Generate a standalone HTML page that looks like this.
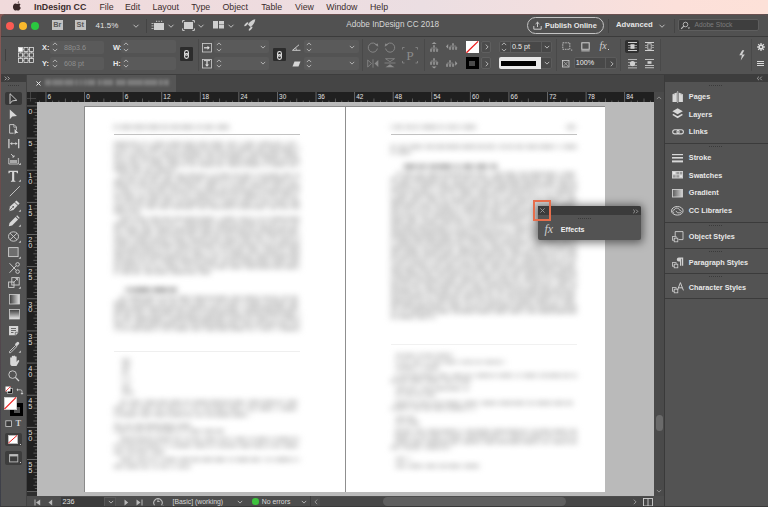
<!DOCTYPE html>
<html><head><meta charset="utf-8">
<style>
*{margin:0;padding:0;box-sizing:border-box}
html,body{width:768px;height:507px;overflow:hidden;background:#535353;font-family:"Liberation Sans",sans-serif}
.a{position:absolute}
.t{line-height:12px;white-space:nowrap;color:#e4e4e4;font-size:7px}
svg{overflow:visible}
</style></head><body>

<div class="a" style="left:0px;top:0px;width:768px;height:14px;background:linear-gradient(90deg,#f0dadb 0%,#eedcdf 35%,#ebdee2 55%,#f3dfdf 72%,#fce0da 88%,#fde1d8 100%)"></div>
<svg class="a" style="left:13.2px;top:1.3px" width="9" height="10" viewBox="0 0 9 10"><path d="M6.1 0.2c0.1 .8-.5 1.7-1.4 1.8-.1-.8.5-1.7 1.4-1.8zM7.6 3.3c-.6.4-.9 1-.9 1.6 0 .9.5 1.5 1.2 1.8-.2.6-.5 1.1-.9 1.6-.5.7-1 1.3-1.7 1.3s-.9-.4-1.6-.4-1 .4-1.6.4C1.5 9.6.9 8.8.5 8.1-.3 6.7-.2 4.6.7 3.5c.4-.6 1.1-1 1.8-1 .7 0 1.1.4 1.6.4s.9-.4 1.7-.4c.6 0 1.3.3 1.8.8z" fill="#3a2828"/></svg>
<div class="a t" style="left:34px;top:1.2000000000000002px;color:#3a2c2c;font-size:8.8px;font-weight:bold">InDesign CC</div>
<div class="a t" style="left:99.5px;top:1.2000000000000002px;color:#3a2c2c;font-size:8.8px">File</div>
<div class="a t" style="left:125px;top:1.2000000000000002px;color:#3a2c2c;font-size:8.8px">Edit</div>
<div class="a t" style="left:152.5px;top:1.2000000000000002px;color:#3a2c2c;font-size:8.8px">Layout</div>
<div class="a t" style="left:191.2px;top:1.2000000000000002px;color:#3a2c2c;font-size:8.8px">Type</div>
<div class="a t" style="left:222.5px;top:1.2000000000000002px;color:#3a2c2c;font-size:8.8px">Object</div>
<div class="a t" style="left:261.2px;top:1.2000000000000002px;color:#3a2c2c;font-size:8.8px">Table</div>
<div class="a t" style="left:295px;top:1.2000000000000002px;color:#3a2c2c;font-size:8.8px">View</div>
<div class="a t" style="left:326.2px;top:1.2000000000000002px;color:#3a2c2c;font-size:8.8px">Window</div>
<div class="a t" style="left:370px;top:1.2000000000000002px;color:#3a2c2c;font-size:8.8px">Help</div>
<div class="a" style="left:0px;top:14px;width:6px;height:493px;background:linear-gradient(180deg,#8a5a56,#6a4c4c 35%,#48444c 80%,#3c3f48)"></div>
<div class="a" style="left:1px;top:14px;width:767px;height:493px;background:#535353;border-radius:5px 5px 0 0"></div>
<div class="a" style="left:1px;top:14px;width:767px;height:22px;background:#515151;border-radius:5px 5px 0 0;border-top:1px solid #6a5050;border-left:1px solid #5a4a4a"></div>
<div class="a" style="left:1px;top:36px;width:767px;height:1px;background:#3b3b3b"></div>
<div class="a" style="left:6px;top:22px;width:8px;height:8px;background:#fb5a52;border-radius:50%"></div>
<div class="a" style="left:18.5px;top:22px;width:8px;height:8px;background:#fbb92c;border-radius:50%"></div>
<div class="a" style="left:31.200000000000003px;top:22px;width:8px;height:8px;background:#2bc840;border-radius:50%"></div>
<div class="a" style="left:52px;top:20px;width:10.5px;height:10px;background:#c2c2c2"></div>
<div class="a t" style="left:53.2px;top:19.2px;color:#5a5a5a;font-weight:bold;font-size:7.4px">Br</div>
<div class="a" style="left:75px;top:20px;width:10.5px;height:10px;background:#c2c2c2"></div>
<div class="a t" style="left:76.6px;top:19.2px;color:#5a5a5a;font-weight:bold;font-size:7.4px">St</div>
<div class="a t" style="left:95.6px;top:20px;font-size:8px;color:#e2e2e2">41.5%</div>
<svg class="a" style="left:131.6px;top:22.8px;" width="8" height="6" viewBox="0 0 8 6"><path d="M1.5 1.75 L4 4.25 L6.5 1.75" fill="none" stroke="#c8c8c8" stroke-width="0.9"/></svg>
<div class="a" style="left:146px;top:19px;width:1px;height:14px;background:#444"></div>
<svg class="a" style="left:151px;top:20px;" width="14" height="11" viewBox="0 0 14 11"><rect x="3" y="3" width="10" height="7" fill="#cfcfcf"/><g fill="#cfcfcf"><rect x="0.5" y="3" width="2" height="0.8"/><rect x="0.5" y="5.5" width="2" height="0.8"/><rect x="0.5" y="8" width="2" height="0.8"/><rect x="5" y="0.8" width="1.2" height="1"/><rect x="7.5" y="0.8" width="1.2" height="1"/><rect x="10" y="0.8" width="1.2" height="1"/></g></svg>
<svg class="a" style="left:167px;top:22.5px;" width="8" height="6" viewBox="0 0 8 6"><path d="M1.5 1.75 L4 4.25 L6.5 1.75" fill="none" stroke="#c8c8c8" stroke-width="0.9"/></svg>
<svg class="a" style="left:182px;top:20px;" width="13" height="11" viewBox="0 0 13 11"><rect x="2" y="2" width="9" height="7" fill="#cfcfcf"/><path d="M0.6 0.6h2M0.6 0.6v2M12.4 0.6h-2M12.4 0.6v2M0.6 10.4h2M0.6 10.4v-2M12.4 10.4h-2M12.4 10.4v-2" stroke="#cfcfcf" stroke-width="1"/></svg>
<svg class="a" style="left:197px;top:22.5px;" width="8" height="6" viewBox="0 0 8 6"><path d="M1.5 1.75 L4 4.25 L6.5 1.75" fill="none" stroke="#c8c8c8" stroke-width="0.9"/></svg>
<svg class="a" style="left:213px;top:21px;" width="11" height="8" viewBox="0 0 11 8"><rect x="0" y="0" width="5" height="7.5" fill="#cfcfcf"/><rect x="6" y="0" width="5" height="3.5" fill="#cfcfcf"/><rect x="6" y="4" width="5" height="3.5" fill="#cfcfcf"/></svg>
<svg class="a" style="left:227px;top:22.5px;" width="8" height="6" viewBox="0 0 8 6"><path d="M1.5 1.75 L4 4.25 L6.5 1.75" fill="none" stroke="#c8c8c8" stroke-width="0.9"/></svg>
<svg class="a" style="left:243px;top:18px;" width="14" height="14" viewBox="0 0 14 14"><g fill="#cfcfcf"><path d="M12.3 1.2C9.6 1.6 6.6 3.6 5 6.6L7.3 8.9C10.3 7.2 12 4 12.3 1.2z"/><ellipse cx="3.3" cy="6.2" rx="2.6" ry="1" transform="rotate(-42 3.3 6.2)"/><ellipse cx="7.6" cy="10.7" rx="2.6" ry="1" transform="rotate(-48 7.6 10.7)"/></g></svg>
<div class="a t" style="left:346.2px;top:19.4px;font-size:8.2px;color:#d6d6d6">Adobe InDesign CC 2018</div>
<div class="a" style="left:526.5px;top:17px;width:77.5px;height:17px;border:1px solid #c4c4c4;border-radius:9px"></div>
<svg class="a" style="left:533px;top:20.5px;" width="9" height="9" viewBox="0 0 9 9"><path d="M4.5 6V1.2M2.6 3L4.5 1.2 6.4 3" fill="none" stroke="#d8d8d8" stroke-width="0.9"/><path d="M0.8 5v3.2h7.4V5" fill="none" stroke="#d8d8d8" stroke-width="0.9"/></svg>
<div class="a t" style="left:545px;top:19.6px;font-size:7.4px;font-weight:bold;color:#e6e6e6">Publish Online</div>
<div class="a" style="left:607.7px;top:19px;width:1px;height:14px;background:#444"></div>
<div class="a t" style="left:616px;top:19.4px;font-size:7.7px;font-weight:bold;color:#e6e6e6">Advanced</div>
<svg class="a" style="left:657.8px;top:22.8px;" width="8" height="6" viewBox="0 0 8 6"><path d="M1.5 1.75 L4 4.25 L6.5 1.75" fill="none" stroke="#c8c8c8" stroke-width="0.9"/></svg>
<div class="a" style="left:673.5px;top:19px;width:1px;height:14px;background:#444"></div>
<div class="a" style="left:678.3px;top:19.4px;width:81.2px;height:12px;background:#3e3e3e;border:1px solid #5e5e5e;border-radius:2px"></div>
<svg class="a" style="left:680px;top:21px;" width="11" height="9" viewBox="0 0 11 9"><circle cx="5.5" cy="3.5" r="2.3" fill="none" stroke="#bdbdbd" stroke-width="0.9"/><path d="M3.8 5.2L1.2 7.8" stroke="#bdbdbd" stroke-width="1.1"/><path d="M7.6 6.6h2.6l-1.3 1.3z" fill="#bdbdbd"/></svg>
<div class="a t" style="left:694.5px;top:19.4px;font-size:6.7px;color:#7c7c7c">Adobe Stock</div>
<div class="a" style="left:1px;top:37px;width:767px;height:36.5px;background:#535353"></div>
<div class="a" style="left:1px;top:73.5px;width:767px;height:1px;background:#3d3d3d"></div>
<div class="a" style="left:4.5px;top:48.5px;width:1px;height:12px;background:#3f3f3f"></div>
<svg class="a" style="left:17px;top:46px;" width="18" height="18" viewBox="0 0 18 18"><rect x="1.5" y="1.5" width="4" height="4" fill="#ffffff" stroke="#e2e2e2" stroke-width="0.8"/><rect x="7.0" y="1.5" width="4" height="4" fill="none" stroke="#e2e2e2" stroke-width="0.8"/><rect x="12.5" y="1.5" width="4" height="4" fill="none" stroke="#e2e2e2" stroke-width="0.8"/><rect x="1.5" y="7.0" width="4" height="4" fill="none" stroke="#e2e2e2" stroke-width="0.8"/><rect x="7.0" y="7.0" width="4" height="4" fill="none" stroke="#e2e2e2" stroke-width="0.8"/><rect x="12.5" y="7.0" width="4" height="4" fill="none" stroke="#e2e2e2" stroke-width="0.8"/><rect x="1.5" y="12.5" width="4" height="4" fill="none" stroke="#e2e2e2" stroke-width="0.8"/><rect x="7.0" y="12.5" width="4" height="4" fill="none" stroke="#e2e2e2" stroke-width="0.8"/><rect x="12.5" y="12.5" width="4" height="4" fill="none" stroke="#e2e2e2" stroke-width="0.8"/><path d="M5.5 3.5h1.5M11 3.5h1.5M5.5 9h1.5M11 9h1.5M5.5 14.5h1.5M11 14.5h1.5M3.5 5.5v1.5M3.5 11v1.5M9 5.5v1.5M9 11v1.5M14.5 5.5v1.5M14.5 11v1.5" stroke="#e2e2e2" stroke-width="0.6"/></svg>
<div class="a t" style="left:42px;top:41.8px;font-weight:bold;color:#eaeaea;font-size:7.4px">X:</div>
<div class="a t" style="left:42px;top:57.6px;font-weight:bold;color:#eaeaea;font-size:7.4px">Y:</div>
<div class="a" style="left:50px;top:40.5px;width:54px;height:13.2px;background:#5a5a5a;border-radius:2px"></div>
<div class="a" style="left:50px;top:57px;width:54px;height:13px;background:#5a5a5a;border-radius:2px"></div>
<svg class="a" style="left:51px;top:41.1px;" width="8" height="6" viewBox="0 0 8 6"><path d="M1.7999999999999998 4.1 L4 1.9 L6.2 4.1" fill="none" stroke="#c6c6c6" stroke-width="0.8"/></svg>
<svg class="a" style="left:51px;top:46.9px;" width="8" height="6" viewBox="0 0 8 6"><path d="M1.7999999999999998 1.9 L4 4.1 L6.2 1.9" fill="none" stroke="#c6c6c6" stroke-width="0.8"/></svg>
<svg class="a" style="left:51px;top:57.6px;" width="8" height="6" viewBox="0 0 8 6"><path d="M1.7999999999999998 4.1 L4 1.9 L6.2 4.1" fill="none" stroke="#c6c6c6" stroke-width="0.8"/></svg>
<svg class="a" style="left:51px;top:63.400000000000006px;" width="8" height="6" viewBox="0 0 8 6"><path d="M1.7999999999999998 1.9 L4 4.1 L6.2 1.9" fill="none" stroke="#c6c6c6" stroke-width="0.8"/></svg>
<div class="a t" style="left:64px;top:41.5px;color:#8e8e8e;font-size:7.2px">88p3.6</div>
<div class="a t" style="left:64px;top:57.6px;color:#8e8e8e;font-size:7.2px">608 pt</div>
<div class="a t" style="left:113px;top:41.8px;font-weight:bold;color:#eaeaea;font-size:7.4px">W:</div>
<div class="a t" style="left:113px;top:57.6px;font-weight:bold;color:#eaeaea;font-size:7.4px">H:</div>
<div class="a" style="left:121px;top:40.4px;width:55px;height:12.9px;background:#5a5a5a;border-radius:2px"></div>
<div class="a" style="left:121px;top:57px;width:55px;height:12.8px;background:#5a5a5a;border-radius:2px"></div>
<svg class="a" style="left:122px;top:41.1px;" width="8" height="6" viewBox="0 0 8 6"><path d="M1.7999999999999998 4.1 L4 1.9 L6.2 4.1" fill="none" stroke="#c6c6c6" stroke-width="0.8"/></svg>
<svg class="a" style="left:122px;top:46.9px;" width="8" height="6" viewBox="0 0 8 6"><path d="M1.7999999999999998 1.9 L4 4.1 L6.2 1.9" fill="none" stroke="#c6c6c6" stroke-width="0.8"/></svg>
<svg class="a" style="left:122px;top:57.6px;" width="8" height="6" viewBox="0 0 8 6"><path d="M1.7999999999999998 4.1 L4 1.9 L6.2 4.1" fill="none" stroke="#c6c6c6" stroke-width="0.8"/></svg>
<svg class="a" style="left:122px;top:63.400000000000006px;" width="8" height="6" viewBox="0 0 8 6"><path d="M1.7999999999999998 1.9 L4 4.1 L6.2 1.9" fill="none" stroke="#c6c6c6" stroke-width="0.8"/></svg>
<div class="a" style="left:180px;top:47.3px;width:13.3px;height:13.3px;background:#2c2c2c;border-radius:1px"></div>
<svg class="a" style="left:184.2px;top:49.8px;" width="5" height="9" viewBox="0 0 5 9"><rect x="0.6" y="0.5" width="3.8" height="4.8" rx="1.9" fill="none" stroke="#e6e6e6" stroke-width="1.1"/><rect x="0.6" y="3.6" width="3.8" height="4.8" rx="1.9" fill="none" stroke="#e6e6e6" stroke-width="1.1"/></svg>
<div class="a" style="left:197.5px;top:39px;width:1px;height:32px;background:#494949"></div>
<svg class="a" style="left:202px;top:43px;" width="10" height="9.5" viewBox="0 0 10 9.5"><rect x="0.5" y="0.5" width="9" height="8.5" fill="none" stroke="#d0d0d0" stroke-width="0.8"/><path d="M2 4.8h4.5" stroke="#e0e0e0" stroke-width="1.2"/><path d="M5.5 2.8l2.3 2-2.3 2z" fill="#e0e0e0"/></svg>
<svg class="a" style="left:202px;top:59px;" width="10" height="9.5" viewBox="0 0 10 9.5"><rect x="0.5" y="0.5" width="9" height="8.5" fill="none" stroke="#d0d0d0" stroke-width="0.8"/><path d="M2 1.6h6" stroke="#e0e0e0" stroke-width="0.9"/><path d="M5 2v4" stroke="#e0e0e0" stroke-width="1.2"/><path d="M3 5.5l2 2.2 2-2.2z" fill="#e0e0e0"/></svg>
<div class="a" style="left:214px;top:40.4px;width:55px;height:12.9px;background:#5a5a5a;border-radius:2px"></div>
<div class="a" style="left:214px;top:57px;width:55px;height:12.8px;background:#5a5a5a;border-radius:2px"></div>
<svg class="a" style="left:215px;top:41.1px;" width="8" height="6" viewBox="0 0 8 6"><path d="M1.7999999999999998 4.1 L4 1.9 L6.2 4.1" fill="none" stroke="#c6c6c6" stroke-width="0.8"/></svg>
<svg class="a" style="left:215px;top:46.9px;" width="8" height="6" viewBox="0 0 8 6"><path d="M1.7999999999999998 1.9 L4 4.1 L6.2 1.9" fill="none" stroke="#c6c6c6" stroke-width="0.8"/></svg>
<svg class="a" style="left:215px;top:57.6px;" width="8" height="6" viewBox="0 0 8 6"><path d="M1.7999999999999998 4.1 L4 1.9 L6.2 4.1" fill="none" stroke="#c6c6c6" stroke-width="0.8"/></svg>
<svg class="a" style="left:215px;top:63.400000000000006px;" width="8" height="6" viewBox="0 0 8 6"><path d="M1.7999999999999998 1.9 L4 4.1 L6.2 1.9" fill="none" stroke="#c6c6c6" stroke-width="0.8"/></svg>
<svg class="a" style="left:259px;top:44px;" width="8" height="6" viewBox="0 0 8 6"><path d="M1.7999999999999998 1.9 L4 4.1 L6.2 1.9" fill="none" stroke="#c6c6c6" stroke-width="0.8"/></svg>
<svg class="a" style="left:259px;top:60.4px;" width="8" height="6" viewBox="0 0 8 6"><path d="M1.7999999999999998 1.9 L4 4.1 L6.2 1.9" fill="none" stroke="#c6c6c6" stroke-width="0.8"/></svg>
<div class="a" style="left:273px;top:48px;width:13.3px;height:13.3px;background:#2c2c2c;border-radius:1px"></div>
<svg class="a" style="left:277.2px;top:50.5px;" width="5" height="9" viewBox="0 0 5 9"><rect x="0.6" y="0.5" width="3.8" height="4.8" rx="1.9" fill="none" stroke="#e6e6e6" stroke-width="1.1"/><rect x="0.6" y="3.6" width="3.8" height="4.8" rx="1.9" fill="none" stroke="#e6e6e6" stroke-width="1.1"/></svg>
<svg class="a" style="left:292px;top:44px;" width="9" height="7" viewBox="0 0 9 7"><path d="M0.5 6.3h8M0.5 6.3L7 0.8" fill="none" stroke="#d6d6d6" stroke-width="0.9"/><path d="M4.5 6.3a3.5 3.5 0 0 0-1-2.4" fill="none" stroke="#d6d6d6" stroke-width="0.7"/></svg>
<svg class="a" style="left:292px;top:60.5px;" width="9" height="6" viewBox="0 0 9 6"><path d="M2.5 0.5h6l-2 5h-6z" fill="#d6d6d6"/></svg>
<div class="a" style="left:303.8px;top:40.4px;width:54.8px;height:12.9px;background:#5a5a5a;border-radius:2px"></div>
<div class="a" style="left:303.8px;top:57px;width:54.8px;height:12.8px;background:#5a5a5a;border-radius:2px"></div>
<svg class="a" style="left:305px;top:41.1px;" width="8" height="6" viewBox="0 0 8 6"><path d="M1.7999999999999998 4.1 L4 1.9 L6.2 4.1" fill="none" stroke="#c6c6c6" stroke-width="0.8"/></svg>
<svg class="a" style="left:305px;top:46.9px;" width="8" height="6" viewBox="0 0 8 6"><path d="M1.7999999999999998 1.9 L4 4.1 L6.2 1.9" fill="none" stroke="#c6c6c6" stroke-width="0.8"/></svg>
<svg class="a" style="left:305px;top:57.6px;" width="8" height="6" viewBox="0 0 8 6"><path d="M1.7999999999999998 4.1 L4 1.9 L6.2 4.1" fill="none" stroke="#c6c6c6" stroke-width="0.8"/></svg>
<svg class="a" style="left:305px;top:63.400000000000006px;" width="8" height="6" viewBox="0 0 8 6"><path d="M1.7999999999999998 1.9 L4 4.1 L6.2 1.9" fill="none" stroke="#c6c6c6" stroke-width="0.8"/></svg>
<svg class="a" style="left:348px;top:44px;" width="8" height="6" viewBox="0 0 8 6"><path d="M1.7999999999999998 1.9 L4 4.1 L6.2 1.9" fill="none" stroke="#c6c6c6" stroke-width="0.8"/></svg>
<svg class="a" style="left:348px;top:60.4px;" width="8" height="6" viewBox="0 0 8 6"><path d="M1.7999999999999998 1.9 L4 4.1 L6.2 1.9" fill="none" stroke="#c6c6c6" stroke-width="0.8"/></svg>
<div class="a" style="left:362px;top:39px;width:1px;height:32px;background:#494949"></div>
<svg class="a" style="left:367px;top:41px;" width="12" height="12" viewBox="0 0 12 12"><path d="M9.8 4.2A4.6 4.6 0 1 0 10.4 7.5" fill="none" stroke="#8a8a8a" stroke-width="0.9"/><path d="M7.6 3.5l3.2-.9.5 3.2z" fill="#8a8a8a"/></svg>
<svg class="a" style="left:384px;top:41px;" width="12" height="12" viewBox="0 0 12 12"><path d="M2.2 4.2A4.6 4.6 0 1 1 1.6 7.5" fill="none" stroke="#8a8a8a" stroke-width="0.9"/><path d="M4.4 3.5l-3.2-.9-.5 3.2z" fill="#8a8a8a"/></svg>
<svg class="a" style="left:367px;top:58.5px;" width="12" height="9" viewBox="0 0 12 9"><path d="M0.7 1l3.8 3.5-3.8 3.5z" fill="none" stroke="#8a8a8a" stroke-width="0.8"/><path d="M6 0.3v8.4" stroke="#8a8a8a" stroke-width="0.8"/><path d="M11.3 1l-3.8 3.5 3.8 3.5z" fill="#8a8a8a"/></svg>
<svg class="a" style="left:384px;top:57.5px;" width="12" height="10" viewBox="0 0 12 10"><path d="M1.5 0.7h9l-4.5 3z" fill="none" stroke="#8a8a8a" stroke-width="0.8"/><path d="M0.5 5h11" stroke="#8a8a8a" stroke-width="0.8"/><path d="M1.5 9.3h9l-4.5-3z" fill="#8a8a8a"/></svg>
<svg class="a" style="left:402px;top:46.5px;" width="16" height="16.5" viewBox="0 0 16 16.5"><path d="M0.5 2.5v-2h2M13.5 0.5h2v2M0.5 14v2h2M13.5 16h2v-2" fill="none" stroke="#8a8a8a" stroke-width="0.8"/><text x="8" y="13.2" text-anchor="middle" font-family="Liberation Serif" font-size="13.5" fill="#8a8a8a">P</text></svg>
<div class="a" style="left:423.5px;top:39px;width:1px;height:32px;background:#494949"></div>
<svg class="a" style="left:429.5px;top:41.5px;" width="9" height="11" viewBox="0 0 9 11"><path d="M1.6 2L4.1 0 6.6 2z" fill="#9c9c9c"/><g transform="translate(0,3)"><g fill="#8a8a8a"><rect x="3" y="0" width="2" height="2.8" rx="0.9"/><rect x="1" y="2.6" width="6" height="0.9"/><rect x="0" y="3.4" width="2.1" height="3.6" rx="0.9"/><rect x="3" y="3.4" width="2.1" height="3.6" rx="0.9"/><rect x="6" y="3.4" width="2.1" height="3.6" rx="0.9"/></g></g></svg>
<svg class="a" style="left:429.5px;top:58px;" width="9" height="12" viewBox="0 0 9 12"><g transform="translate(0,0)"><g fill="#8a8a8a"><rect x="3" y="0" width="2" height="2.8" rx="0.9"/><rect x="1" y="2.6" width="6" height="0.9"/><rect x="0" y="3.4" width="2.1" height="3.6" rx="0.9"/><rect x="3" y="3.4" width="2.1" height="3.6" rx="0.9"/><rect x="6" y="3.4" width="2.1" height="3.6" rx="0.9"/></g></g><path d="M1.6 8.4L4.1 10.6 6.6 8.4z" fill="#9c9c9c"/></svg>
<svg class="a" style="left:445.5px;top:43px;" width="12" height="8" viewBox="0 0 12 8"><path d="M2.2 1L0 3.4 2.2 5.8z" fill="#9c9c9c"/><g transform="translate(3,0)"><g fill="#8a8a8a"><rect x="3" y="0" width="2" height="2.8" rx="0.9"/><rect x="1" y="2.6" width="6" height="0.9"/><rect x="0" y="3.4" width="2.1" height="3.6" rx="0.9"/><rect x="3" y="3.4" width="2.1" height="3.6" rx="0.9"/><rect x="6" y="3.4" width="2.1" height="3.6" rx="0.9"/></g></g></svg>
<svg class="a" style="left:445.5px;top:59.5px;" width="12" height="8" viewBox="0 0 12 8"><g transform="translate(0,0)"><g fill="#8a8a8a"><rect x="3" y="0" width="2" height="2.8" rx="0.9"/><rect x="1" y="2.6" width="6" height="0.9"/><rect x="0" y="3.4" width="2.1" height="3.6" rx="0.9"/><rect x="3" y="3.4" width="2.1" height="3.6" rx="0.9"/><rect x="6" y="3.4" width="2.1" height="3.6" rx="0.9"/></g></g><path d="M9.2 1L11.4 3.4 9.2 5.8z" fill="#9c9c9c"/></svg>
<div class="a" style="left:466px;top:40.8px;width:12.5px;height:12.2px;background:#fff"></div>
<svg class="a" style="left:466px;top:40.8px;" width="12.5" height="12.2" viewBox="0 0 12.5 12.2"><path d="M0.4 11.8L12.1 0.4" stroke="#ee1c1c" stroke-width="1.3"/></svg>
<div class="a" style="left:466px;top:57.3px;width:12.5px;height:12.2px;background:#000"></div>
<div class="a" style="left:469.3px;top:60.5px;width:6px;height:5.8px;background:#4a4a4a"></div>
<div class="a" style="left:481px;top:40.8px;width:10.3px;height:12.2px;background:#4c4c4c;border:1px solid #5f5f5f;border-radius:2px"></div>
<svg class="a" style="left:484.5px;top:44.3px;" width="4" height="6" viewBox="0 0 4 6"><path d="M0.8 0.6L3 2.9 0.8 5.2" fill="none" stroke="#d0d0d0" stroke-width="0.8"/></svg>
<div class="a" style="left:481px;top:57.3px;width:10.3px;height:12.2px;background:#4c4c4c;border:1px solid #5f5f5f;border-radius:2px"></div>
<svg class="a" style="left:484.5px;top:60.8px;" width="4" height="6" viewBox="0 0 4 6"><path d="M0.8 0.6L3 2.9 0.8 5.2" fill="none" stroke="#d0d0d0" stroke-width="0.8"/></svg>
<div class="a" style="left:498.8px;top:40.8px;width:53.7px;height:12.2px;background:#484848;border:1px solid #5c5c5c;border-radius:2px"></div>
<div class="a" style="left:509.8px;top:40.8px;width:1px;height:12.2px;background:#5c5c5c"></div>
<div class="a" style="left:541.2px;top:40.8px;width:1px;height:12.2px;background:#5c5c5c"></div>
<svg class="a" style="left:500.2px;top:41.2px;" width="8" height="6" viewBox="0 0 8 6"><path d="M1.7999999999999998 4.1 L4 1.9 L6.2 4.1" fill="none" stroke="#c6c6c6" stroke-width="0.8"/></svg>
<svg class="a" style="left:500.2px;top:47.0px;" width="8" height="6" viewBox="0 0 8 6"><path d="M1.7999999999999998 1.9 L4 4.1 L6.2 1.9" fill="none" stroke="#c6c6c6" stroke-width="0.8"/></svg>
<div class="a t" style="left:512px;top:41px;font-size:7.2px;color:#ececec">0.5 pt</div>
<svg class="a" style="left:543px;top:44px;" width="8" height="6" viewBox="0 0 8 6"><path d="M1.7999999999999998 1.9 L4 4.1 L6.2 1.9" fill="none" stroke="#d0d0d0" stroke-width="0.8"/></svg>
<div class="a" style="left:498.8px;top:57.1px;width:53.7px;height:12.4px;background:#484848;border:1px solid #5c5c5c;border-radius:2px"></div>
<div class="a" style="left:498.8px;top:57.1px;width:42.4px;height:12.4px;background:#e8e8e8;border-radius:2px 0 0 2px"></div>
<div class="a" style="left:501.2px;top:61px;width:34.5px;height:5px;background:#000"></div>
<svg class="a" style="left:543px;top:60.4px;" width="8" height="6" viewBox="0 0 8 6"><path d="M1.7999999999999998 1.9 L4 4.1 L6.2 1.9" fill="none" stroke="#d0d0d0" stroke-width="0.8"/></svg>
<div class="a" style="left:556px;top:39px;width:1px;height:32px;background:#494949"></div>
<svg class="a" style="left:562px;top:42px;" width="11" height="9" viewBox="0 0 11 9"><rect x="0.8" y="0.8" width="7" height="6.5" fill="none" stroke="#d2d2d2" stroke-width="0.8" stroke-dasharray="1.6 0.8"/><rect x="9.2" y="7.6" width="1" height="1" fill="#d2d2d2"/></svg>
<svg class="a" style="left:581px;top:42px;" width="9" height="10" viewBox="0 0 9 10"><rect x="0.8" y="0.8" width="7.4" height="6.5" fill="none" stroke="#d2d2d2" stroke-width="1"/><rect x="0.3" y="7.6" width="8.4" height="2" fill="#9a9a9a"/></svg>
<div class="a" style="left:599.5px;top:41px;font-family:Liberation Serif;font-style:italic;font-size:10px;line-height:10px;color:#cfcfcf">fx</div>
<div class="a" style="left:608.3px;top:49.3px;width:1px;height:1px;background:#d2d2d2"></div>
<svg class="a" style="left:562px;top:59.5px;" width="7.5" height="7.5" viewBox="0 0 7.5 7.5"><rect x="0.5" y="0.5" width="6.5" height="6.5" fill="none" stroke="#d0d0d0" stroke-width="0.8"/><path d="M1.5 1.5l4.5 4.5M6 1.5L1.5 6" stroke="#a8a8a8" stroke-width="0.8"/></svg>
<div class="a" style="left:573.5px;top:56.7px;width:43.8px;height:12.8px;background:#484848;border:1px solid #5c5c5c;border-radius:2px"></div>
<div class="a" style="left:605.3px;top:56.7px;width:1px;height:12.8px;background:#5c5c5c"></div>
<div class="a t" style="left:575.8px;top:57.2px;font-size:7.2px;color:#ececec">100%</div>
<svg class="a" style="left:609.5px;top:60.5px;" width="4" height="6" viewBox="0 0 4 6"><path d="M0.8 0.6L3 2.9 0.8 5.2" fill="none" stroke="#d0d0d0" stroke-width="0.8"/></svg>
<div class="a" style="left:620.4px;top:39px;width:1px;height:32px;background:#494949"></div>
<div class="a" style="left:625px;top:39.8px;width:13.8px;height:13.5px;background:#303030;border-radius:2px"></div>
<svg class="a" style="left:627.5px;top:42px;" width="9" height="9.5" viewBox="0 0 9 9.5"><rect x="0" y="0" width="9" height="1" fill="#cfcfcf"/><rect x="0" y="8" width="9" height="1" fill="#cfcfcf"/><rect x="2.5" y="2.2" width="4" height="4.6" fill="#cfcfcf"/><rect x="0" y="3" width="9" height="0.6" fill="#cfcfcf"/><rect x="0" y="5.6" width="9" height="0.6" fill="#cfcfcf"/></svg>
<svg class="a" style="left:645px;top:42px;" width="9" height="9.5" viewBox="0 0 9 9.5"><rect x="0" y="0" width="9" height="1" fill="#cfcfcf"/><rect x="0" y="8" width="9" height="1" fill="#cfcfcf"/><rect x="2.8" y="1.8" width="3.4" height="5.4" fill="none" stroke="#cfcfcf" stroke-width="0.8"/><rect x="0" y="3" width="2" height="0.6" fill="#cfcfcf"/><rect x="7" y="3" width="2" height="0.6" fill="#cfcfcf"/><rect x="0" y="5.4" width="2" height="0.6" fill="#cfcfcf"/><rect x="7" y="5.4" width="2" height="0.6" fill="#cfcfcf"/></svg>
<svg class="a" style="left:627.5px;top:58.5px;" width="9" height="9.5" viewBox="0 0 9 9.5"><rect x="0" y="0" width="9" height="0.8" fill="#cfcfcf"/><rect x="0" y="8.5" width="9" height="0.8" fill="#cfcfcf"/><circle cx="4.5" cy="4.6" r="2.6" fill="#cfcfcf"/><rect x="0" y="3" width="9" height="0.6" fill="#cfcfcf"/><rect x="0" y="6" width="9" height="0.6" fill="#cfcfcf"/></svg>
<svg class="a" style="left:645px;top:58.5px;" width="9" height="9.5" viewBox="0 0 9 9.5"><rect x="0" y="0" width="9" height="0.9" fill="#cfcfcf"/><rect x="2.5" y="2.2" width="4" height="2.6" fill="#cfcfcf"/><rect x="0" y="6" width="9" height="0.9" fill="#cfcfcf"/><rect x="0" y="8.3" width="9" height="0.9" fill="#cfcfcf"/></svg>
<div class="a" style="left:659.8px;top:39px;width:1px;height:32px;background:#494949"></div>
<svg class="a" style="left:737.5px;top:49.5px;" width="8" height="11" viewBox="0 0 8 11"><path d="M4.2 0.3L1.3 5.2h2.6L2.7 10.5 6.8 4.6H4.1L6.3 0.3z" fill="#cfcfcf"/></svg>
<div class="a" style="left:750.8px;top:39px;width:1px;height:32px;background:#494949"></div>
<svg class="a" style="left:756.5px;top:43px;" width="8" height="8" viewBox="0 0 8 8"><g fill="#dcdcdc"><circle cx="4" cy="4" r="2.6"/><rect x="3.4" y="0" width="1.2" height="8"/><rect x="0" y="3.4" width="8" height="1.2"/><rect x="3.4" y="0" width="1.2" height="8" transform="rotate(45 4 4)"/><rect x="3.4" y="0" width="1.2" height="8" transform="rotate(-45 4 4)"/></g><circle cx="4" cy="4" r="1.1" fill="#535353"/></svg>
<div class="a" style="left:756.5px;top:61px;width:7.7px;height:1px;background:#d8d8d8"></div>
<div class="a" style="left:756.5px;top:63px;width:7.7px;height:1px;background:#d8d8d8"></div>
<div class="a" style="left:756.5px;top:65px;width:7.7px;height:1px;background:#d8d8d8"></div>
<div class="a" style="left:26px;top:74.5px;width:637.5px;height:18px;background:#454545"></div>
<div class="a" style="left:26.5px;top:74.5px;width:149px;height:17px;background:#555555"></div>
<svg class="a" style="left:36px;top:81px;" width="5" height="5" viewBox="0 0 5 5"><path d="M0.5 0.5l4 4M4.5 0.5l-4 4" stroke="#e6e6e6" stroke-width="1"/></svg>
<svg class="a" style="left:40px;top:76px;filter:blur(1.8px)" width="135" height="14"><rect x="5.0" y="3.5" width="6.5" height="6" fill="#7c7c7c"/><rect x="12.4" y="3.5" width="11.1" height="6" fill="#7c7c7c"/><rect x="24.3" y="3.5" width="9.5" height="6" fill="#7c7c7c"/><rect x="35.2" y="3.5" width="2.8" height="6" fill="#7c7c7c"/><rect x="39.6" y="3.5" width="2.5" height="6" fill="#7c7c7c"/><rect x="43.6" y="3.5" width="3.0" height="6" fill="#7c7c7c"/><rect x="47.4" y="3.5" width="7.9" height="6" fill="#7c7c7c"/><rect x="57.6" y="3.5" width="3.7" height="6" fill="#7c7c7c"/><rect x="62.4" y="3.5" width="10.8" height="6" fill="#7c7c7c"/><rect x="75.7" y="3.5" width="10.1" height="6" fill="#7c7c7c"/><rect x="87.2" y="3.5" width="15.7" height="6" fill="#7c7c7c"/><rect x="103.6" y="3.5" width="14.0" height="6" fill="#7c7c7c"/><rect x="118.8" y="3.5" width="4.0" height="6" fill="#7c7c7c"/><rect x="123.6" y="3.5" width="5.4" height="6" fill="#7c7c7c"/></svg>
<div class="a" style="left:1px;top:74.5px;width:25px;height:433px;background:#535353"></div>
<div class="a" style="left:1px;top:74.5px;width:25px;height:7.3px;background:#3d3d3d"></div>
<svg class="a" style="left:4px;top:75.6px;" width="8" height="5" viewBox="0 0 8 5"><path d="M0.8 0.6l1.8 1.8-1.8 1.8M3.6 0.6l1.8 1.8-1.8 1.8" fill="none" stroke="#bdbdbd" stroke-width="0.8"/></svg>
<div class="a" style="left:8px;top:84.5px;width:1px;height:1px;background:#3a3a3a"></div>
<div class="a" style="left:10px;top:84.5px;width:1px;height:1px;background:#3a3a3a"></div>
<div class="a" style="left:12px;top:84.5px;width:1px;height:1px;background:#3a3a3a"></div>
<div class="a" style="left:14px;top:84.5px;width:1px;height:1px;background:#3a3a3a"></div>
<div class="a" style="left:16px;top:84.5px;width:1px;height:1px;background:#3a3a3a"></div>
<div class="a" style="left:18px;top:84.5px;width:1px;height:1px;background:#3a3a3a"></div>
<div class="a" style="left:26px;top:74.5px;width:1px;height:433px;background:#424242"></div>
<div class="a" style="left:4.6px;top:91.5px;width:17.3px;height:13.3px;background:#383838;border-radius:2px"></div>
<svg class="a" style="left:9.4px;top:93px;" width="9" height="12" viewBox="0 0 9 12"><path d="M1 0.7L1 10.6 3.3 7.9 7.8 7.3Z" fill="none" stroke="#d8d8d8" stroke-width="0.9" stroke-linejoin="miter"/></svg>
<svg class="a" style="left:9.4px;top:108.8px;" width="9" height="11" viewBox="0 0 9 11"><path d="M0.8 0.4L0.8 10.2 3.3 7.5 8 6.9Z" fill="#d8d8d8"/></svg>
<svg class="a" style="left:9.4px;top:123.6px;" width="10" height="11" viewBox="0 0 10 11"><path d="M0.6 0.6h4.5l2.3 2.3v3.3M0.6 0.6v8.6h4" fill="none" stroke="#d0d0d0" stroke-width="0.9"/><path d="M4.8 0.6v2.6h2.6" fill="none" stroke="#d0d0d0" stroke-width="0.7"/><path d="M5.6 4.8v5.6l1.4-1.3 2.3 0z" fill="#d8d8d8"/></svg>
<svg class="a" style="left:7.5px;top:138.8px;" width="12" height="10" viewBox="0 0 12 10"><path d="M0.9 0v9.2M10.7 0v9.2" stroke="#d0d0d0" stroke-width="1.3"/><path d="M2.4 4.6h6.8" stroke="#d0d0d0" stroke-width="0.9"/><path d="M2.2 4.6l2-1.6v3.2zM9.4 4.6l-2-1.6v3.2z" fill="#d0d0d0"/></svg>
<svg class="a" style="left:8px;top:152.5px;" width="13" height="12" viewBox="0 0 13 12"><path d="M0.8 5v6h9.5V5" fill="none" stroke="#d0d0d0" stroke-width="0.9"/><rect x="2" y="7" width="7" height="3" fill="#a8a8a8"/><path d="M3 1l3 3M6 4V2.2M6 4H4.2" fill="none" stroke="#d0d0d0" stroke-width="0.9"/><path d="M12.8 9.8v2.2h-2.2z" fill="#cfcfcf"/></svg>
<svg class="a" style="left:8px;top:169.5px;" width="13" height="12" viewBox="0 0 13 12"><path d="M0.5 0.8h9.5v2.5h-1l-.6-1.4H6.2v8.6l1.2.4v.9H2.9v-.9l1.2-.4V1.9H2l-.6 1.4h-1z" fill="#d8d8d8"/><path d="M12.8 9.6v2.2h-2.2z" fill="#cfcfcf"/></svg>
<svg class="a" style="left:9px;top:185px;" width="12" height="12" viewBox="0 0 12 12"><path d="M0.8 11.2L10.8 1.2" stroke="#d0d0d0" stroke-width="0.9"/></svg>
<svg class="a" style="left:8px;top:200px;" width="13" height="12" viewBox="0 0 13 12"><path d="M1 11.2L2 6.6 6.4 2.4 9.6 5.6 5.4 10z" fill="#d8d8d8"/><path d="M6.9 1.9L8.4 0.4 11.6 3.6 10.1 5.1z" fill="#d8d8d8"/><path d="M1.2 11L4.6 7.4" stroke="#535353" stroke-width="0.8"/><circle cx="5.2" cy="6.8" r="0.9" fill="#535353"/><path d="M12.8 9.6v2.2h-2.2z" fill="#cfcfcf"/></svg>
<svg class="a" style="left:8px;top:215px;" width="13" height="12" viewBox="0 0 13 12"><path d="M0.8 11.2l.7-3.3 6-6 2.6 2.6-6 6z" fill="#d8d8d8"/><path d="M8.2 1.2l.9-.9 2.6 2.6-.9.9z" fill="#d8d8d8"/><path d="M12.8 9.6v2.2h-2.2z" fill="#cfcfcf"/></svg>
<svg class="a" style="left:8px;top:230.5px;" width="13" height="12" viewBox="0 0 13 12"><ellipse cx="5.5" cy="5.5" rx="5" ry="4.7" fill="none" stroke="#d0d0d0" stroke-width="0.9"/><path d="M2 2.2l7 6.6M9 2.2L2 8.8" stroke="#d0d0d0" stroke-width="0.9"/><path d="M12.8 9.6v2.2h-2.2z" fill="#cfcfcf"/></svg>
<svg class="a" style="left:8px;top:246.5px;" width="13" height="12" viewBox="0 0 13 12"><rect x="0.6" y="0.6" width="9.5" height="9" fill="#6e6e6e" stroke="#cfcfcf" stroke-width="0.9"/><path d="M12.8 9.6v2.2h-2.2z" fill="#cfcfcf"/></svg>
<svg class="a" style="left:9px;top:262px;" width="11" height="12" viewBox="0 0 11 12"><circle cx="8.6" cy="2.4" r="1.8" fill="none" stroke="#d4d4d4" stroke-width="0.9"/><circle cx="8.6" cy="9.6" r="1.8" fill="none" stroke="#d4d4d4" stroke-width="0.9"/><path d="M0.5 1.2l6.6 7M0.5 10.8l6.6-7" stroke="#d4d4d4" stroke-width="0.9"/></svg>
<svg class="a" style="left:7.5px;top:277px;" width="13" height="12" viewBox="0 0 13 12"><rect x="3.8" y="0.6" width="7.4" height="7.4" fill="none" stroke="#d0d0d0" stroke-width="0.9"/><rect x="0.6" y="5" width="5.4" height="5.4" fill="none" stroke="#d0d0d0" stroke-width="0.9"/><path d="M5.5 5.5l4-4M7.5 1.5h2v2" fill="none" stroke="#d0d0d0" stroke-width="0.8"/><path d="M12.8 9.6v2.2h-2.2z" fill="#cfcfcf"/></svg>
<svg class="a" style="left:8.8px;top:293.5px;" width="11" height="11" viewBox="0 0 11 11"><defs><linearGradient id="g1" x1="0" x2="1"><stop offset="0" stop-color="#3a3a3a"/><stop offset="1" stop-color="#e0e0e0"/></linearGradient></defs><rect x="0.5" y="0.5" width="10" height="9.5" fill="url(#g1)" stroke="#cfcfcf" stroke-width="0.8"/></svg>
<svg class="a" style="left:8.8px;top:308.5px;" width="11" height="11" viewBox="0 0 11 11"><defs><linearGradient id="g2" x1="0" x2="0" y1="0" y2="1"><stop offset="0" stop-color="#3a3a3a"/><stop offset="1" stop-color="#e8e8e8"/></linearGradient></defs><rect x="0.5" y="0.5" width="10" height="9.5" fill="url(#g2)" stroke="#cfcfcf" stroke-width="0.8"/></svg>
<svg class="a" style="left:9px;top:326px;" width="10" height="10" viewBox="0 0 10 10"><path d="M0 0h9.2v6.8L6.8 9.2H0z" fill="#d4d4d4"/><path d="M2 2.5h5M2 4.5h5M2 6.5h2.5" stroke="#6a6a6a" stroke-width="1"/><path d="M6.3 9.2V6.3h2.9" fill="none" stroke="#5a5a5a" stroke-width="0.7"/></svg>
<svg class="a" style="left:8px;top:340.5px;" width="13" height="12" viewBox="0 0 13 12"><path d="M1.5 10.5l6-6 1.2 1.2-6 6H1.5z" fill="none" stroke="#d0d0d0" stroke-width="0.9"/><path d="M6.8 3.3l2-2a1.3 1.3 0 0 1 2 2l-2 2z" fill="#d4d4d4"/><path d="M12.8 9.6v2.2h-2.2z" fill="#cfcfcf"/></svg>
<svg class="a" style="left:8px;top:355px;" width="12" height="12" viewBox="0 0 12 12"><path d="M2.2 6.5V3a.8.8 0 0 1 1.6 0v3V1.6a.8.8 0 0 1 1.6 0V6V1.2a.8.8 0 0 1 1.6 0V6V2a.8.8 0 0 1 1.6 0v5l1-1.6a.9.9 0 0 1 1.5 1L8.5 11H4C2.8 11 2.2 9.8 2.2 8.5z" fill="#d8d8d8"/></svg>
<svg class="a" style="left:8px;top:370px;" width="12" height="12" viewBox="0 0 12 12"><circle cx="4.6" cy="4.6" r="3.8" fill="none" stroke="#d0d0d0" stroke-width="0.9"/><path d="M7.4 7.4l3.6 3.6" stroke="#d0d0d0" stroke-width="1.3"/></svg>
<svg class="a" style="left:5px;top:386px;" width="8" height="8" viewBox="0 0 8 8"><rect x="2.5" y="2.5" width="5" height="5" fill="#111" stroke="#ddd" stroke-width="0.6"/><rect x="0.5" y="0.5" width="5" height="5" fill="#fff"/><path d="M0.6 5.4L5.4 0.6" stroke="#ee1c1c" stroke-width="0.8"/></svg>
<svg class="a" style="left:16px;top:387.5px;" width="7" height="7" viewBox="0 0 7 7"><path d="M1 1.8h3.5a1.5 1.5 0 0 1 1.5 1.5V6" fill="none" stroke="#cfcfcf" stroke-width="0.8"/><path d="M2 0.3L0.5 1.8 2 3.3zM4.5 5l1.5 1.8L7.5 5z" fill="#cfcfcf"/></svg>
<div class="a" style="left:10px;top:403px;width:13px;height:13px;background:#000"></div>
<div class="a" style="left:13.5px;top:406.5px;width:6px;height:6px;background:#535353"></div>
<div class="a" style="left:4px;top:397px;width:12.5px;height:12.5px;background:#fff;border:0.5px solid #ccc"></div>
<svg class="a" style="left:4px;top:397px;" width="12.5" height="12.5" viewBox="0 0 12.5 12.5"><path d="M0.4 12.1L12.1 0.4" stroke="#ee1c1c" stroke-width="1.2"/></svg>
<svg class="a" style="left:4.5px;top:419.5px;" width="7" height="7" viewBox="0 0 7 7"><rect x="0.8" y="0.8" width="5.6" height="5.6" fill="#3a3a3a" stroke="#cfcfcf" stroke-width="0.8"/></svg>
<div class="a t" style="left:15.5px;top:417px;font-family:Liberation Serif;font-weight:bold;font-size:8.5px;color:#cfcfcf">T</div>
<div class="a" style="left:4.6px;top:433px;width:17px;height:13px;background:#3d3d3d;border-radius:2px"></div>
<div class="a" style="left:8px;top:435.3px;width:9.5px;height:8.5px;background:#fff;border:0.5px solid #bbb"></div>
<svg class="a" style="left:8px;top:435.3px;" width="9.5" height="8.5" viewBox="0 0 9.5 8.5"><path d="M0.3 8.2L9.2 0.3" stroke="#ee1c1c" stroke-width="1"/></svg>
<div class="a" style="left:19.5px;top:443.5px;width:1.2px;height:1.2px;background:#cfcfcf"></div>
<div class="a" style="left:4.6px;top:451.3px;width:17px;height:13.3px;background:#3d3d3d;border-radius:2px"></div>
<svg class="a" style="left:8.5px;top:453.5px;" width="9.5" height="8.5" viewBox="0 0 9.5 8.5"><rect x="0.6" y="0.6" width="8.2" height="7.3" fill="none" stroke="#bdbdbd" stroke-width="0.9"/><rect x="0.6" y="0.6" width="8.2" height="1.8" fill="#bdbdbd"/></svg>
<div class="a" style="left:19.5px;top:462px;width:1.2px;height:1.2px;background:#cfcfcf"></div>
<div class="a" style="left:27px;top:92.3px;width:627px;height:10px;background:#202020"></div>
<div class="a" style="left:27px;top:92.3px;width:10px;height:10px;background:#222222"></div>
<svg class="a" style="left:27px;top:92.3px;" width="10" height="10" viewBox="0 0 10 10"><path d="M0 6.5h9M3.5 0v9.5" stroke="#5a5a5a" stroke-width="0.6"/></svg>
<div class="a" style="left:27px;top:102.3px;width:10px;height:393.5px;background:#202020"></div>
<svg class="a" style="left:37px;top:92.3px;" width="617" height="10" viewBox="0 0 617 10"><rect x="2.19" y="8.6" width="0.8" height="1.4" fill="#6a6a6a"/><rect x="8.52" y="0" width="0.9" height="10" fill="#6e6e6e"/><rect x="15.05" y="8.6" width="0.8" height="1.4" fill="#6a6a6a"/><rect x="21.48" y="8.6" width="0.8" height="1.4" fill="#6a6a6a"/><rect x="27.91" y="6.5" width="0.8" height="3.5" fill="#6a6a6a"/><rect x="34.34" y="8.6" width="0.8" height="1.4" fill="#6a6a6a"/><rect x="40.77" y="8.6" width="0.8" height="1.4" fill="#6a6a6a"/><rect x="47.10" y="0" width="0.9" height="10" fill="#6e6e6e"/><rect x="53.63" y="8.6" width="0.8" height="1.4" fill="#6a6a6a"/><rect x="60.06" y="8.6" width="0.8" height="1.4" fill="#6a6a6a"/><rect x="66.49" y="6.5" width="0.8" height="3.5" fill="#6a6a6a"/><rect x="72.92" y="8.6" width="0.8" height="1.4" fill="#6a6a6a"/><rect x="79.35" y="8.6" width="0.8" height="1.4" fill="#6a6a6a"/><rect x="85.68" y="0" width="0.9" height="10" fill="#6e6e6e"/><rect x="92.21" y="8.6" width="0.8" height="1.4" fill="#6a6a6a"/><rect x="98.64" y="8.6" width="0.8" height="1.4" fill="#6a6a6a"/><rect x="105.07" y="6.5" width="0.8" height="3.5" fill="#6a6a6a"/><rect x="111.50" y="8.6" width="0.8" height="1.4" fill="#6a6a6a"/><rect x="117.93" y="8.6" width="0.8" height="1.4" fill="#6a6a6a"/><rect x="124.26" y="0" width="0.9" height="10" fill="#6e6e6e"/><rect x="130.79" y="8.6" width="0.8" height="1.4" fill="#6a6a6a"/><rect x="137.22" y="8.6" width="0.8" height="1.4" fill="#6a6a6a"/><rect x="143.65" y="6.5" width="0.8" height="3.5" fill="#6a6a6a"/><rect x="150.08" y="8.6" width="0.8" height="1.4" fill="#6a6a6a"/><rect x="156.51" y="8.6" width="0.8" height="1.4" fill="#6a6a6a"/><rect x="162.84" y="0" width="0.9" height="10" fill="#6e6e6e"/><rect x="169.37" y="8.6" width="0.8" height="1.4" fill="#6a6a6a"/><rect x="175.80" y="8.6" width="0.8" height="1.4" fill="#6a6a6a"/><rect x="182.23" y="6.5" width="0.8" height="3.5" fill="#6a6a6a"/><rect x="188.66" y="8.6" width="0.8" height="1.4" fill="#6a6a6a"/><rect x="195.09" y="8.6" width="0.8" height="1.4" fill="#6a6a6a"/><rect x="201.42" y="0" width="0.9" height="10" fill="#6e6e6e"/><rect x="207.95" y="8.6" width="0.8" height="1.4" fill="#6a6a6a"/><rect x="214.38" y="8.6" width="0.8" height="1.4" fill="#6a6a6a"/><rect x="220.81" y="6.5" width="0.8" height="3.5" fill="#6a6a6a"/><rect x="227.24" y="8.6" width="0.8" height="1.4" fill="#6a6a6a"/><rect x="233.67" y="8.6" width="0.8" height="1.4" fill="#6a6a6a"/><rect x="240.00" y="0" width="0.9" height="10" fill="#6e6e6e"/><rect x="246.53" y="8.6" width="0.8" height="1.4" fill="#6a6a6a"/><rect x="252.96" y="8.6" width="0.8" height="1.4" fill="#6a6a6a"/><rect x="259.39" y="6.5" width="0.8" height="3.5" fill="#6a6a6a"/><rect x="265.82" y="8.6" width="0.8" height="1.4" fill="#6a6a6a"/><rect x="272.25" y="8.6" width="0.8" height="1.4" fill="#6a6a6a"/><rect x="278.58" y="0" width="0.9" height="10" fill="#6e6e6e"/><rect x="285.11" y="8.6" width="0.8" height="1.4" fill="#6a6a6a"/><rect x="291.54" y="8.6" width="0.8" height="1.4" fill="#6a6a6a"/><rect x="297.97" y="6.5" width="0.8" height="3.5" fill="#6a6a6a"/><rect x="304.40" y="8.6" width="0.8" height="1.4" fill="#6a6a6a"/><rect x="310.83" y="8.6" width="0.8" height="1.4" fill="#6a6a6a"/><rect x="317.16" y="0" width="0.9" height="10" fill="#6e6e6e"/><rect x="323.69" y="8.6" width="0.8" height="1.4" fill="#6a6a6a"/><rect x="330.12" y="8.6" width="0.8" height="1.4" fill="#6a6a6a"/><rect x="336.55" y="6.5" width="0.8" height="3.5" fill="#6a6a6a"/><rect x="342.98" y="8.6" width="0.8" height="1.4" fill="#6a6a6a"/><rect x="349.41" y="8.6" width="0.8" height="1.4" fill="#6a6a6a"/><rect x="355.74" y="0" width="0.9" height="10" fill="#6e6e6e"/><rect x="362.27" y="8.6" width="0.8" height="1.4" fill="#6a6a6a"/><rect x="368.70" y="8.6" width="0.8" height="1.4" fill="#6a6a6a"/><rect x="375.13" y="6.5" width="0.8" height="3.5" fill="#6a6a6a"/><rect x="381.56" y="8.6" width="0.8" height="1.4" fill="#6a6a6a"/><rect x="387.99" y="8.6" width="0.8" height="1.4" fill="#6a6a6a"/><rect x="394.32" y="0" width="0.9" height="10" fill="#6e6e6e"/><rect x="400.85" y="8.6" width="0.8" height="1.4" fill="#6a6a6a"/><rect x="407.28" y="8.6" width="0.8" height="1.4" fill="#6a6a6a"/><rect x="413.71" y="6.5" width="0.8" height="3.5" fill="#6a6a6a"/><rect x="420.14" y="8.6" width="0.8" height="1.4" fill="#6a6a6a"/><rect x="426.57" y="8.6" width="0.8" height="1.4" fill="#6a6a6a"/><rect x="432.90" y="0" width="0.9" height="10" fill="#6e6e6e"/><rect x="439.43" y="8.6" width="0.8" height="1.4" fill="#6a6a6a"/><rect x="445.86" y="8.6" width="0.8" height="1.4" fill="#6a6a6a"/><rect x="452.29" y="6.5" width="0.8" height="3.5" fill="#6a6a6a"/><rect x="458.72" y="8.6" width="0.8" height="1.4" fill="#6a6a6a"/><rect x="465.15" y="8.6" width="0.8" height="1.4" fill="#6a6a6a"/><rect x="471.48" y="0" width="0.9" height="10" fill="#6e6e6e"/><rect x="478.01" y="8.6" width="0.8" height="1.4" fill="#6a6a6a"/><rect x="484.44" y="8.6" width="0.8" height="1.4" fill="#6a6a6a"/><rect x="490.87" y="6.5" width="0.8" height="3.5" fill="#6a6a6a"/><rect x="497.30" y="8.6" width="0.8" height="1.4" fill="#6a6a6a"/><rect x="503.73" y="8.6" width="0.8" height="1.4" fill="#6a6a6a"/><rect x="510.06" y="0" width="0.9" height="10" fill="#6e6e6e"/><rect x="516.59" y="8.6" width="0.8" height="1.4" fill="#6a6a6a"/><rect x="523.02" y="8.6" width="0.8" height="1.4" fill="#6a6a6a"/><rect x="529.45" y="6.5" width="0.8" height="3.5" fill="#6a6a6a"/><rect x="535.88" y="8.6" width="0.8" height="1.4" fill="#6a6a6a"/><rect x="542.31" y="8.6" width="0.8" height="1.4" fill="#6a6a6a"/><rect x="548.64" y="0" width="0.9" height="10" fill="#6e6e6e"/><rect x="555.17" y="8.6" width="0.8" height="1.4" fill="#6a6a6a"/><rect x="561.60" y="8.6" width="0.8" height="1.4" fill="#6a6a6a"/><rect x="568.03" y="6.5" width="0.8" height="3.5" fill="#6a6a6a"/><rect x="574.46" y="8.6" width="0.8" height="1.4" fill="#6a6a6a"/><rect x="580.89" y="8.6" width="0.8" height="1.4" fill="#6a6a6a"/><rect x="587.22" y="0" width="0.9" height="10" fill="#6e6e6e"/><rect x="593.75" y="8.6" width="0.8" height="1.4" fill="#6a6a6a"/><rect x="600.18" y="8.6" width="0.8" height="1.4" fill="#6a6a6a"/><rect x="606.61" y="6.5" width="0.8" height="3.5" fill="#6a6a6a"/><rect x="613.04" y="8.6" width="0.8" height="1.4" fill="#6a6a6a"/></svg>
<div class="a t" style="left:47.62px;top:90.6px;font-size:6.4px;color:#e2e2e2">6</div>
<div class="a t" style="left:86.19999999999999px;top:90.6px;font-size:6.4px;color:#e2e2e2">0</div>
<div class="a t" style="left:124.77999999999999px;top:90.6px;font-size:6.4px;color:#e2e2e2">6</div>
<div class="a t" style="left:163.35999999999999px;top:90.6px;font-size:6.4px;color:#e2e2e2">12</div>
<div class="a t" style="left:201.93999999999997px;top:90.6px;font-size:6.4px;color:#e2e2e2">18</div>
<div class="a t" style="left:240.51999999999995px;top:90.6px;font-size:6.4px;color:#e2e2e2">24</div>
<div class="a t" style="left:279.1px;top:90.6px;font-size:6.4px;color:#e2e2e2">30</div>
<div class="a t" style="left:317.68px;top:90.6px;font-size:6.4px;color:#e2e2e2">36</div>
<div class="a t" style="left:356.26px;top:90.6px;font-size:6.4px;color:#e2e2e2">42</div>
<div class="a t" style="left:394.84px;top:90.6px;font-size:6.4px;color:#e2e2e2">48</div>
<div class="a t" style="left:433.41999999999996px;top:90.6px;font-size:6.4px;color:#e2e2e2">54</div>
<div class="a t" style="left:472.0px;top:90.6px;font-size:6.4px;color:#e2e2e2">60</div>
<div class="a t" style="left:510.58px;top:90.6px;font-size:6.4px;color:#e2e2e2">66</div>
<div class="a t" style="left:549.16px;top:90.6px;font-size:6.4px;color:#e2e2e2">72</div>
<div class="a t" style="left:587.74px;top:90.6px;font-size:6.4px;color:#e2e2e2">78</div>
<div class="a t" style="left:626.3199999999999px;top:90.6px;font-size:6.4px;color:#e2e2e2">84</div>
<svg class="a" style="left:27px;top:102.3px;" width="10" height="390" viewBox="0 0 10 390"><rect x="7.8" y="0.39" width="2.2" height="0.8" fill="#6a6a6a"/><rect x="0" y="3.50" width="10" height="0.9" fill="#6e6e6e"/><rect x="7.8" y="6.81" width="2.2" height="0.8" fill="#6a6a6a"/><rect x="6.4" y="10.03" width="3.6" height="0.8" fill="#6a6a6a"/><rect x="7.8" y="13.24" width="2.2" height="0.8" fill="#6a6a6a"/><rect x="6.4" y="16.46" width="3.6" height="0.8" fill="#6a6a6a"/><rect x="7.8" y="19.67" width="2.2" height="0.8" fill="#6a6a6a"/><rect x="6.4" y="22.88" width="3.6" height="0.8" fill="#6a6a6a"/><rect x="7.8" y="26.10" width="2.2" height="0.8" fill="#6a6a6a"/><rect x="6.4" y="29.31" width="3.6" height="0.8" fill="#6a6a6a"/><rect x="7.8" y="32.53" width="2.2" height="0.8" fill="#6a6a6a"/><rect x="0" y="35.64" width="10" height="0.9" fill="#6e6e6e"/><rect x="7.8" y="38.95" width="2.2" height="0.8" fill="#6a6a6a"/><rect x="6.4" y="42.17" width="3.6" height="0.8" fill="#6a6a6a"/><rect x="7.8" y="45.38" width="2.2" height="0.8" fill="#6a6a6a"/><rect x="6.4" y="48.60" width="3.6" height="0.8" fill="#6a6a6a"/><rect x="7.8" y="51.81" width="2.2" height="0.8" fill="#6a6a6a"/><rect x="6.4" y="55.02" width="3.6" height="0.8" fill="#6a6a6a"/><rect x="7.8" y="58.24" width="2.2" height="0.8" fill="#6a6a6a"/><rect x="6.4" y="61.45" width="3.6" height="0.8" fill="#6a6a6a"/><rect x="7.8" y="64.67" width="2.2" height="0.8" fill="#6a6a6a"/><rect x="0" y="67.78" width="10" height="0.9" fill="#6e6e6e"/><rect x="7.8" y="71.09" width="2.2" height="0.8" fill="#6a6a6a"/><rect x="6.4" y="74.31" width="3.6" height="0.8" fill="#6a6a6a"/><rect x="7.8" y="77.52" width="2.2" height="0.8" fill="#6a6a6a"/><rect x="6.4" y="80.74" width="3.6" height="0.8" fill="#6a6a6a"/><rect x="7.8" y="83.95" width="2.2" height="0.8" fill="#6a6a6a"/><rect x="6.4" y="87.16" width="3.6" height="0.8" fill="#6a6a6a"/><rect x="7.8" y="90.38" width="2.2" height="0.8" fill="#6a6a6a"/><rect x="6.4" y="93.59" width="3.6" height="0.8" fill="#6a6a6a"/><rect x="7.8" y="96.81" width="2.2" height="0.8" fill="#6a6a6a"/><rect x="0" y="99.92" width="10" height="0.9" fill="#6e6e6e"/><rect x="7.8" y="103.23" width="2.2" height="0.8" fill="#6a6a6a"/><rect x="6.4" y="106.45" width="3.6" height="0.8" fill="#6a6a6a"/><rect x="7.8" y="109.66" width="2.2" height="0.8" fill="#6a6a6a"/><rect x="6.4" y="112.88" width="3.6" height="0.8" fill="#6a6a6a"/><rect x="7.8" y="116.09" width="2.2" height="0.8" fill="#6a6a6a"/><rect x="6.4" y="119.30" width="3.6" height="0.8" fill="#6a6a6a"/><rect x="7.8" y="122.52" width="2.2" height="0.8" fill="#6a6a6a"/><rect x="6.4" y="125.73" width="3.6" height="0.8" fill="#6a6a6a"/><rect x="7.8" y="128.95" width="2.2" height="0.8" fill="#6a6a6a"/><rect x="0" y="132.06" width="10" height="0.9" fill="#6e6e6e"/><rect x="7.8" y="135.37" width="2.2" height="0.8" fill="#6a6a6a"/><rect x="6.4" y="138.59" width="3.6" height="0.8" fill="#6a6a6a"/><rect x="7.8" y="141.80" width="2.2" height="0.8" fill="#6a6a6a"/><rect x="6.4" y="145.02" width="3.6" height="0.8" fill="#6a6a6a"/><rect x="7.8" y="148.23" width="2.2" height="0.8" fill="#6a6a6a"/><rect x="6.4" y="151.44" width="3.6" height="0.8" fill="#6a6a6a"/><rect x="7.8" y="154.66" width="2.2" height="0.8" fill="#6a6a6a"/><rect x="6.4" y="157.87" width="3.6" height="0.8" fill="#6a6a6a"/><rect x="7.8" y="161.09" width="2.2" height="0.8" fill="#6a6a6a"/><rect x="0" y="164.20" width="10" height="0.9" fill="#6e6e6e"/><rect x="7.8" y="167.51" width="2.2" height="0.8" fill="#6a6a6a"/><rect x="6.4" y="170.73" width="3.6" height="0.8" fill="#6a6a6a"/><rect x="7.8" y="173.94" width="2.2" height="0.8" fill="#6a6a6a"/><rect x="6.4" y="177.16" width="3.6" height="0.8" fill="#6a6a6a"/><rect x="7.8" y="180.37" width="2.2" height="0.8" fill="#6a6a6a"/><rect x="6.4" y="183.58" width="3.6" height="0.8" fill="#6a6a6a"/><rect x="7.8" y="186.80" width="2.2" height="0.8" fill="#6a6a6a"/><rect x="6.4" y="190.01" width="3.6" height="0.8" fill="#6a6a6a"/><rect x="7.8" y="193.23" width="2.2" height="0.8" fill="#6a6a6a"/><rect x="0" y="196.34" width="10" height="0.9" fill="#6e6e6e"/><rect x="7.8" y="199.65" width="2.2" height="0.8" fill="#6a6a6a"/><rect x="6.4" y="202.87" width="3.6" height="0.8" fill="#6a6a6a"/><rect x="7.8" y="206.08" width="2.2" height="0.8" fill="#6a6a6a"/><rect x="6.4" y="209.30" width="3.6" height="0.8" fill="#6a6a6a"/><rect x="7.8" y="212.51" width="2.2" height="0.8" fill="#6a6a6a"/><rect x="6.4" y="215.72" width="3.6" height="0.8" fill="#6a6a6a"/><rect x="7.8" y="218.94" width="2.2" height="0.8" fill="#6a6a6a"/><rect x="6.4" y="222.15" width="3.6" height="0.8" fill="#6a6a6a"/><rect x="7.8" y="225.37" width="2.2" height="0.8" fill="#6a6a6a"/><rect x="0" y="228.48" width="10" height="0.9" fill="#6e6e6e"/><rect x="7.8" y="231.79" width="2.2" height="0.8" fill="#6a6a6a"/><rect x="6.4" y="235.01" width="3.6" height="0.8" fill="#6a6a6a"/><rect x="7.8" y="238.22" width="2.2" height="0.8" fill="#6a6a6a"/><rect x="6.4" y="241.44" width="3.6" height="0.8" fill="#6a6a6a"/><rect x="7.8" y="244.65" width="2.2" height="0.8" fill="#6a6a6a"/><rect x="6.4" y="247.86" width="3.6" height="0.8" fill="#6a6a6a"/><rect x="7.8" y="251.08" width="2.2" height="0.8" fill="#6a6a6a"/><rect x="6.4" y="254.29" width="3.6" height="0.8" fill="#6a6a6a"/><rect x="7.8" y="257.51" width="2.2" height="0.8" fill="#6a6a6a"/><rect x="0" y="260.62" width="10" height="0.9" fill="#6e6e6e"/><rect x="7.8" y="263.93" width="2.2" height="0.8" fill="#6a6a6a"/><rect x="6.4" y="267.15" width="3.6" height="0.8" fill="#6a6a6a"/><rect x="7.8" y="270.36" width="2.2" height="0.8" fill="#6a6a6a"/><rect x="6.4" y="273.58" width="3.6" height="0.8" fill="#6a6a6a"/><rect x="7.8" y="276.79" width="2.2" height="0.8" fill="#6a6a6a"/><rect x="6.4" y="280.00" width="3.6" height="0.8" fill="#6a6a6a"/><rect x="7.8" y="283.22" width="2.2" height="0.8" fill="#6a6a6a"/><rect x="6.4" y="286.43" width="3.6" height="0.8" fill="#6a6a6a"/><rect x="7.8" y="289.65" width="2.2" height="0.8" fill="#6a6a6a"/><rect x="0" y="292.76" width="10" height="0.9" fill="#6e6e6e"/><rect x="7.8" y="296.07" width="2.2" height="0.8" fill="#6a6a6a"/><rect x="6.4" y="299.29" width="3.6" height="0.8" fill="#6a6a6a"/><rect x="7.8" y="302.50" width="2.2" height="0.8" fill="#6a6a6a"/><rect x="6.4" y="305.72" width="3.6" height="0.8" fill="#6a6a6a"/><rect x="7.8" y="308.93" width="2.2" height="0.8" fill="#6a6a6a"/><rect x="6.4" y="312.14" width="3.6" height="0.8" fill="#6a6a6a"/><rect x="7.8" y="315.36" width="2.2" height="0.8" fill="#6a6a6a"/><rect x="6.4" y="318.57" width="3.6" height="0.8" fill="#6a6a6a"/><rect x="7.8" y="321.79" width="2.2" height="0.8" fill="#6a6a6a"/><rect x="0" y="324.90" width="10" height="0.9" fill="#6e6e6e"/><rect x="7.8" y="328.21" width="2.2" height="0.8" fill="#6a6a6a"/><rect x="6.4" y="331.43" width="3.6" height="0.8" fill="#6a6a6a"/><rect x="7.8" y="334.64" width="2.2" height="0.8" fill="#6a6a6a"/><rect x="6.4" y="337.86" width="3.6" height="0.8" fill="#6a6a6a"/><rect x="7.8" y="341.07" width="2.2" height="0.8" fill="#6a6a6a"/><rect x="6.4" y="344.28" width="3.6" height="0.8" fill="#6a6a6a"/><rect x="7.8" y="347.50" width="2.2" height="0.8" fill="#6a6a6a"/><rect x="6.4" y="350.71" width="3.6" height="0.8" fill="#6a6a6a"/><rect x="7.8" y="353.93" width="2.2" height="0.8" fill="#6a6a6a"/><rect x="0" y="357.04" width="10" height="0.9" fill="#6e6e6e"/><rect x="7.8" y="360.35" width="2.2" height="0.8" fill="#6a6a6a"/><rect x="6.4" y="363.57" width="3.6" height="0.8" fill="#6a6a6a"/><rect x="7.8" y="366.78" width="2.2" height="0.8" fill="#6a6a6a"/><rect x="6.4" y="370.00" width="3.6" height="0.8" fill="#6a6a6a"/><rect x="7.8" y="373.21" width="2.2" height="0.8" fill="#6a6a6a"/><rect x="6.4" y="376.42" width="3.6" height="0.8" fill="#6a6a6a"/><rect x="7.8" y="379.64" width="2.2" height="0.8" fill="#6a6a6a"/><rect x="6.4" y="382.85" width="3.6" height="0.8" fill="#6a6a6a"/><rect x="7.8" y="386.07" width="2.2" height="0.8" fill="#6a6a6a"/><rect x="0" y="389.18" width="10" height="0.9" fill="#6e6e6e"/></svg>
<div class="a t" style="left:28.2px;top:108.70px;font-size:7.4px;line-height:6px;color:#dcdcdc">0</div>
<div class="a t" style="left:28.2px;top:140.84px;font-size:7.4px;line-height:6px;color:#dcdcdc">5</div>
<div class="a t" style="left:28.2px;top:172.98px;font-size:7.4px;line-height:6px;color:#dcdcdc">1</div>
<div class="a t" style="left:28.2px;top:178.88px;font-size:7.4px;line-height:6px;color:#dcdcdc">0</div>
<div class="a t" style="left:28.2px;top:205.12px;font-size:7.4px;line-height:6px;color:#dcdcdc">1</div>
<div class="a t" style="left:28.2px;top:211.02px;font-size:7.4px;line-height:6px;color:#dcdcdc">5</div>
<div class="a t" style="left:28.2px;top:237.26px;font-size:7.4px;line-height:6px;color:#dcdcdc">2</div>
<div class="a t" style="left:28.2px;top:243.16px;font-size:7.4px;line-height:6px;color:#dcdcdc">0</div>
<div class="a t" style="left:28.2px;top:269.40px;font-size:7.4px;line-height:6px;color:#dcdcdc">2</div>
<div class="a t" style="left:28.2px;top:275.30px;font-size:7.4px;line-height:6px;color:#dcdcdc">5</div>
<div class="a t" style="left:28.2px;top:301.54px;font-size:7.4px;line-height:6px;color:#dcdcdc">3</div>
<div class="a t" style="left:28.2px;top:307.44px;font-size:7.4px;line-height:6px;color:#dcdcdc">0</div>
<div class="a t" style="left:28.2px;top:333.68px;font-size:7.4px;line-height:6px;color:#dcdcdc">3</div>
<div class="a t" style="left:28.2px;top:339.58px;font-size:7.4px;line-height:6px;color:#dcdcdc">5</div>
<div class="a t" style="left:28.2px;top:365.82px;font-size:7.4px;line-height:6px;color:#dcdcdc">4</div>
<div class="a t" style="left:28.2px;top:371.72px;font-size:7.4px;line-height:6px;color:#dcdcdc">0</div>
<div class="a t" style="left:28.2px;top:397.96px;font-size:7.4px;line-height:6px;color:#dcdcdc">4</div>
<div class="a t" style="left:28.2px;top:403.86px;font-size:7.4px;line-height:6px;color:#dcdcdc">5</div>
<div class="a t" style="left:28.2px;top:430.10px;font-size:7.4px;line-height:6px;color:#dcdcdc">5</div>
<div class="a t" style="left:28.2px;top:436.00px;font-size:7.4px;line-height:6px;color:#dcdcdc">0</div>
<div class="a t" style="left:28.2px;top:462.24px;font-size:7.4px;line-height:6px;color:#dcdcdc">5</div>
<div class="a t" style="left:28.2px;top:468.14px;font-size:7.4px;line-height:6px;color:#dcdcdc">5</div>
<div class="a t" style="left:28.2px;top:494.38px;font-size:7.4px;line-height:6px;color:#dcdcdc">6</div>
<div class="a t" style="left:28.2px;top:500.28px;font-size:7.4px;line-height:6px;color:#dcdcdc">0</div>
<div class="a" style="left:27px;top:492.3px;width:10px;height:3.5px;background:#2e2e2e"></div>
<div class="a" style="left:37px;top:102.3px;width:617px;height:393.5px;background:#bababa"></div>
<div class="a" style="left:84.3px;top:106.3px;width:521px;height:386px;background:#8a8a8a"></div>
<div class="a" style="left:85px;top:107px;width:260px;height:385px;background:#fff"></div>
<div class="a" style="left:346px;top:107px;width:259px;height:385px;background:#fff"></div>
<div class="a" style="left:345px;top:107px;width:1px;height:385px;background:#8f8f8f"></div>
<svg class="a" style="left:85px;top:107px;filter:blur(3.2px)" width="260" height="385" viewBox="0 0 260 385"><rect x="28.8" y="18.8" width="4.5" height="2.6" fill="#9a9a9a"/><rect x="35.7" y="18.8" width="10.9" height="2.6" fill="#9a9a9a"/><rect x="48.5" y="18.8" width="9.7" height="2.6" fill="#9a9a9a"/><rect x="59.1" y="18.8" width="2.8" height="2.6" fill="#9a9a9a"/><rect x="63.3" y="18.8" width="11.5" height="2.6" fill="#9a9a9a"/><rect x="76.8" y="18.8" width="6.4" height="2.6" fill="#9a9a9a"/><rect x="85.6" y="18.8" width="8.3" height="2.6" fill="#9a9a9a"/><rect x="95.5" y="18.8" width="13.1" height="2.6" fill="#9a9a9a"/><rect x="111.4" y="18.8" width="5.4" height="2.6" fill="#9a9a9a"/><rect x="119.1" y="18.8" width="9.4" height="2.6" fill="#9a9a9a"/><rect x="131.7" y="18.8" width="12.2" height="2.6" fill="#9a9a9a"/><rect x="28.8" y="35.5" width="15.7" height="2.6" fill="#a4a4a4"/><rect x="45.6" y="35.5" width="7.9" height="2.6" fill="#a4a4a4"/><rect x="56.4" y="35.5" width="4.1" height="2.6" fill="#a4a4a4"/><rect x="62.6" y="35.5" width="2.5" height="2.6" fill="#a4a4a4"/><rect x="67.8" y="35.5" width="12.7" height="2.6" fill="#a4a4a4"/><rect x="82.8" y="35.5" width="14.3" height="2.6" fill="#a4a4a4"/><rect x="98.8" y="35.5" width="11.7" height="2.6" fill="#a4a4a4"/><rect x="112.9" y="35.5" width="10.1" height="2.6" fill="#a4a4a4"/><rect x="125.1" y="35.5" width="13.8" height="2.6" fill="#a4a4a4"/><rect x="142.2" y="35.5" width="8.6" height="2.6" fill="#a4a4a4"/><rect x="153.4" y="35.5" width="2.8" height="2.6" fill="#a4a4a4"/><rect x="159.0" y="35.5" width="11.1" height="2.6" fill="#a4a4a4"/><rect x="173.6" y="35.5" width="13.5" height="2.6" fill="#a4a4a4"/><rect x="188.6" y="35.5" width="7.4" height="2.6" fill="#a4a4a4"/><rect x="198.7" y="35.5" width="2.3" height="2.6" fill="#a4a4a4"/><rect x="203.0" y="35.5" width="4.4" height="2.6" fill="#a4a4a4"/><rect x="208.5" y="35.5" width="2.8" height="2.6" fill="#a4a4a4"/><rect x="28.8" y="40.8" width="3.8" height="2.6" fill="#a4a4a4"/><rect x="34.1" y="40.8" width="7.5" height="2.6" fill="#a4a4a4"/><rect x="44.7" y="40.8" width="3.1" height="2.6" fill="#a4a4a4"/><rect x="49.9" y="40.8" width="9.7" height="2.6" fill="#a4a4a4"/><rect x="62.8" y="40.8" width="13.5" height="2.6" fill="#a4a4a4"/><rect x="79.4" y="40.8" width="5.9" height="2.6" fill="#a4a4a4"/><rect x="87.2" y="40.8" width="7.0" height="2.6" fill="#a4a4a4"/><rect x="97.4" y="40.8" width="15.4" height="2.6" fill="#a4a4a4"/><rect x="114.1" y="40.8" width="4.5" height="2.6" fill="#a4a4a4"/><rect x="120.0" y="40.8" width="5.3" height="2.6" fill="#a4a4a4"/><rect x="127.4" y="40.8" width="10.2" height="2.6" fill="#a4a4a4"/><rect x="139.1" y="40.8" width="2.1" height="2.6" fill="#a4a4a4"/><rect x="143.1" y="40.8" width="7.2" height="2.6" fill="#a4a4a4"/><rect x="152.6" y="40.8" width="15.3" height="2.6" fill="#a4a4a4"/><rect x="170.6" y="40.8" width="9.2" height="2.6" fill="#a4a4a4"/><rect x="182.3" y="40.8" width="11.5" height="2.6" fill="#a4a4a4"/><rect x="194.8" y="40.8" width="14.6" height="2.6" fill="#a4a4a4"/><rect x="212.3" y="40.8" width="2.5" height="2.6" fill="#a4a4a4"/><rect x="28.8" y="46.1" width="7.5" height="2.6" fill="#a4a4a4"/><rect x="38.2" y="46.1" width="3.4" height="2.6" fill="#a4a4a4"/><rect x="44.2" y="46.1" width="2.9" height="2.6" fill="#a4a4a4"/><rect x="48.0" y="46.1" width="4.9" height="2.6" fill="#a4a4a4"/><rect x="54.2" y="46.1" width="6.8" height="2.6" fill="#a4a4a4"/><rect x="61.9" y="46.1" width="2.0" height="2.6" fill="#a4a4a4"/><rect x="65.1" y="46.1" width="3.4" height="2.6" fill="#a4a4a4"/><rect x="70.3" y="46.1" width="2.4" height="2.6" fill="#a4a4a4"/><rect x="75.8" y="46.1" width="10.6" height="2.6" fill="#a4a4a4"/><rect x="87.6" y="46.1" width="5.5" height="2.6" fill="#a4a4a4"/><rect x="94.9" y="46.1" width="7.1" height="2.6" fill="#a4a4a4"/><rect x="103.1" y="46.1" width="13.9" height="2.6" fill="#a4a4a4"/><rect x="120.5" y="46.1" width="8.5" height="2.6" fill="#a4a4a4"/><rect x="131.2" y="46.1" width="3.2" height="2.6" fill="#a4a4a4"/><rect x="135.5" y="46.1" width="6.8" height="2.6" fill="#a4a4a4"/><rect x="143.8" y="46.1" width="13.6" height="2.6" fill="#a4a4a4"/><rect x="158.6" y="46.1" width="2.3" height="2.6" fill="#a4a4a4"/><rect x="164.3" y="46.1" width="9.4" height="2.6" fill="#a4a4a4"/><rect x="174.9" y="46.1" width="9.6" height="2.6" fill="#a4a4a4"/><rect x="185.4" y="46.1" width="9.4" height="2.6" fill="#a4a4a4"/><rect x="198.2" y="46.1" width="14.1" height="2.6" fill="#a4a4a4"/><rect x="28.8" y="51.4" width="5.7" height="2.6" fill="#a4a4a4"/><rect x="36.3" y="51.4" width="4.3" height="2.6" fill="#a4a4a4"/><rect x="43.5" y="51.4" width="9.5" height="2.6" fill="#a4a4a4"/><rect x="55.9" y="51.4" width="6.6" height="2.6" fill="#a4a4a4"/><rect x="63.9" y="51.4" width="13.4" height="2.6" fill="#a4a4a4"/><rect x="80.7" y="51.4" width="13.9" height="2.6" fill="#a4a4a4"/><rect x="97.7" y="51.4" width="13.5" height="2.6" fill="#a4a4a4"/><rect x="113.9" y="51.4" width="5.2" height="2.6" fill="#a4a4a4"/><rect x="121.3" y="51.4" width="7.0" height="2.6" fill="#a4a4a4"/><rect x="129.2" y="51.4" width="2.4" height="2.6" fill="#a4a4a4"/><rect x="133.1" y="51.4" width="5.6" height="2.6" fill="#a4a4a4"/><rect x="141.4" y="51.4" width="15.4" height="2.6" fill="#a4a4a4"/><rect x="158.8" y="51.4" width="15.1" height="2.6" fill="#a4a4a4"/><rect x="177.4" y="51.4" width="15.4" height="2.6" fill="#a4a4a4"/><rect x="194.6" y="51.4" width="5.1" height="2.6" fill="#a4a4a4"/><rect x="201.1" y="51.4" width="4.8" height="2.6" fill="#a4a4a4"/><rect x="207.2" y="51.4" width="7.6" height="2.6" fill="#a4a4a4"/><rect x="28.8" y="56.7" width="13.8" height="2.6" fill="#a4a4a4"/><rect x="44.7" y="56.7" width="11.1" height="2.6" fill="#a4a4a4"/><rect x="58.8" y="56.7" width="3.2" height="2.6" fill="#a4a4a4"/><rect x="64.6" y="56.7" width="14.7" height="2.6" fill="#a4a4a4"/><rect x="82.2" y="56.7" width="12.5" height="2.6" fill="#a4a4a4"/><rect x="96.8" y="56.7" width="4.5" height="2.6" fill="#a4a4a4"/><rect x="104.3" y="56.7" width="6.7" height="2.6" fill="#a4a4a4"/><rect x="113.9" y="56.7" width="15.6" height="2.6" fill="#a4a4a4"/><rect x="131.4" y="56.7" width="7.6" height="2.6" fill="#a4a4a4"/><rect x="142.4" y="56.7" width="12.1" height="2.6" fill="#a4a4a4"/><rect x="155.8" y="56.7" width="3.8" height="2.6" fill="#a4a4a4"/><rect x="160.8" y="56.7" width="14.7" height="2.6" fill="#a4a4a4"/><rect x="178.5" y="56.7" width="4.0" height="2.6" fill="#a4a4a4"/><rect x="185.5" y="56.7" width="15.7" height="2.6" fill="#a4a4a4"/><rect x="203.9" y="56.7" width="6.9" height="2.6" fill="#a4a4a4"/><rect x="213.1" y="56.7" width="1.7" height="2.6" fill="#a4a4a4"/><rect x="28.8" y="62.0" width="15.6" height="2.6" fill="#a4a4a4"/><rect x="47.0" y="62.0" width="9.4" height="2.6" fill="#a4a4a4"/><rect x="59.7" y="62.0" width="8.1" height="2.6" fill="#a4a4a4"/><rect x="70.9" y="62.0" width="13.6" height="2.6" fill="#a4a4a4"/><rect x="85.9" y="62.0" width="4.3" height="2.6" fill="#a4a4a4"/><rect x="34.8" y="67.0" width="5.4" height="2.6" fill="#a4a4a4"/><rect x="42.6" y="67.0" width="5.6" height="2.6" fill="#a4a4a4"/><rect x="50.1" y="67.0" width="3.8" height="2.6" fill="#a4a4a4"/><rect x="57.2" y="67.0" width="7.0" height="2.6" fill="#a4a4a4"/><rect x="66.2" y="67.0" width="10.2" height="2.6" fill="#a4a4a4"/><rect x="79.7" y="67.0" width="7.9" height="2.6" fill="#a4a4a4"/><rect x="90.9" y="67.0" width="9.0" height="2.6" fill="#a4a4a4"/><rect x="102.1" y="67.0" width="9.3" height="2.6" fill="#a4a4a4"/><rect x="112.3" y="67.0" width="8.2" height="2.6" fill="#a4a4a4"/><rect x="121.8" y="67.0" width="2.1" height="2.6" fill="#a4a4a4"/><rect x="126.8" y="67.0" width="4.4" height="2.6" fill="#a4a4a4"/><rect x="133.3" y="67.0" width="12.2" height="2.6" fill="#a4a4a4"/><rect x="147.8" y="67.0" width="6.6" height="2.6" fill="#a4a4a4"/><rect x="156.5" y="67.0" width="9.8" height="2.6" fill="#a4a4a4"/><rect x="169.2" y="67.0" width="3.5" height="2.6" fill="#a4a4a4"/><rect x="175.1" y="67.0" width="5.5" height="2.6" fill="#a4a4a4"/><rect x="182.1" y="67.0" width="12.8" height="2.6" fill="#a4a4a4"/><rect x="197.1" y="67.0" width="9.9" height="2.6" fill="#a4a4a4"/><rect x="209.8" y="67.0" width="5.0" height="2.6" fill="#a4a4a4"/><rect x="28.8" y="72.3" width="10.6" height="2.6" fill="#a4a4a4"/><rect x="41.6" y="72.3" width="9.2" height="2.6" fill="#a4a4a4"/><rect x="53.4" y="72.3" width="8.3" height="2.6" fill="#a4a4a4"/><rect x="64.0" y="72.3" width="8.7" height="2.6" fill="#a4a4a4"/><rect x="76.0" y="72.3" width="11.8" height="2.6" fill="#a4a4a4"/><rect x="91.0" y="72.3" width="15.2" height="2.6" fill="#a4a4a4"/><rect x="107.7" y="72.3" width="9.8" height="2.6" fill="#a4a4a4"/><rect x="120.9" y="72.3" width="13.8" height="2.6" fill="#a4a4a4"/><rect x="135.8" y="72.3" width="3.7" height="2.6" fill="#a4a4a4"/><rect x="141.5" y="72.3" width="3.0" height="2.6" fill="#a4a4a4"/><rect x="146.0" y="72.3" width="3.0" height="2.6" fill="#a4a4a4"/><rect x="151.7" y="72.3" width="13.0" height="2.6" fill="#a4a4a4"/><rect x="167.9" y="72.3" width="4.2" height="2.6" fill="#a4a4a4"/><rect x="174.8" y="72.3" width="11.2" height="2.6" fill="#a4a4a4"/><rect x="187.2" y="72.3" width="14.4" height="2.6" fill="#a4a4a4"/><rect x="205.0" y="72.3" width="5.1" height="2.6" fill="#a4a4a4"/><rect x="213.5" y="72.3" width="1.3" height="2.6" fill="#a4a4a4"/><rect x="28.8" y="77.6" width="15.9" height="2.6" fill="#a4a4a4"/><rect x="47.7" y="77.6" width="4.3" height="2.6" fill="#a4a4a4"/><rect x="54.0" y="77.6" width="9.2" height="2.6" fill="#a4a4a4"/><rect x="64.9" y="77.6" width="4.7" height="2.6" fill="#a4a4a4"/><rect x="71.3" y="77.6" width="12.1" height="2.6" fill="#a4a4a4"/><rect x="84.3" y="77.6" width="9.8" height="2.6" fill="#a4a4a4"/><rect x="96.0" y="77.6" width="2.3" height="2.6" fill="#a4a4a4"/><rect x="100.0" y="77.6" width="10.7" height="2.6" fill="#a4a4a4"/><rect x="112.9" y="77.6" width="2.9" height="2.6" fill="#a4a4a4"/><rect x="119.3" y="77.6" width="13.0" height="2.6" fill="#a4a4a4"/><rect x="135.8" y="77.6" width="3.5" height="2.6" fill="#a4a4a4"/><rect x="140.8" y="77.6" width="2.6" height="2.6" fill="#a4a4a4"/><rect x="146.2" y="77.6" width="5.8" height="2.6" fill="#a4a4a4"/><rect x="153.2" y="77.6" width="7.9" height="2.6" fill="#a4a4a4"/><rect x="164.4" y="77.6" width="13.5" height="2.6" fill="#a4a4a4"/><rect x="179.3" y="77.6" width="4.1" height="2.6" fill="#a4a4a4"/><rect x="186.7" y="77.6" width="10.0" height="2.6" fill="#a4a4a4"/><rect x="199.4" y="77.6" width="3.3" height="2.6" fill="#a4a4a4"/><rect x="203.6" y="77.6" width="11.2" height="2.6" fill="#a4a4a4"/><rect x="28.8" y="82.9" width="3.0" height="2.6" fill="#a4a4a4"/><rect x="35.2" y="82.9" width="10.9" height="2.6" fill="#a4a4a4"/><rect x="49.0" y="82.9" width="3.2" height="2.6" fill="#a4a4a4"/><rect x="55.3" y="82.9" width="2.9" height="2.6" fill="#a4a4a4"/><rect x="61.4" y="82.9" width="8.4" height="2.6" fill="#a4a4a4"/><rect x="71.5" y="82.9" width="9.7" height="2.6" fill="#a4a4a4"/><rect x="84.5" y="82.9" width="5.8" height="2.6" fill="#a4a4a4"/><rect x="91.4" y="82.9" width="9.4" height="2.6" fill="#a4a4a4"/><rect x="102.3" y="82.9" width="3.5" height="2.6" fill="#a4a4a4"/><rect x="107.0" y="82.9" width="2.7" height="2.6" fill="#a4a4a4"/><rect x="111.1" y="82.9" width="6.4" height="2.6" fill="#a4a4a4"/><rect x="119.1" y="82.9" width="12.6" height="2.6" fill="#a4a4a4"/><rect x="133.3" y="82.9" width="9.0" height="2.6" fill="#a4a4a4"/><rect x="143.6" y="82.9" width="6.9" height="2.6" fill="#a4a4a4"/><rect x="151.3" y="82.9" width="5.5" height="2.6" fill="#a4a4a4"/><rect x="157.7" y="82.9" width="12.3" height="2.6" fill="#a4a4a4"/><rect x="172.2" y="82.9" width="4.7" height="2.6" fill="#a4a4a4"/><rect x="179.0" y="82.9" width="15.1" height="2.6" fill="#a4a4a4"/><rect x="195.1" y="82.9" width="13.5" height="2.6" fill="#a4a4a4"/><rect x="210.6" y="82.9" width="4.2" height="2.6" fill="#a4a4a4"/><rect x="28.8" y="88.2" width="7.5" height="2.6" fill="#a4a4a4"/><rect x="38.5" y="88.2" width="11.6" height="2.6" fill="#a4a4a4"/><rect x="53.6" y="88.2" width="6.8" height="2.6" fill="#a4a4a4"/><rect x="63.4" y="88.2" width="11.9" height="2.6" fill="#a4a4a4"/><rect x="77.9" y="88.2" width="7.7" height="2.6" fill="#a4a4a4"/><rect x="87.3" y="88.2" width="2.8" height="2.6" fill="#a4a4a4"/><rect x="91.2" y="88.2" width="3.0" height="2.6" fill="#a4a4a4"/><rect x="97.0" y="88.2" width="5.6" height="2.6" fill="#a4a4a4"/><rect x="103.8" y="88.2" width="3.2" height="2.6" fill="#a4a4a4"/><rect x="110.1" y="88.2" width="14.2" height="2.6" fill="#a4a4a4"/><rect x="126.9" y="88.2" width="5.9" height="2.6" fill="#a4a4a4"/><rect x="134.3" y="88.2" width="6.1" height="2.6" fill="#a4a4a4"/><rect x="142.5" y="88.2" width="4.2" height="2.6" fill="#a4a4a4"/><rect x="148.7" y="88.2" width="5.7" height="2.6" fill="#a4a4a4"/><rect x="157.8" y="88.2" width="15.6" height="2.6" fill="#a4a4a4"/><rect x="175.7" y="88.2" width="5.4" height="2.6" fill="#a4a4a4"/><rect x="184.5" y="88.2" width="6.3" height="2.6" fill="#a4a4a4"/><rect x="192.6" y="88.2" width="2.0" height="2.6" fill="#a4a4a4"/><rect x="196.5" y="88.2" width="8.6" height="2.6" fill="#a4a4a4"/><rect x="207.3" y="88.2" width="4.8" height="2.6" fill="#a4a4a4"/><rect x="28.8" y="93.5" width="2.1" height="2.6" fill="#a4a4a4"/><rect x="32.4" y="93.5" width="3.3" height="2.6" fill="#a4a4a4"/><rect x="37.5" y="93.5" width="2.6" height="2.6" fill="#a4a4a4"/><rect x="41.0" y="93.5" width="6.3" height="2.6" fill="#a4a4a4"/><rect x="48.7" y="93.5" width="10.2" height="2.6" fill="#a4a4a4"/><rect x="61.1" y="93.5" width="12.5" height="2.6" fill="#a4a4a4"/><rect x="76.2" y="93.5" width="12.0" height="2.6" fill="#a4a4a4"/><rect x="91.4" y="93.5" width="7.5" height="2.6" fill="#a4a4a4"/><rect x="100.6" y="93.5" width="15.8" height="2.6" fill="#a4a4a4"/><rect x="117.5" y="93.5" width="12.1" height="2.6" fill="#a4a4a4"/><rect x="132.2" y="93.5" width="2.6" height="2.6" fill="#a4a4a4"/><rect x="137.9" y="93.5" width="14.5" height="2.6" fill="#a4a4a4"/><rect x="154.9" y="93.5" width="12.3" height="2.6" fill="#a4a4a4"/><rect x="170.2" y="93.5" width="4.0" height="2.6" fill="#a4a4a4"/><rect x="176.4" y="93.5" width="9.1" height="2.6" fill="#a4a4a4"/><rect x="188.5" y="93.5" width="13.3" height="2.6" fill="#a4a4a4"/><rect x="204.8" y="93.5" width="10.0" height="2.6" fill="#a4a4a4"/><rect x="28.8" y="98.8" width="11.6" height="2.6" fill="#a4a4a4"/><rect x="43.0" y="98.8" width="5.2" height="2.6" fill="#a4a4a4"/><rect x="49.2" y="98.8" width="3.9" height="2.6" fill="#a4a4a4"/><rect x="54.8" y="98.8" width="3.5" height="2.6" fill="#a4a4a4"/><rect x="61.3" y="98.8" width="9.8" height="2.6" fill="#a4a4a4"/><rect x="73.7" y="98.8" width="10.8" height="2.6" fill="#a4a4a4"/><rect x="87.1" y="98.8" width="8.9" height="2.6" fill="#a4a4a4"/><rect x="96.7" y="98.8" width="13.2" height="2.6" fill="#a4a4a4"/><rect x="112.7" y="98.8" width="9.0" height="2.6" fill="#a4a4a4"/><rect x="124.0" y="98.8" width="11.2" height="2.6" fill="#a4a4a4"/><rect x="136.3" y="98.8" width="12.3" height="2.6" fill="#a4a4a4"/><rect x="150.1" y="98.8" width="3.0" height="2.6" fill="#a4a4a4"/><rect x="154.6" y="98.8" width="12.2" height="2.6" fill="#a4a4a4"/><rect x="168.2" y="98.8" width="12.4" height="2.6" fill="#a4a4a4"/><rect x="184.0" y="98.8" width="8.9" height="2.6" fill="#a4a4a4"/><rect x="194.8" y="98.8" width="8.7" height="2.6" fill="#a4a4a4"/><rect x="206.1" y="98.8" width="8.7" height="2.6" fill="#a4a4a4"/><rect x="28.8" y="104.1" width="11.0" height="2.6" fill="#a4a4a4"/><rect x="40.8" y="104.1" width="4.1" height="2.6" fill="#a4a4a4"/><rect x="46.4" y="104.1" width="8.5" height="2.6" fill="#a4a4a4"/><rect x="34.8" y="110.5" width="9.9" height="2.6" fill="#a4a4a4"/><rect x="45.6" y="110.5" width="2.8" height="2.6" fill="#a4a4a4"/><rect x="50.0" y="110.5" width="11.4" height="2.6" fill="#a4a4a4"/><rect x="64.1" y="110.5" width="11.5" height="2.6" fill="#a4a4a4"/><rect x="77.1" y="110.5" width="9.2" height="2.6" fill="#a4a4a4"/><rect x="88.4" y="110.5" width="8.5" height="2.6" fill="#a4a4a4"/><rect x="98.1" y="110.5" width="14.5" height="2.6" fill="#a4a4a4"/><rect x="113.9" y="110.5" width="15.7" height="2.6" fill="#a4a4a4"/><rect x="132.9" y="110.5" width="2.2" height="2.6" fill="#a4a4a4"/><rect x="137.2" y="110.5" width="13.5" height="2.6" fill="#a4a4a4"/><rect x="154.2" y="110.5" width="8.3" height="2.6" fill="#a4a4a4"/><rect x="164.0" y="110.5" width="4.9" height="2.6" fill="#a4a4a4"/><rect x="172.3" y="110.5" width="4.9" height="2.6" fill="#a4a4a4"/><rect x="179.6" y="110.5" width="4.0" height="2.6" fill="#a4a4a4"/><rect x="185.8" y="110.5" width="15.3" height="2.6" fill="#a4a4a4"/><rect x="202.3" y="110.5" width="12.5" height="2.6" fill="#a4a4a4"/><rect x="28.8" y="115.8" width="14.4" height="2.6" fill="#a4a4a4"/><rect x="45.9" y="115.8" width="5.2" height="2.6" fill="#a4a4a4"/><rect x="54.4" y="115.8" width="8.8" height="2.6" fill="#a4a4a4"/><rect x="64.1" y="115.8" width="2.1" height="2.6" fill="#a4a4a4"/><rect x="68.3" y="115.8" width="8.3" height="2.6" fill="#a4a4a4"/><rect x="78.2" y="115.8" width="4.0" height="2.6" fill="#a4a4a4"/><rect x="83.9" y="115.8" width="6.4" height="2.6" fill="#a4a4a4"/><rect x="93.4" y="115.8" width="2.0" height="2.6" fill="#a4a4a4"/><rect x="98.3" y="115.8" width="13.7" height="2.6" fill="#a4a4a4"/><rect x="113.2" y="115.8" width="15.0" height="2.6" fill="#a4a4a4"/><rect x="130.9" y="115.8" width="14.6" height="2.6" fill="#a4a4a4"/><rect x="147.1" y="115.8" width="7.2" height="2.6" fill="#a4a4a4"/><rect x="156.2" y="115.8" width="16.0" height="2.6" fill="#a4a4a4"/><rect x="174.5" y="115.8" width="7.0" height="2.6" fill="#a4a4a4"/><rect x="183.6" y="115.8" width="5.9" height="2.6" fill="#a4a4a4"/><rect x="190.3" y="115.8" width="3.4" height="2.6" fill="#a4a4a4"/><rect x="196.8" y="115.8" width="6.0" height="2.6" fill="#a4a4a4"/><rect x="206.2" y="115.8" width="5.5" height="2.6" fill="#a4a4a4"/><rect x="213.2" y="115.8" width="1.6" height="2.6" fill="#a4a4a4"/><rect x="28.8" y="121.2" width="7.2" height="2.6" fill="#a4a4a4"/><rect x="39.4" y="121.2" width="14.4" height="2.6" fill="#a4a4a4"/><rect x="56.8" y="121.2" width="10.8" height="2.6" fill="#a4a4a4"/><rect x="70.9" y="121.2" width="15.2" height="2.6" fill="#a4a4a4"/><rect x="88.4" y="121.2" width="12.1" height="2.6" fill="#a4a4a4"/><rect x="101.4" y="121.2" width="12.3" height="2.6" fill="#a4a4a4"/><rect x="115.7" y="121.2" width="12.5" height="2.6" fill="#a4a4a4"/><rect x="130.8" y="121.2" width="6.0" height="2.6" fill="#a4a4a4"/><rect x="137.7" y="121.2" width="15.0" height="2.6" fill="#a4a4a4"/><rect x="153.8" y="121.2" width="8.6" height="2.6" fill="#a4a4a4"/><rect x="164.2" y="121.2" width="6.2" height="2.6" fill="#a4a4a4"/><rect x="173.2" y="121.2" width="15.7" height="2.6" fill="#a4a4a4"/><rect x="190.3" y="121.2" width="11.2" height="2.6" fill="#a4a4a4"/><rect x="203.1" y="121.2" width="9.8" height="2.6" fill="#a4a4a4"/><rect x="28.8" y="126.5" width="4.3" height="2.6" fill="#a4a4a4"/><rect x="34.4" y="126.5" width="4.9" height="2.6" fill="#a4a4a4"/><rect x="42.6" y="126.5" width="9.0" height="2.6" fill="#a4a4a4"/><rect x="52.9" y="126.5" width="14.7" height="2.6" fill="#a4a4a4"/><rect x="71.1" y="126.5" width="8.3" height="2.6" fill="#a4a4a4"/><rect x="80.6" y="126.5" width="4.7" height="2.6" fill="#a4a4a4"/><rect x="86.3" y="126.5" width="6.8" height="2.6" fill="#a4a4a4"/><rect x="94.2" y="126.5" width="5.3" height="2.6" fill="#a4a4a4"/><rect x="101.0" y="126.5" width="10.0" height="2.6" fill="#a4a4a4"/><rect x="114.2" y="126.5" width="12.5" height="2.6" fill="#a4a4a4"/><rect x="128.6" y="126.5" width="7.8" height="2.6" fill="#a4a4a4"/><rect x="138.6" y="126.5" width="7.3" height="2.6" fill="#a4a4a4"/><rect x="147.6" y="126.5" width="2.9" height="2.6" fill="#a4a4a4"/><rect x="152.1" y="126.5" width="15.5" height="2.6" fill="#a4a4a4"/><rect x="168.8" y="126.5" width="9.0" height="2.6" fill="#a4a4a4"/><rect x="180.3" y="126.5" width="14.1" height="2.6" fill="#a4a4a4"/><rect x="195.8" y="126.5" width="5.8" height="2.6" fill="#a4a4a4"/><rect x="203.1" y="126.5" width="7.6" height="2.6" fill="#a4a4a4"/><rect x="212.7" y="126.5" width="2.1" height="2.6" fill="#a4a4a4"/><rect x="28.8" y="131.9" width="14.2" height="2.6" fill="#a4a4a4"/><rect x="43.9" y="131.9" width="2.5" height="2.6" fill="#a4a4a4"/><rect x="49.1" y="131.9" width="14.5" height="2.6" fill="#a4a4a4"/><rect x="65.7" y="131.9" width="10.2" height="2.6" fill="#a4a4a4"/><rect x="76.7" y="131.9" width="7.5" height="2.6" fill="#a4a4a4"/><rect x="87.5" y="131.9" width="13.6" height="2.6" fill="#a4a4a4"/><rect x="104.2" y="131.9" width="15.6" height="2.6" fill="#a4a4a4"/><rect x="121.3" y="131.9" width="3.5" height="2.6" fill="#a4a4a4"/><rect x="126.0" y="131.9" width="9.3" height="2.6" fill="#a4a4a4"/><rect x="138.0" y="131.9" width="15.2" height="2.6" fill="#a4a4a4"/><rect x="155.9" y="131.9" width="11.1" height="2.6" fill="#a4a4a4"/><rect x="169.9" y="131.9" width="8.4" height="2.6" fill="#a4a4a4"/><rect x="180.6" y="131.9" width="2.6" height="2.6" fill="#a4a4a4"/><rect x="186.1" y="131.9" width="5.3" height="2.6" fill="#a4a4a4"/><rect x="194.6" y="131.9" width="11.0" height="2.6" fill="#a4a4a4"/><rect x="207.3" y="131.9" width="3.8" height="2.6" fill="#a4a4a4"/><rect x="212.6" y="131.9" width="2.2" height="2.6" fill="#a4a4a4"/><rect x="28.8" y="137.2" width="3.6" height="2.6" fill="#a4a4a4"/><rect x="33.4" y="137.2" width="9.3" height="2.6" fill="#a4a4a4"/><rect x="45.1" y="137.2" width="7.4" height="2.6" fill="#a4a4a4"/><rect x="53.9" y="137.2" width="10.4" height="2.6" fill="#a4a4a4"/><rect x="65.2" y="137.2" width="6.2" height="2.6" fill="#a4a4a4"/><rect x="73.4" y="137.2" width="15.4" height="2.6" fill="#a4a4a4"/><rect x="91.4" y="137.2" width="14.4" height="2.6" fill="#a4a4a4"/><rect x="107.9" y="137.2" width="5.3" height="2.6" fill="#a4a4a4"/><rect x="114.7" y="137.2" width="15.4" height="2.6" fill="#a4a4a4"/><rect x="132.8" y="137.2" width="6.3" height="2.6" fill="#a4a4a4"/><rect x="140.0" y="137.2" width="9.0" height="2.6" fill="#a4a4a4"/><rect x="151.6" y="137.2" width="7.9" height="2.6" fill="#a4a4a4"/><rect x="161.0" y="137.2" width="11.3" height="2.6" fill="#a4a4a4"/><rect x="175.6" y="137.2" width="5.2" height="2.6" fill="#a4a4a4"/><rect x="181.7" y="137.2" width="6.7" height="2.6" fill="#a4a4a4"/><rect x="190.4" y="137.2" width="11.6" height="2.6" fill="#a4a4a4"/><rect x="203.3" y="137.2" width="11.5" height="2.6" fill="#a4a4a4"/><rect x="28.8" y="142.6" width="9.1" height="2.6" fill="#a4a4a4"/><rect x="39.2" y="142.6" width="15.6" height="2.6" fill="#a4a4a4"/><rect x="56.5" y="142.6" width="13.5" height="2.6" fill="#a4a4a4"/><rect x="71.4" y="142.6" width="5.1" height="2.6" fill="#a4a4a4"/><rect x="79.3" y="142.6" width="6.1" height="2.6" fill="#a4a4a4"/><rect x="88.8" y="142.6" width="8.9" height="2.6" fill="#a4a4a4"/><rect x="99.1" y="142.6" width="5.1" height="2.6" fill="#a4a4a4"/><rect x="106.2" y="142.6" width="11.3" height="2.6" fill="#a4a4a4"/><rect x="120.9" y="142.6" width="4.0" height="2.6" fill="#a4a4a4"/><rect x="126.8" y="142.6" width="5.0" height="2.6" fill="#a4a4a4"/><rect x="135.2" y="142.6" width="4.0" height="2.6" fill="#a4a4a4"/><rect x="140.1" y="142.6" width="2.8" height="2.6" fill="#a4a4a4"/><rect x="144.8" y="142.6" width="14.6" height="2.6" fill="#a4a4a4"/><rect x="162.6" y="142.6" width="12.3" height="2.6" fill="#a4a4a4"/><rect x="178.4" y="142.6" width="15.0" height="2.6" fill="#a4a4a4"/><rect x="195.1" y="142.6" width="4.6" height="2.6" fill="#a4a4a4"/><rect x="203.1" y="142.6" width="11.7" height="2.6" fill="#a4a4a4"/><rect x="28.8" y="147.9" width="11.3" height="2.6" fill="#a4a4a4"/><rect x="41.9" y="147.9" width="7.2" height="2.6" fill="#a4a4a4"/><rect x="50.9" y="147.9" width="4.4" height="2.6" fill="#a4a4a4"/><rect x="56.0" y="147.9" width="5.9" height="2.6" fill="#a4a4a4"/><rect x="63.7" y="147.9" width="15.4" height="2.6" fill="#a4a4a4"/><rect x="80.2" y="147.9" width="15.5" height="2.6" fill="#a4a4a4"/><rect x="97.1" y="147.9" width="7.0" height="2.6" fill="#a4a4a4"/><rect x="107.1" y="147.9" width="13.5" height="2.6" fill="#a4a4a4"/><rect x="122.6" y="147.9" width="2.7" height="2.6" fill="#a4a4a4"/><rect x="127.4" y="147.9" width="7.2" height="2.6" fill="#a4a4a4"/><rect x="137.9" y="147.9" width="4.7" height="2.6" fill="#a4a4a4"/><rect x="144.4" y="147.9" width="14.6" height="2.6" fill="#a4a4a4"/><rect x="159.8" y="147.9" width="7.8" height="2.6" fill="#a4a4a4"/><rect x="170.6" y="147.9" width="12.7" height="2.6" fill="#a4a4a4"/><rect x="184.2" y="147.9" width="2.5" height="2.6" fill="#a4a4a4"/><rect x="187.7" y="147.9" width="14.9" height="2.6" fill="#a4a4a4"/><rect x="204.1" y="147.9" width="10.7" height="2.6" fill="#a4a4a4"/><rect x="28.8" y="153.3" width="6.7" height="2.6" fill="#a4a4a4"/><rect x="37.1" y="153.3" width="15.4" height="2.6" fill="#a4a4a4"/><rect x="55.0" y="153.3" width="5.7" height="2.6" fill="#a4a4a4"/><rect x="63.4" y="153.3" width="6.4" height="2.6" fill="#a4a4a4"/><rect x="71.4" y="153.3" width="2.1" height="2.6" fill="#a4a4a4"/><rect x="76.3" y="153.3" width="14.8" height="2.6" fill="#a4a4a4"/><rect x="93.6" y="153.3" width="15.2" height="2.6" fill="#a4a4a4"/><rect x="109.7" y="153.3" width="5.3" height="2.6" fill="#a4a4a4"/><rect x="117.1" y="153.3" width="15.4" height="2.6" fill="#a4a4a4"/><rect x="135.9" y="153.3" width="7.4" height="2.6" fill="#a4a4a4"/><rect x="144.8" y="153.3" width="8.0" height="2.6" fill="#a4a4a4"/><rect x="154.9" y="153.3" width="15.0" height="2.6" fill="#a4a4a4"/><rect x="171.2" y="153.3" width="13.2" height="2.6" fill="#a4a4a4"/><rect x="187.3" y="153.3" width="13.5" height="2.6" fill="#a4a4a4"/><rect x="203.7" y="153.3" width="10.5" height="2.6" fill="#a4a4a4"/><rect x="28.8" y="158.7" width="6.5" height="2.6" fill="#a4a4a4"/><rect x="37.1" y="158.7" width="13.0" height="2.6" fill="#a4a4a4"/><rect x="51.0" y="158.7" width="4.8" height="2.6" fill="#a4a4a4"/><rect x="58.6" y="158.7" width="5.5" height="2.6" fill="#a4a4a4"/><rect x="65.1" y="158.7" width="2.5" height="2.6" fill="#a4a4a4"/><rect x="69.9" y="158.7" width="6.6" height="2.6" fill="#a4a4a4"/><rect x="79.9" y="158.7" width="14.4" height="2.6" fill="#a4a4a4"/><rect x="97.7" y="158.7" width="5.7" height="2.6" fill="#a4a4a4"/><rect x="104.5" y="158.7" width="3.3" height="2.6" fill="#a4a4a4"/><rect x="110.0" y="158.7" width="11.9" height="2.6" fill="#a4a4a4"/><rect x="123.9" y="158.7" width="5.3" height="2.6" fill="#a4a4a4"/><rect x="131.1" y="158.7" width="10.7" height="2.6" fill="#a4a4a4"/><rect x="144.5" y="158.7" width="12.5" height="2.6" fill="#a4a4a4"/><rect x="160.0" y="158.7" width="11.3" height="2.6" fill="#a4a4a4"/><rect x="172.5" y="158.7" width="13.8" height="2.6" fill="#a4a4a4"/><rect x="187.8" y="158.7" width="9.9" height="2.6" fill="#a4a4a4"/><rect x="199.6" y="158.7" width="12.3" height="2.6" fill="#a4a4a4"/><rect x="213.3" y="158.7" width="1.5" height="2.6" fill="#a4a4a4"/><rect x="28.8" y="164.0" width="4.1" height="2.6" fill="#a4a4a4"/><rect x="36.2" y="164.0" width="10.1" height="2.6" fill="#a4a4a4"/><rect x="47.9" y="164.0" width="7.5" height="2.6" fill="#a4a4a4"/><rect x="59.0" y="164.0" width="9.1" height="2.6" fill="#a4a4a4"/><rect x="69.5" y="164.0" width="13.3" height="2.6" fill="#a4a4a4"/><rect x="85.4" y="164.0" width="15.9" height="2.6" fill="#a4a4a4"/><rect x="102.4" y="164.0" width="8.6" height="2.6" fill="#a4a4a4"/><rect x="114.0" y="164.0" width="11.5" height="2.6" fill="#a4a4a4"/><rect x="40.6" y="181.5" width="2.6" height="2.8" fill="#505050"/><rect x="44.8" y="181.5" width="3.7" height="2.8" fill="#505050"/><rect x="49.7" y="181.5" width="15.6" height="2.8" fill="#505050"/><rect x="67.8" y="181.5" width="15.0" height="2.8" fill="#505050"/><rect x="84.6" y="181.5" width="7.0" height="2.8" fill="#505050"/><rect x="34.8" y="189.5" width="5.6" height="2.6" fill="#a4a4a4"/><rect x="43.4" y="189.5" width="15.2" height="2.6" fill="#a4a4a4"/><rect x="59.7" y="189.5" width="10.3" height="2.6" fill="#a4a4a4"/><rect x="72.5" y="189.5" width="5.0" height="2.6" fill="#a4a4a4"/><rect x="79.4" y="189.5" width="4.0" height="2.6" fill="#a4a4a4"/><rect x="84.7" y="189.5" width="5.6" height="2.6" fill="#a4a4a4"/><rect x="92.7" y="189.5" width="11.1" height="2.6" fill="#a4a4a4"/><rect x="105.2" y="189.5" width="2.2" height="2.6" fill="#a4a4a4"/><rect x="109.0" y="189.5" width="11.5" height="2.6" fill="#a4a4a4"/><rect x="121.8" y="189.5" width="6.4" height="2.6" fill="#a4a4a4"/><rect x="129.5" y="189.5" width="13.1" height="2.6" fill="#a4a4a4"/><rect x="145.0" y="189.5" width="2.9" height="2.6" fill="#a4a4a4"/><rect x="148.9" y="189.5" width="7.5" height="2.6" fill="#a4a4a4"/><rect x="158.8" y="189.5" width="10.9" height="2.6" fill="#a4a4a4"/><rect x="170.8" y="189.5" width="4.3" height="2.6" fill="#a4a4a4"/><rect x="177.7" y="189.5" width="7.7" height="2.6" fill="#a4a4a4"/><rect x="187.1" y="189.5" width="6.3" height="2.6" fill="#a4a4a4"/><rect x="196.8" y="189.5" width="6.4" height="2.6" fill="#a4a4a4"/><rect x="205.5" y="189.5" width="7.0" height="2.6" fill="#a4a4a4"/><rect x="28.8" y="194.7" width="14.1" height="2.6" fill="#a4a4a4"/><rect x="46.4" y="194.7" width="7.1" height="2.6" fill="#a4a4a4"/><rect x="54.8" y="194.7" width="12.2" height="2.6" fill="#a4a4a4"/><rect x="68.4" y="194.7" width="2.1" height="2.6" fill="#a4a4a4"/><rect x="73.7" y="194.7" width="7.9" height="2.6" fill="#a4a4a4"/><rect x="84.7" y="194.7" width="7.7" height="2.6" fill="#a4a4a4"/><rect x="95.6" y="194.7" width="8.5" height="2.6" fill="#a4a4a4"/><rect x="105.3" y="194.7" width="2.2" height="2.6" fill="#a4a4a4"/><rect x="109.8" y="194.7" width="11.0" height="2.6" fill="#a4a4a4"/><rect x="124.0" y="194.7" width="3.2" height="2.6" fill="#a4a4a4"/><rect x="129.8" y="194.7" width="7.2" height="2.6" fill="#a4a4a4"/><rect x="139.1" y="194.7" width="4.0" height="2.6" fill="#a4a4a4"/><rect x="144.7" y="194.7" width="9.3" height="2.6" fill="#a4a4a4"/><rect x="157.3" y="194.7" width="3.5" height="2.6" fill="#a4a4a4"/><rect x="163.0" y="194.7" width="13.3" height="2.6" fill="#a4a4a4"/><rect x="179.7" y="194.7" width="4.8" height="2.6" fill="#a4a4a4"/><rect x="185.6" y="194.7" width="15.2" height="2.6" fill="#a4a4a4"/><rect x="204.3" y="194.7" width="8.8" height="2.6" fill="#a4a4a4"/><rect x="28.8" y="199.9" width="15.0" height="2.6" fill="#a4a4a4"/><rect x="45.6" y="199.9" width="14.7" height="2.6" fill="#a4a4a4"/><rect x="62.8" y="199.9" width="13.5" height="2.6" fill="#a4a4a4"/><rect x="77.5" y="199.9" width="13.0" height="2.6" fill="#a4a4a4"/><rect x="92.0" y="199.9" width="7.7" height="2.6" fill="#a4a4a4"/><rect x="102.7" y="199.9" width="13.6" height="2.6" fill="#a4a4a4"/><rect x="117.6" y="199.9" width="5.1" height="2.6" fill="#a4a4a4"/><rect x="124.6" y="199.9" width="9.3" height="2.6" fill="#a4a4a4"/><rect x="135.7" y="199.9" width="3.7" height="2.6" fill="#a4a4a4"/><rect x="140.9" y="199.9" width="12.1" height="2.6" fill="#a4a4a4"/><rect x="156.2" y="199.9" width="2.6" height="2.6" fill="#a4a4a4"/><rect x="161.1" y="199.9" width="12.6" height="2.6" fill="#a4a4a4"/><rect x="174.7" y="199.9" width="13.7" height="2.6" fill="#a4a4a4"/><rect x="189.5" y="199.9" width="10.4" height="2.6" fill="#a4a4a4"/><rect x="202.2" y="199.9" width="10.8" height="2.6" fill="#a4a4a4"/><rect x="28.8" y="205.1" width="7.9" height="2.6" fill="#a4a4a4"/><rect x="39.1" y="205.1" width="8.0" height="2.6" fill="#a4a4a4"/><rect x="49.6" y="205.1" width="8.3" height="2.6" fill="#a4a4a4"/><rect x="59.9" y="205.1" width="2.3" height="2.6" fill="#a4a4a4"/><rect x="64.7" y="205.1" width="8.9" height="2.6" fill="#a4a4a4"/><rect x="75.0" y="205.1" width="12.7" height="2.6" fill="#a4a4a4"/><rect x="90.6" y="205.1" width="8.4" height="2.6" fill="#a4a4a4"/><rect x="100.3" y="205.1" width="8.6" height="2.6" fill="#a4a4a4"/><rect x="110.0" y="205.1" width="3.8" height="2.6" fill="#a4a4a4"/><rect x="115.8" y="205.1" width="3.3" height="2.6" fill="#a4a4a4"/><rect x="121.1" y="205.1" width="9.1" height="2.6" fill="#a4a4a4"/><rect x="131.1" y="205.1" width="10.9" height="2.6" fill="#a4a4a4"/><rect x="143.0" y="205.1" width="12.3" height="2.6" fill="#a4a4a4"/><rect x="158.2" y="205.1" width="9.2" height="2.6" fill="#a4a4a4"/><rect x="168.3" y="205.1" width="9.1" height="2.6" fill="#a4a4a4"/><rect x="179.2" y="205.1" width="15.3" height="2.6" fill="#a4a4a4"/><rect x="195.7" y="205.1" width="14.0" height="2.6" fill="#a4a4a4"/><rect x="213.2" y="205.1" width="1.6" height="2.6" fill="#a4a4a4"/><rect x="28.8" y="210.3" width="4.7" height="2.6" fill="#a4a4a4"/><rect x="37.0" y="210.3" width="8.9" height="2.6" fill="#a4a4a4"/><rect x="49.3" y="210.3" width="14.8" height="2.6" fill="#a4a4a4"/><rect x="65.3" y="210.3" width="13.0" height="2.6" fill="#a4a4a4"/><rect x="81.7" y="210.3" width="2.9" height="2.6" fill="#a4a4a4"/><rect x="86.4" y="210.3" width="12.6" height="2.6" fill="#a4a4a4"/><rect x="100.2" y="210.3" width="14.6" height="2.6" fill="#a4a4a4"/><rect x="116.3" y="210.3" width="13.4" height="2.6" fill="#a4a4a4"/><rect x="130.9" y="210.3" width="9.0" height="2.6" fill="#a4a4a4"/><rect x="143.2" y="210.3" width="4.9" height="2.6" fill="#a4a4a4"/><rect x="149.7" y="210.3" width="9.1" height="2.6" fill="#a4a4a4"/><rect x="160.4" y="210.3" width="2.5" height="2.6" fill="#a4a4a4"/><rect x="164.2" y="210.3" width="4.3" height="2.6" fill="#a4a4a4"/><rect x="171.8" y="210.3" width="11.5" height="2.6" fill="#a4a4a4"/><rect x="186.6" y="210.3" width="4.4" height="2.6" fill="#a4a4a4"/><rect x="193.9" y="210.3" width="3.6" height="2.6" fill="#a4a4a4"/><rect x="199.7" y="210.3" width="10.9" height="2.6" fill="#a4a4a4"/><rect x="212.4" y="210.3" width="2.4" height="2.6" fill="#a4a4a4"/><rect x="28.8" y="215.5" width="10.1" height="2.6" fill="#a4a4a4"/><rect x="42.1" y="215.5" width="3.5" height="2.6" fill="#a4a4a4"/><rect x="49.1" y="215.5" width="10.8" height="2.6" fill="#a4a4a4"/><rect x="61.8" y="215.5" width="13.2" height="2.6" fill="#a4a4a4"/><rect x="76.5" y="215.5" width="15.9" height="2.6" fill="#a4a4a4"/><rect x="94.7" y="215.5" width="7.0" height="2.6" fill="#a4a4a4"/><rect x="104.6" y="215.5" width="8.2" height="2.6" fill="#a4a4a4"/><rect x="114.1" y="215.5" width="12.4" height="2.6" fill="#a4a4a4"/><rect x="127.4" y="215.5" width="13.5" height="2.6" fill="#a4a4a4"/><rect x="142.4" y="215.5" width="10.9" height="2.6" fill="#a4a4a4"/><rect x="156.8" y="215.5" width="10.2" height="2.6" fill="#a4a4a4"/><rect x="169.6" y="215.5" width="6.4" height="2.6" fill="#a4a4a4"/><rect x="176.8" y="215.5" width="2.5" height="2.6" fill="#a4a4a4"/><rect x="180.5" y="215.5" width="10.6" height="2.6" fill="#a4a4a4"/><rect x="193.1" y="215.5" width="9.2" height="2.6" fill="#a4a4a4"/><rect x="205.5" y="215.5" width="3.8" height="2.6" fill="#a4a4a4"/><rect x="210.8" y="215.5" width="4.0" height="2.6" fill="#a4a4a4"/><rect x="28.8" y="220.7" width="2.0" height="2.6" fill="#a4a4a4"/><rect x="32.6" y="220.7" width="3.5" height="2.6" fill="#a4a4a4"/><rect x="37.9" y="220.7" width="5.1" height="2.6" fill="#a4a4a4"/><rect x="45.4" y="220.7" width="10.2" height="2.6" fill="#a4a4a4"/><rect x="57.0" y="220.7" width="10.7" height="2.6" fill="#a4a4a4"/><rect x="69.8" y="220.7" width="3.9" height="2.6" fill="#a4a4a4"/><rect x="77.1" y="220.7" width="5.4" height="2.6" fill="#a4a4a4"/><rect x="83.7" y="220.7" width="3.3" height="2.6" fill="#a4a4a4"/><rect x="89.5" y="220.7" width="14.2" height="2.6" fill="#a4a4a4"/><rect x="106.7" y="220.7" width="7.6" height="2.6" fill="#a4a4a4"/><rect x="115.8" y="220.7" width="2.2" height="2.6" fill="#a4a4a4"/><rect x="120.5" y="220.7" width="9.9" height="2.6" fill="#a4a4a4"/><rect x="132.2" y="220.7" width="11.0" height="2.6" fill="#a4a4a4"/><rect x="145.2" y="220.7" width="15.1" height="2.6" fill="#a4a4a4"/><rect x="163.1" y="220.7" width="5.5" height="2.6" fill="#a4a4a4"/><rect x="171.9" y="220.7" width="2.6" height="2.6" fill="#a4a4a4"/><rect x="176.7" y="220.7" width="7.7" height="2.6" fill="#a4a4a4"/><rect x="185.8" y="220.7" width="2.8" height="2.6" fill="#a4a4a4"/><rect x="191.6" y="220.7" width="2.2" height="2.6" fill="#a4a4a4"/><rect x="196.1" y="220.7" width="15.2" height="2.6" fill="#a4a4a4"/><rect x="212.4" y="220.7" width="2.4" height="2.6" fill="#a4a4a4"/><rect x="37.0" y="252.5" width="8.0" height="2.2" fill="#9a9a9a"/><rect x="37.0" y="257.9" width="8.0" height="2.2" fill="#9a9a9a"/><rect x="37.0" y="263.3" width="6.3" height="2.2" fill="#9a9a9a"/><rect x="37.0" y="268.7" width="2.7" height="2.2" fill="#9a9a9a"/><rect x="42.9" y="268.7" width="2.1" height="2.2" fill="#9a9a9a"/><rect x="37.0" y="274.1" width="2.1" height="2.2" fill="#9a9a9a"/><rect x="42.2" y="274.1" width="2.8" height="2.2" fill="#9a9a9a"/><rect x="37.0" y="279.5" width="8.0" height="2.2" fill="#9a9a9a"/><rect x="37.0" y="284.9" width="5.2" height="2.2" fill="#9a9a9a"/><rect x="43.2" y="284.9" width="5.3" height="2.2" fill="#9a9a9a"/><rect x="34.8" y="294.0" width="6.7" height="2.4" fill="#9a9a9a"/><rect x="44.3" y="294.0" width="11.7" height="2.4" fill="#9a9a9a"/><rect x="59.2" y="294.0" width="12.0" height="2.4" fill="#9a9a9a"/><rect x="72.7" y="294.0" width="9.8" height="2.4" fill="#9a9a9a"/><rect x="84.4" y="294.0" width="13.0" height="2.4" fill="#9a9a9a"/><rect x="99.7" y="294.0" width="5.7" height="2.4" fill="#9a9a9a"/><rect x="107.9" y="294.0" width="15.5" height="2.4" fill="#9a9a9a"/><rect x="124.8" y="294.0" width="14.3" height="2.4" fill="#9a9a9a"/><rect x="140.0" y="294.0" width="5.6" height="2.4" fill="#9a9a9a"/><rect x="147.1" y="294.0" width="12.4" height="2.4" fill="#9a9a9a"/><rect x="162.9" y="294.0" width="12.4" height="2.4" fill="#9a9a9a"/><rect x="177.0" y="294.0" width="14.3" height="2.4" fill="#9a9a9a"/><rect x="193.0" y="294.0" width="5.3" height="2.4" fill="#9a9a9a"/><rect x="201.6" y="294.0" width="10.8" height="2.4" fill="#9a9a9a"/><rect x="28.8" y="300.4" width="11.3" height="2.4" fill="#9a9a9a"/><rect x="43.6" y="300.4" width="8.6" height="2.4" fill="#9a9a9a"/><rect x="55.2" y="300.4" width="11.8" height="2.4" fill="#9a9a9a"/><rect x="70.1" y="300.4" width="8.1" height="2.4" fill="#9a9a9a"/><rect x="81.0" y="300.4" width="10.0" height="2.4" fill="#9a9a9a"/><rect x="92.6" y="300.4" width="5.0" height="2.4" fill="#9a9a9a"/><rect x="100.1" y="300.4" width="3.1" height="2.4" fill="#9a9a9a"/><rect x="106.5" y="300.4" width="4.0" height="2.4" fill="#9a9a9a"/><rect x="111.4" y="300.4" width="3.5" height="2.4" fill="#9a9a9a"/><rect x="118.2" y="300.4" width="6.8" height="2.4" fill="#9a9a9a"/><rect x="126.2" y="300.4" width="2.4" height="2.4" fill="#9a9a9a"/><rect x="129.5" y="300.4" width="11.7" height="2.4" fill="#9a9a9a"/><rect x="143.7" y="300.4" width="11.8" height="2.4" fill="#9a9a9a"/><rect x="158.3" y="300.4" width="2.9" height="2.4" fill="#9a9a9a"/><rect x="163.6" y="300.4" width="7.1" height="2.4" fill="#9a9a9a"/><rect x="173.7" y="300.4" width="13.5" height="2.4" fill="#9a9a9a"/><rect x="190.4" y="300.4" width="2.9" height="2.4" fill="#9a9a9a"/><rect x="196.5" y="300.4" width="14.8" height="2.4" fill="#9a9a9a"/><rect x="28.8" y="306.8" width="3.5" height="2.4" fill="#9a9a9a"/><rect x="33.7" y="306.8" width="3.6" height="2.4" fill="#9a9a9a"/><rect x="38.1" y="306.8" width="13.9" height="2.4" fill="#9a9a9a"/><rect x="55.0" y="306.8" width="10.9" height="2.4" fill="#9a9a9a"/><rect x="68.9" y="306.8" width="10.8" height="2.4" fill="#9a9a9a"/><rect x="81.3" y="306.8" width="3.4" height="2.4" fill="#9a9a9a"/><rect x="85.8" y="306.8" width="12.6" height="2.4" fill="#9a9a9a"/><rect x="99.8" y="306.8" width="6.5" height="2.4" fill="#9a9a9a"/><rect x="108.2" y="306.8" width="2.3" height="2.4" fill="#9a9a9a"/><rect x="112.0" y="306.8" width="6.0" height="2.4" fill="#9a9a9a"/><rect x="120.7" y="306.8" width="7.2" height="2.4" fill="#9a9a9a"/><rect x="129.5" y="306.8" width="15.5" height="2.4" fill="#9a9a9a"/><rect x="147.2" y="306.8" width="13.9" height="2.4" fill="#9a9a9a"/><rect x="163.6" y="306.8" width="1.0" height="2.4" fill="#9a9a9a"/><rect x="28.8" y="317.5" width="8.1" height="2.4" fill="#9a9a9a"/><rect x="39.8" y="317.5" width="6.9" height="2.4" fill="#9a9a9a"/><rect x="49.4" y="317.5" width="9.5" height="2.4" fill="#9a9a9a"/><rect x="60.3" y="317.5" width="14.1" height="2.4" fill="#9a9a9a"/><rect x="75.4" y="317.5" width="13.5" height="2.4" fill="#9a9a9a"/><rect x="90.2" y="317.5" width="2.0" height="2.4" fill="#9a9a9a"/><rect x="93.5" y="317.5" width="12.3" height="2.4" fill="#9a9a9a"/><rect x="28.8" y="323.0" width="2.1" height="2.4" fill="#9a9a9a"/><rect x="33.0" y="323.0" width="8.9" height="2.4" fill="#9a9a9a"/><rect x="44.8" y="323.0" width="4.6" height="2.4" fill="#9a9a9a"/><rect x="51.6" y="323.0" width="6.9" height="2.4" fill="#9a9a9a"/><rect x="61.5" y="323.0" width="5.6" height="2.4" fill="#9a9a9a"/><rect x="70.5" y="323.0" width="6.0" height="2.4" fill="#9a9a9a"/><rect x="77.9" y="323.0" width="11.8" height="2.4" fill="#9a9a9a"/><rect x="91.8" y="323.0" width="3.5" height="2.4" fill="#9a9a9a"/><rect x="97.9" y="323.0" width="3.1" height="2.4" fill="#9a9a9a"/><rect x="104.0" y="323.0" width="11.8" height="2.4" fill="#9a9a9a"/><rect x="118.7" y="323.0" width="10.8" height="2.4" fill="#9a9a9a"/><rect x="131.2" y="323.0" width="7.6" height="2.4" fill="#9a9a9a"/><rect x="34.8" y="331.0" width="14.5" height="2.4" fill="#9a9a9a"/><rect x="50.3" y="331.0" width="14.4" height="2.4" fill="#9a9a9a"/><rect x="65.6" y="331.0" width="4.9" height="2.4" fill="#9a9a9a"/><rect x="72.0" y="331.0" width="14.6" height="2.4" fill="#9a9a9a"/><rect x="88.8" y="331.0" width="7.3" height="2.4" fill="#9a9a9a"/><rect x="99.3" y="331.0" width="5.3" height="2.4" fill="#9a9a9a"/><rect x="106.6" y="331.0" width="9.4" height="2.4" fill="#9a9a9a"/><rect x="118.9" y="331.0" width="12.5" height="2.4" fill="#9a9a9a"/><rect x="134.0" y="331.0" width="6.9" height="2.4" fill="#9a9a9a"/><rect x="142.6" y="331.0" width="4.2" height="2.4" fill="#9a9a9a"/><rect x="149.9" y="331.0" width="11.3" height="2.4" fill="#9a9a9a"/><rect x="163.9" y="331.0" width="4.4" height="2.4" fill="#9a9a9a"/><rect x="170.3" y="331.0" width="12.8" height="2.4" fill="#9a9a9a"/><rect x="185.5" y="331.0" width="3.8" height="2.4" fill="#9a9a9a"/><rect x="191.3" y="331.0" width="14.4" height="2.4" fill="#9a9a9a"/><rect x="207.2" y="331.0" width="4.7" height="2.4" fill="#9a9a9a"/><rect x="213.5" y="331.0" width="1.3" height="2.4" fill="#9a9a9a"/><rect x="28.8" y="337.6" width="4.2" height="2.4" fill="#9a9a9a"/><rect x="34.2" y="337.6" width="5.5" height="2.4" fill="#9a9a9a"/><rect x="41.3" y="337.6" width="9.3" height="2.4" fill="#9a9a9a"/><rect x="51.9" y="337.6" width="6.6" height="2.4" fill="#9a9a9a"/><rect x="59.8" y="337.6" width="15.7" height="2.4" fill="#9a9a9a"/><rect x="78.2" y="337.6" width="3.4" height="2.4" fill="#9a9a9a"/><rect x="85.1" y="337.6" width="3.4" height="2.4" fill="#9a9a9a"/><rect x="90.3" y="337.6" width="15.8" height="2.4" fill="#9a9a9a"/><rect x="109.1" y="337.6" width="12.3" height="2.4" fill="#9a9a9a"/><rect x="123.3" y="337.6" width="4.7" height="2.4" fill="#9a9a9a"/><rect x="130.6" y="337.6" width="3.5" height="2.4" fill="#9a9a9a"/><rect x="135.5" y="337.6" width="7.4" height="2.4" fill="#9a9a9a"/><rect x="143.8" y="337.6" width="7.6" height="2.4" fill="#9a9a9a"/><rect x="154.3" y="337.6" width="11.7" height="2.4" fill="#9a9a9a"/><rect x="168.2" y="337.6" width="10.9" height="2.4" fill="#9a9a9a"/><rect x="181.1" y="337.6" width="4.0" height="2.4" fill="#9a9a9a"/><rect x="187.5" y="337.6" width="7.7" height="2.4" fill="#9a9a9a"/><rect x="198.0" y="337.6" width="14.7" height="2.4" fill="#9a9a9a"/><rect x="28.8" y="344.2" width="10.0" height="2.4" fill="#9a9a9a"/><rect x="41.7" y="344.2" width="7.9" height="2.4" fill="#9a9a9a"/><rect x="51.0" y="344.2" width="12.1" height="2.4" fill="#9a9a9a"/><rect x="66.3" y="344.2" width="12.7" height="2.4" fill="#9a9a9a"/><rect x="34.8" y="351.5" width="13.9" height="2.4" fill="#9a9a9a"/><rect x="51.4" y="351.5" width="11.0" height="2.4" fill="#9a9a9a"/><rect x="64.4" y="351.5" width="6.4" height="2.4" fill="#9a9a9a"/><rect x="73.3" y="351.5" width="3.4" height="2.4" fill="#9a9a9a"/><rect x="78.6" y="351.5" width="13.0" height="2.4" fill="#9a9a9a"/><rect x="94.3" y="351.5" width="10.8" height="2.4" fill="#9a9a9a"/><rect x="106.6" y="351.5" width="7.9" height="2.4" fill="#9a9a9a"/><rect x="116.6" y="351.5" width="10.7" height="2.4" fill="#9a9a9a"/><rect x="129.2" y="351.5" width="11.5" height="2.4" fill="#9a9a9a"/><rect x="144.0" y="351.5" width="4.6" height="2.4" fill="#9a9a9a"/><rect x="151.1" y="351.5" width="12.9" height="2.4" fill="#9a9a9a"/><rect x="165.9" y="351.5" width="8.9" height="2.4" fill="#9a9a9a"/><rect x="178.2" y="351.5" width="2.5" height="2.4" fill="#9a9a9a"/><rect x="183.0" y="351.5" width="4.3" height="2.4" fill="#9a9a9a"/><rect x="190.2" y="351.5" width="15.2" height="2.4" fill="#9a9a9a"/><rect x="207.5" y="351.5" width="3.4" height="2.4" fill="#9a9a9a"/><rect x="213.3" y="351.5" width="1.5" height="2.4" fill="#9a9a9a"/><rect x="28.8" y="358.3" width="9.2" height="2.4" fill="#9a9a9a"/><rect x="40.5" y="358.3" width="13.6" height="2.4" fill="#9a9a9a"/><rect x="56.3" y="358.3" width="7.7" height="2.4" fill="#9a9a9a"/><rect x="67.5" y="358.3" width="4.9" height="2.4" fill="#9a9a9a"/><rect x="75.1" y="358.3" width="7.5" height="2.4" fill="#9a9a9a"/><rect x="85.4" y="358.3" width="3.7" height="2.4" fill="#9a9a9a"/><rect x="92.6" y="358.3" width="7.0" height="2.4" fill="#9a9a9a"/><rect x="100.6" y="358.3" width="4.5" height="2.4" fill="#9a9a9a"/></svg>
<svg class="a" style="left:346px;top:107px;filter:blur(3.4px)" width="259.5" height="385" viewBox="0 0 259.5 385"><rect x="44.7" y="18.8" width="2.2" height="2.6" fill="#a0a0a0"/><rect x="48.8" y="18.8" width="7.9" height="2.6" fill="#a0a0a0"/><rect x="59.4" y="18.8" width="6.9" height="2.6" fill="#a0a0a0"/><rect x="67.9" y="18.8" width="5.1" height="2.6" fill="#a0a0a0"/><rect x="75.8" y="18.8" width="15.2" height="2.6" fill="#a0a0a0"/><rect x="93.2" y="18.8" width="5.1" height="2.6" fill="#a0a0a0"/><rect x="101.3" y="18.8" width="7.5" height="2.6" fill="#a0a0a0"/><rect x="110.1" y="18.8" width="3.8" height="2.6" fill="#a0a0a0"/><rect x="116.8" y="18.8" width="12.9" height="2.6" fill="#a0a0a0"/><rect x="220.7" y="18.8" width="8.6" height="2.6" fill="#a0a0a0"/><rect x="44.7" y="38.5" width="5.2" height="2.6" fill="#a4a4a4"/><rect x="53.3" y="38.5" width="6.9" height="2.6" fill="#a4a4a4"/><rect x="62.8" y="38.5" width="13.5" height="2.6" fill="#a4a4a4"/><rect x="79.2" y="38.5" width="8.6" height="2.6" fill="#a4a4a4"/><rect x="89.4" y="38.5" width="9.7" height="2.6" fill="#a4a4a4"/><rect x="100.2" y="38.5" width="13.7" height="2.6" fill="#a4a4a4"/><rect x="115.7" y="38.5" width="13.9" height="2.6" fill="#a4a4a4"/><rect x="131.1" y="38.5" width="7.3" height="2.6" fill="#a4a4a4"/><rect x="139.8" y="38.5" width="8.0" height="2.6" fill="#a4a4a4"/><rect x="149.1" y="38.5" width="2.0" height="2.6" fill="#a4a4a4"/><rect x="153.9" y="38.5" width="5.9" height="2.6" fill="#a4a4a4"/><rect x="161.3" y="38.5" width="6.2" height="2.6" fill="#a4a4a4"/><rect x="169.7" y="38.5" width="8.0" height="2.6" fill="#a4a4a4"/><rect x="180.2" y="38.5" width="11.2" height="2.6" fill="#a4a4a4"/><rect x="193.2" y="38.5" width="15.0" height="2.6" fill="#a4a4a4"/><rect x="211.3" y="38.5" width="2.8" height="2.6" fill="#a4a4a4"/><rect x="217.2" y="38.5" width="13.5" height="2.6" fill="#a4a4a4"/><rect x="44.7" y="44.1" width="4.0" height="2.6" fill="#a4a4a4"/><rect x="51.7" y="44.1" width="10.9" height="2.6" fill="#a4a4a4"/><rect x="63.4" y="44.1" width="1.7" height="2.6" fill="#a4a4a4"/><rect x="58.0" y="58.0" width="11.2" height="2.8" fill="#606060"/><rect x="70.7" y="58.0" width="3.4" height="2.8" fill="#606060"/><rect x="75.3" y="58.0" width="5.3" height="2.8" fill="#606060"/><rect x="83.5" y="58.0" width="6.9" height="2.8" fill="#606060"/><rect x="91.5" y="58.0" width="14.7" height="2.8" fill="#606060"/><rect x="109.1" y="58.0" width="4.4" height="2.8" fill="#606060"/><rect x="116.7" y="58.0" width="10.5" height="2.8" fill="#606060"/><rect x="130.1" y="58.0" width="11.4" height="2.8" fill="#606060"/><rect x="144.7" y="58.0" width="6.3" height="2.8" fill="#606060"/><rect x="50.7" y="65.5" width="4.8" height="2.8" fill="#a8a8a8"/><rect x="58.1" y="65.5" width="9.4" height="2.8" fill="#a8a8a8"/><rect x="70.4" y="65.5" width="8.1" height="2.8" fill="#a8a8a8"/><rect x="81.7" y="65.5" width="9.8" height="2.8" fill="#a8a8a8"/><rect x="93.0" y="65.5" width="5.3" height="2.8" fill="#a8a8a8"/><rect x="99.5" y="65.5" width="8.9" height="2.8" fill="#a8a8a8"/><rect x="109.3" y="65.5" width="8.5" height="2.8" fill="#a8a8a8"/><rect x="119.1" y="65.5" width="8.9" height="2.8" fill="#a8a8a8"/><rect x="130.1" y="65.5" width="9.6" height="2.8" fill="#a8a8a8"/><rect x="142.8" y="65.5" width="2.1" height="2.8" fill="#a8a8a8"/><rect x="148.0" y="65.5" width="8.6" height="2.8" fill="#a8a8a8"/><rect x="158.9" y="65.5" width="11.3" height="2.8" fill="#a8a8a8"/><rect x="173.3" y="65.5" width="7.2" height="2.8" fill="#a8a8a8"/><rect x="182.5" y="65.5" width="15.4" height="2.8" fill="#a8a8a8"/><rect x="198.9" y="65.5" width="10.9" height="2.8" fill="#a8a8a8"/><rect x="212.4" y="65.5" width="2.4" height="2.8" fill="#a8a8a8"/><rect x="217.2" y="65.5" width="11.6" height="2.8" fill="#a8a8a8"/><rect x="44.7" y="70.8" width="6.6" height="2.8" fill="#a8a8a8"/><rect x="54.8" y="70.8" width="9.1" height="2.8" fill="#a8a8a8"/><rect x="66.1" y="70.8" width="14.6" height="2.8" fill="#a8a8a8"/><rect x="81.5" y="70.8" width="12.1" height="2.8" fill="#a8a8a8"/><rect x="96.1" y="70.8" width="6.7" height="2.8" fill="#a8a8a8"/><rect x="106.0" y="70.8" width="7.1" height="2.8" fill="#a8a8a8"/><rect x="115.2" y="70.8" width="9.4" height="2.8" fill="#a8a8a8"/><rect x="127.4" y="70.8" width="5.0" height="2.8" fill="#a8a8a8"/><rect x="134.4" y="70.8" width="7.9" height="2.8" fill="#a8a8a8"/><rect x="144.6" y="70.8" width="13.6" height="2.8" fill="#a8a8a8"/><rect x="159.8" y="70.8" width="13.6" height="2.8" fill="#a8a8a8"/><rect x="175.2" y="70.8" width="9.1" height="2.8" fill="#a8a8a8"/><rect x="185.8" y="70.8" width="9.1" height="2.8" fill="#a8a8a8"/><rect x="198.4" y="70.8" width="11.2" height="2.8" fill="#a8a8a8"/><rect x="212.5" y="70.8" width="6.6" height="2.8" fill="#a8a8a8"/><rect x="220.8" y="70.8" width="6.2" height="2.8" fill="#a8a8a8"/><rect x="229.4" y="70.8" width="1.3" height="2.8" fill="#a8a8a8"/><rect x="44.7" y="76.1" width="2.6" height="2.8" fill="#a8a8a8"/><rect x="50.0" y="76.1" width="14.4" height="2.8" fill="#a8a8a8"/><rect x="66.7" y="76.1" width="2.7" height="2.8" fill="#a8a8a8"/><rect x="71.0" y="76.1" width="2.1" height="2.8" fill="#a8a8a8"/><rect x="74.4" y="76.1" width="14.9" height="2.8" fill="#a8a8a8"/><rect x="91.8" y="76.1" width="11.2" height="2.8" fill="#a8a8a8"/><rect x="105.9" y="76.1" width="14.7" height="2.8" fill="#a8a8a8"/><rect x="123.1" y="76.1" width="10.6" height="2.8" fill="#a8a8a8"/><rect x="136.3" y="76.1" width="11.7" height="2.8" fill="#a8a8a8"/><rect x="150.5" y="76.1" width="11.5" height="2.8" fill="#a8a8a8"/><rect x="163.4" y="76.1" width="11.3" height="2.8" fill="#a8a8a8"/><rect x="176.7" y="76.1" width="12.7" height="2.8" fill="#a8a8a8"/><rect x="190.5" y="76.1" width="4.5" height="2.8" fill="#a8a8a8"/><rect x="195.9" y="76.1" width="12.8" height="2.8" fill="#a8a8a8"/><rect x="212.1" y="76.1" width="11.2" height="2.8" fill="#a8a8a8"/><rect x="225.1" y="76.1" width="5.6" height="2.8" fill="#a8a8a8"/><rect x="44.7" y="81.4" width="9.9" height="2.8" fill="#a8a8a8"/><rect x="56.1" y="81.4" width="6.2" height="2.8" fill="#a8a8a8"/><rect x="64.2" y="81.4" width="6.5" height="2.8" fill="#a8a8a8"/><rect x="72.7" y="81.4" width="11.0" height="2.8" fill="#a8a8a8"/><rect x="87.0" y="81.4" width="2.8" height="2.8" fill="#a8a8a8"/><rect x="92.1" y="81.4" width="2.6" height="2.8" fill="#a8a8a8"/><rect x="95.8" y="81.4" width="13.3" height="2.8" fill="#a8a8a8"/><rect x="111.5" y="81.4" width="14.9" height="2.8" fill="#a8a8a8"/><rect x="128.4" y="81.4" width="2.2" height="2.8" fill="#a8a8a8"/><rect x="132.4" y="81.4" width="10.3" height="2.8" fill="#a8a8a8"/><rect x="146.1" y="81.4" width="15.7" height="2.8" fill="#a8a8a8"/><rect x="163.9" y="81.4" width="7.8" height="2.8" fill="#a8a8a8"/><rect x="172.7" y="81.4" width="11.0" height="2.8" fill="#a8a8a8"/><rect x="185.1" y="81.4" width="4.1" height="2.8" fill="#a8a8a8"/><rect x="190.1" y="81.4" width="2.1" height="2.8" fill="#a8a8a8"/><rect x="194.8" y="81.4" width="3.7" height="2.8" fill="#a8a8a8"/><rect x="202.0" y="81.4" width="3.2" height="2.8" fill="#a8a8a8"/><rect x="208.4" y="81.4" width="3.8" height="2.8" fill="#a8a8a8"/><rect x="213.0" y="81.4" width="12.1" height="2.8" fill="#a8a8a8"/><rect x="226.5" y="81.4" width="4.2" height="2.8" fill="#a8a8a8"/><rect x="44.7" y="86.7" width="2.7" height="2.8" fill="#a8a8a8"/><rect x="50.3" y="86.7" width="12.0" height="2.8" fill="#a8a8a8"/><rect x="65.4" y="86.7" width="12.2" height="2.8" fill="#a8a8a8"/><rect x="78.7" y="86.7" width="10.8" height="2.8" fill="#a8a8a8"/><rect x="92.2" y="86.7" width="8.4" height="2.8" fill="#a8a8a8"/><rect x="104.0" y="86.7" width="5.6" height="2.8" fill="#a8a8a8"/><rect x="113.0" y="86.7" width="12.0" height="2.8" fill="#a8a8a8"/><rect x="125.8" y="86.7" width="2.2" height="2.8" fill="#a8a8a8"/><rect x="130.6" y="86.7" width="13.4" height="2.8" fill="#a8a8a8"/><rect x="145.1" y="86.7" width="6.4" height="2.8" fill="#a8a8a8"/><rect x="154.2" y="86.7" width="4.3" height="2.8" fill="#a8a8a8"/><rect x="161.7" y="86.7" width="8.8" height="2.8" fill="#a8a8a8"/><rect x="171.4" y="86.7" width="7.1" height="2.8" fill="#a8a8a8"/><rect x="181.0" y="86.7" width="8.1" height="2.8" fill="#a8a8a8"/><rect x="191.7" y="86.7" width="4.0" height="2.8" fill="#a8a8a8"/><rect x="198.7" y="86.7" width="7.1" height="2.8" fill="#a8a8a8"/><rect x="208.4" y="86.7" width="10.8" height="2.8" fill="#a8a8a8"/><rect x="221.1" y="86.7" width="7.4" height="2.8" fill="#a8a8a8"/><rect x="44.7" y="92.0" width="15.2" height="2.8" fill="#a8a8a8"/><rect x="62.9" y="92.0" width="9.9" height="2.8" fill="#a8a8a8"/><rect x="74.4" y="92.0" width="2.8" height="2.8" fill="#a8a8a8"/><rect x="80.7" y="92.0" width="11.8" height="2.8" fill="#a8a8a8"/><rect x="95.6" y="92.0" width="6.6" height="2.8" fill="#a8a8a8"/><rect x="104.7" y="92.0" width="15.7" height="2.8" fill="#a8a8a8"/><rect x="123.4" y="92.0" width="10.4" height="2.8" fill="#a8a8a8"/><rect x="135.5" y="92.0" width="8.0" height="2.8" fill="#a8a8a8"/><rect x="146.7" y="92.0" width="7.3" height="2.8" fill="#a8a8a8"/><rect x="156.6" y="92.0" width="10.4" height="2.8" fill="#a8a8a8"/><rect x="170.3" y="92.0" width="13.3" height="2.8" fill="#a8a8a8"/><rect x="185.2" y="92.0" width="2.0" height="2.8" fill="#a8a8a8"/><rect x="188.7" y="92.0" width="7.9" height="2.8" fill="#a8a8a8"/><rect x="199.0" y="92.0" width="13.4" height="2.8" fill="#a8a8a8"/><rect x="215.7" y="92.0" width="2.6" height="2.8" fill="#a8a8a8"/><rect x="221.3" y="92.0" width="9.4" height="2.8" fill="#a8a8a8"/><rect x="44.7" y="97.3" width="10.0" height="2.8" fill="#a8a8a8"/><rect x="56.3" y="97.3" width="13.9" height="2.8" fill="#a8a8a8"/><rect x="73.2" y="97.3" width="11.6" height="2.8" fill="#a8a8a8"/><rect x="88.0" y="97.3" width="6.9" height="2.8" fill="#a8a8a8"/><rect x="95.9" y="97.3" width="9.8" height="2.8" fill="#a8a8a8"/><rect x="108.6" y="97.3" width="4.8" height="2.8" fill="#a8a8a8"/><rect x="116.3" y="97.3" width="15.0" height="2.8" fill="#a8a8a8"/><rect x="132.8" y="97.3" width="10.5" height="2.8" fill="#a8a8a8"/><rect x="145.9" y="97.3" width="8.5" height="2.8" fill="#a8a8a8"/><rect x="155.8" y="97.3" width="5.6" height="2.8" fill="#a8a8a8"/><rect x="164.2" y="97.3" width="13.1" height="2.8" fill="#a8a8a8"/><rect x="179.3" y="97.3" width="3.2" height="2.8" fill="#a8a8a8"/><rect x="185.5" y="97.3" width="12.8" height="2.8" fill="#a8a8a8"/><rect x="199.8" y="97.3" width="10.1" height="2.8" fill="#a8a8a8"/><rect x="213.1" y="97.3" width="14.4" height="2.8" fill="#a8a8a8"/><rect x="44.7" y="102.6" width="8.7" height="2.8" fill="#a8a8a8"/><rect x="55.8" y="102.6" width="4.6" height="2.8" fill="#a8a8a8"/><rect x="61.7" y="102.6" width="4.5" height="2.8" fill="#a8a8a8"/><rect x="69.0" y="102.6" width="7.1" height="2.8" fill="#a8a8a8"/><rect x="78.4" y="102.6" width="7.6" height="2.8" fill="#a8a8a8"/><rect x="88.2" y="102.6" width="4.1" height="2.8" fill="#a8a8a8"/><rect x="93.2" y="102.6" width="16.0" height="2.8" fill="#a8a8a8"/><rect x="111.0" y="102.6" width="3.5" height="2.8" fill="#a8a8a8"/><rect x="117.0" y="102.6" width="13.0" height="2.8" fill="#a8a8a8"/><rect x="131.3" y="102.6" width="10.4" height="2.8" fill="#a8a8a8"/><rect x="143.4" y="102.6" width="9.3" height="2.8" fill="#a8a8a8"/><rect x="153.5" y="102.6" width="2.5" height="2.8" fill="#a8a8a8"/><rect x="159.5" y="102.6" width="14.1" height="2.8" fill="#a8a8a8"/><rect x="175.7" y="102.6" width="9.9" height="2.8" fill="#a8a8a8"/><rect x="187.2" y="102.6" width="12.9" height="2.8" fill="#a8a8a8"/><rect x="202.0" y="102.6" width="15.3" height="2.8" fill="#a8a8a8"/><rect x="220.2" y="102.6" width="10.5" height="2.8" fill="#a8a8a8"/><rect x="44.7" y="107.9" width="5.6" height="2.8" fill="#a8a8a8"/><rect x="51.2" y="107.9" width="4.8" height="2.8" fill="#a8a8a8"/><rect x="57.3" y="107.9" width="3.2" height="2.8" fill="#a8a8a8"/><rect x="61.4" y="107.9" width="9.8" height="2.8" fill="#a8a8a8"/><rect x="74.3" y="107.9" width="8.4" height="2.8" fill="#a8a8a8"/><rect x="86.1" y="107.9" width="14.7" height="2.8" fill="#a8a8a8"/><rect x="101.9" y="107.9" width="10.4" height="2.8" fill="#a8a8a8"/><rect x="114.1" y="107.9" width="3.7" height="2.8" fill="#a8a8a8"/><rect x="121.2" y="107.9" width="5.6" height="2.8" fill="#a8a8a8"/><rect x="129.1" y="107.9" width="11.0" height="2.8" fill="#a8a8a8"/><rect x="143.5" y="107.9" width="11.4" height="2.8" fill="#a8a8a8"/><rect x="156.7" y="107.9" width="8.3" height="2.8" fill="#a8a8a8"/><rect x="166.3" y="107.9" width="15.5" height="2.8" fill="#a8a8a8"/><rect x="185.3" y="107.9" width="5.1" height="2.8" fill="#a8a8a8"/><rect x="191.3" y="107.9" width="5.6" height="2.8" fill="#a8a8a8"/><rect x="198.6" y="107.9" width="14.6" height="2.8" fill="#a8a8a8"/><rect x="216.5" y="107.9" width="13.7" height="2.8" fill="#a8a8a8"/><rect x="44.7" y="113.2" width="13.0" height="2.8" fill="#a8a8a8"/><rect x="60.4" y="113.2" width="11.1" height="2.8" fill="#a8a8a8"/><rect x="75.0" y="113.2" width="2.8" height="2.8" fill="#a8a8a8"/><rect x="78.9" y="113.2" width="12.6" height="2.8" fill="#a8a8a8"/><rect x="94.9" y="113.2" width="11.5" height="2.8" fill="#a8a8a8"/><rect x="108.0" y="113.2" width="10.3" height="2.8" fill="#a8a8a8"/><rect x="121.1" y="113.2" width="3.5" height="2.8" fill="#a8a8a8"/><rect x="126.3" y="113.2" width="5.6" height="2.8" fill="#a8a8a8"/><rect x="133.0" y="113.2" width="8.7" height="2.8" fill="#a8a8a8"/><rect x="143.0" y="113.2" width="5.3" height="2.8" fill="#a8a8a8"/><rect x="149.5" y="113.2" width="11.5" height="2.8" fill="#a8a8a8"/><rect x="161.8" y="113.2" width="12.0" height="2.8" fill="#a8a8a8"/><rect x="175.2" y="113.2" width="2.5" height="2.8" fill="#a8a8a8"/><rect x="181.0" y="113.2" width="5.1" height="2.8" fill="#a8a8a8"/><rect x="189.5" y="113.2" width="14.1" height="2.8" fill="#a8a8a8"/><rect x="206.8" y="113.2" width="4.0" height="2.8" fill="#a8a8a8"/><rect x="212.8" y="113.2" width="3.4" height="2.8" fill="#a8a8a8"/><rect x="219.5" y="113.2" width="11.2" height="2.8" fill="#a8a8a8"/><rect x="44.7" y="118.5" width="8.3" height="2.8" fill="#a8a8a8"/><rect x="54.8" y="118.5" width="13.5" height="2.8" fill="#a8a8a8"/><rect x="70.4" y="118.5" width="10.8" height="2.8" fill="#a8a8a8"/><rect x="82.4" y="118.5" width="5.1" height="2.8" fill="#a8a8a8"/><rect x="88.4" y="118.5" width="12.0" height="2.8" fill="#a8a8a8"/><rect x="102.7" y="118.5" width="4.0" height="2.8" fill="#a8a8a8"/><rect x="109.9" y="118.5" width="5.7" height="2.8" fill="#a8a8a8"/><rect x="117.6" y="118.5" width="4.2" height="2.8" fill="#a8a8a8"/><rect x="123.3" y="118.5" width="13.8" height="2.8" fill="#a8a8a8"/><rect x="138.7" y="118.5" width="4.3" height="2.8" fill="#a8a8a8"/><rect x="145.2" y="118.5" width="6.5" height="2.8" fill="#a8a8a8"/><rect x="154.9" y="118.5" width="3.6" height="2.8" fill="#a8a8a8"/><rect x="162.0" y="118.5" width="2.8" height="2.8" fill="#a8a8a8"/><rect x="168.0" y="118.5" width="11.4" height="2.8" fill="#a8a8a8"/><rect x="180.8" y="118.5" width="8.7" height="2.8" fill="#a8a8a8"/><rect x="191.0" y="118.5" width="5.6" height="2.8" fill="#a8a8a8"/><rect x="198.0" y="118.5" width="7.1" height="2.8" fill="#a8a8a8"/><rect x="208.6" y="118.5" width="16.0" height="2.8" fill="#a8a8a8"/><rect x="227.9" y="118.5" width="2.8" height="2.8" fill="#a8a8a8"/><rect x="44.7" y="123.8" width="14.5" height="2.8" fill="#a8a8a8"/><rect x="60.2" y="123.8" width="12.2" height="2.8" fill="#a8a8a8"/><rect x="74.0" y="123.8" width="15.7" height="2.8" fill="#a8a8a8"/><rect x="90.5" y="123.8" width="13.3" height="2.8" fill="#a8a8a8"/><rect x="105.5" y="123.8" width="4.0" height="2.8" fill="#a8a8a8"/><rect x="110.3" y="123.8" width="13.7" height="2.8" fill="#a8a8a8"/><rect x="126.2" y="123.8" width="4.6" height="2.8" fill="#a8a8a8"/><rect x="132.8" y="123.8" width="14.8" height="2.8" fill="#a8a8a8"/><rect x="148.9" y="123.8" width="10.0" height="2.8" fill="#a8a8a8"/><rect x="160.1" y="123.8" width="4.5" height="2.8" fill="#a8a8a8"/><rect x="167.5" y="123.8" width="12.0" height="2.8" fill="#a8a8a8"/><rect x="180.8" y="123.8" width="3.1" height="2.8" fill="#a8a8a8"/><rect x="185.0" y="123.8" width="10.5" height="2.8" fill="#a8a8a8"/><rect x="197.6" y="123.8" width="5.8" height="2.8" fill="#a8a8a8"/><rect x="204.8" y="123.8" width="10.6" height="2.8" fill="#a8a8a8"/><rect x="218.1" y="123.8" width="12.6" height="2.8" fill="#a8a8a8"/><rect x="44.7" y="129.1" width="4.8" height="2.8" fill="#a8a8a8"/><rect x="50.5" y="129.1" width="12.3" height="2.8" fill="#a8a8a8"/><rect x="64.7" y="129.1" width="12.1" height="2.8" fill="#a8a8a8"/><rect x="77.7" y="129.1" width="13.3" height="2.8" fill="#a8a8a8"/><rect x="92.8" y="129.1" width="13.8" height="2.8" fill="#a8a8a8"/><rect x="109.7" y="129.1" width="8.9" height="2.8" fill="#a8a8a8"/><rect x="119.5" y="129.1" width="14.7" height="2.8" fill="#a8a8a8"/><rect x="136.3" y="129.1" width="14.2" height="2.8" fill="#a8a8a8"/><rect x="152.0" y="129.1" width="4.6" height="2.8" fill="#a8a8a8"/><rect x="159.7" y="129.1" width="7.1" height="2.8" fill="#a8a8a8"/><rect x="168.1" y="129.1" width="7.2" height="2.8" fill="#a8a8a8"/><rect x="177.7" y="129.1" width="2.1" height="2.8" fill="#a8a8a8"/><rect x="182.0" y="129.1" width="8.2" height="2.8" fill="#a8a8a8"/><rect x="192.4" y="129.1" width="3.7" height="2.8" fill="#a8a8a8"/><rect x="198.9" y="129.1" width="13.4" height="2.8" fill="#a8a8a8"/><rect x="215.5" y="129.1" width="6.5" height="2.8" fill="#a8a8a8"/><rect x="224.7" y="129.1" width="6.0" height="2.8" fill="#a8a8a8"/><rect x="44.7" y="134.4" width="2.9" height="2.8" fill="#a8a8a8"/><rect x="50.7" y="134.4" width="15.4" height="2.8" fill="#a8a8a8"/><rect x="68.2" y="134.4" width="9.2" height="2.8" fill="#a8a8a8"/><rect x="79.7" y="134.4" width="9.5" height="2.8" fill="#a8a8a8"/><rect x="90.0" y="134.4" width="15.5" height="2.8" fill="#a8a8a8"/><rect x="107.0" y="134.4" width="4.6" height="2.8" fill="#a8a8a8"/><rect x="112.6" y="134.4" width="5.5" height="2.8" fill="#a8a8a8"/><rect x="121.2" y="134.4" width="2.4" height="2.8" fill="#a8a8a8"/><rect x="124.6" y="134.4" width="11.8" height="2.8" fill="#a8a8a8"/><rect x="137.8" y="134.4" width="2.2" height="2.8" fill="#a8a8a8"/><rect x="142.4" y="134.4" width="10.1" height="2.8" fill="#a8a8a8"/><rect x="154.7" y="134.4" width="11.8" height="2.8" fill="#a8a8a8"/><rect x="167.6" y="134.4" width="14.2" height="2.8" fill="#a8a8a8"/><rect x="184.6" y="134.4" width="2.6" height="2.8" fill="#a8a8a8"/><rect x="188.3" y="134.4" width="8.9" height="2.8" fill="#a8a8a8"/><rect x="199.4" y="134.4" width="5.9" height="2.8" fill="#a8a8a8"/><rect x="206.5" y="134.4" width="7.7" height="2.8" fill="#a8a8a8"/><rect x="215.3" y="134.4" width="10.3" height="2.8" fill="#a8a8a8"/><rect x="228.7" y="134.4" width="2.0" height="2.8" fill="#a8a8a8"/><rect x="44.7" y="139.7" width="12.5" height="2.8" fill="#a8a8a8"/><rect x="58.4" y="139.7" width="13.6" height="2.8" fill="#a8a8a8"/><rect x="75.3" y="139.7" width="7.4" height="2.8" fill="#a8a8a8"/><rect x="84.7" y="139.7" width="13.8" height="2.8" fill="#a8a8a8"/><rect x="100.7" y="139.7" width="7.5" height="2.8" fill="#a8a8a8"/><rect x="111.6" y="139.7" width="12.9" height="2.8" fill="#a8a8a8"/><rect x="126.2" y="139.7" width="5.4" height="2.8" fill="#a8a8a8"/><rect x="133.3" y="139.7" width="8.1" height="2.8" fill="#a8a8a8"/><rect x="144.8" y="139.7" width="13.3" height="2.8" fill="#a8a8a8"/><rect x="161.4" y="139.7" width="13.4" height="2.8" fill="#a8a8a8"/><rect x="177.9" y="139.7" width="2.7" height="2.8" fill="#a8a8a8"/><rect x="182.8" y="139.7" width="15.4" height="2.8" fill="#a8a8a8"/><rect x="201.6" y="139.7" width="5.5" height="2.8" fill="#a8a8a8"/><rect x="209.0" y="139.7" width="10.9" height="2.8" fill="#a8a8a8"/><rect x="221.7" y="139.7" width="9.0" height="2.8" fill="#a8a8a8"/><rect x="44.7" y="145.0" width="8.1" height="2.8" fill="#a8a8a8"/><rect x="54.9" y="145.0" width="2.3" height="2.8" fill="#a8a8a8"/><rect x="58.4" y="145.0" width="15.6" height="2.8" fill="#a8a8a8"/><rect x="76.9" y="145.0" width="15.1" height="2.8" fill="#a8a8a8"/><rect x="94.5" y="145.0" width="13.3" height="2.8" fill="#a8a8a8"/><rect x="111.1" y="145.0" width="14.4" height="2.8" fill="#a8a8a8"/><rect x="126.3" y="145.0" width="11.0" height="2.8" fill="#a8a8a8"/><rect x="138.9" y="145.0" width="11.5" height="2.8" fill="#a8a8a8"/><rect x="151.9" y="145.0" width="9.6" height="2.8" fill="#a8a8a8"/><rect x="164.8" y="145.0" width="10.7" height="2.8" fill="#a8a8a8"/><rect x="177.0" y="145.0" width="9.3" height="2.8" fill="#a8a8a8"/><rect x="188.2" y="145.0" width="15.3" height="2.8" fill="#a8a8a8"/><rect x="205.1" y="145.0" width="6.3" height="2.8" fill="#a8a8a8"/><rect x="214.0" y="145.0" width="3.7" height="2.8" fill="#a8a8a8"/><rect x="220.1" y="145.0" width="10.6" height="2.8" fill="#a8a8a8"/><rect x="44.7" y="150.3" width="5.8" height="2.8" fill="#a8a8a8"/><rect x="52.5" y="150.3" width="9.5" height="2.8" fill="#a8a8a8"/><rect x="63.2" y="150.3" width="3.7" height="2.8" fill="#a8a8a8"/><rect x="68.1" y="150.3" width="6.1" height="2.8" fill="#a8a8a8"/><rect x="76.1" y="150.3" width="6.0" height="2.8" fill="#a8a8a8"/><rect x="83.6" y="150.3" width="3.2" height="2.8" fill="#a8a8a8"/><rect x="89.1" y="150.3" width="13.8" height="2.8" fill="#a8a8a8"/><rect x="105.3" y="150.3" width="10.0" height="2.8" fill="#a8a8a8"/><rect x="117.9" y="150.3" width="4.8" height="2.8" fill="#a8a8a8"/><rect x="125.4" y="150.3" width="8.5" height="2.8" fill="#a8a8a8"/><rect x="136.2" y="150.3" width="10.6" height="2.8" fill="#a8a8a8"/><rect x="148.8" y="150.3" width="6.3" height="2.8" fill="#a8a8a8"/><rect x="156.6" y="150.3" width="5.1" height="2.8" fill="#a8a8a8"/><rect x="163.9" y="150.3" width="7.4" height="2.8" fill="#a8a8a8"/><rect x="173.7" y="150.3" width="2.2" height="2.8" fill="#a8a8a8"/><rect x="177.6" y="150.3" width="14.1" height="2.8" fill="#a8a8a8"/><rect x="193.1" y="150.3" width="9.8" height="2.8" fill="#a8a8a8"/><rect x="205.1" y="150.3" width="6.0" height="2.8" fill="#a8a8a8"/><rect x="214.5" y="150.3" width="6.1" height="2.8" fill="#a8a8a8"/><rect x="223.6" y="150.3" width="4.2" height="2.8" fill="#a8a8a8"/><rect x="228.8" y="150.3" width="1.9" height="2.8" fill="#a8a8a8"/><rect x="44.7" y="155.6" width="2.9" height="2.8" fill="#a8a8a8"/><rect x="49.4" y="155.6" width="8.2" height="2.8" fill="#a8a8a8"/><rect x="60.4" y="155.6" width="3.5" height="2.8" fill="#a8a8a8"/><rect x="65.3" y="155.6" width="15.4" height="2.8" fill="#a8a8a8"/><rect x="83.6" y="155.6" width="4.2" height="2.8" fill="#a8a8a8"/><rect x="89.4" y="155.6" width="6.9" height="2.8" fill="#a8a8a8"/><rect x="99.0" y="155.6" width="10.6" height="2.8" fill="#a8a8a8"/><rect x="112.8" y="155.6" width="13.5" height="2.8" fill="#a8a8a8"/><rect x="128.5" y="155.6" width="12.3" height="2.8" fill="#a8a8a8"/><rect x="143.6" y="155.6" width="12.6" height="2.8" fill="#a8a8a8"/><rect x="158.4" y="155.6" width="13.0" height="2.8" fill="#a8a8a8"/><rect x="174.1" y="155.6" width="14.8" height="2.8" fill="#a8a8a8"/><rect x="190.0" y="155.6" width="14.2" height="2.8" fill="#a8a8a8"/><rect x="205.0" y="155.6" width="12.7" height="2.8" fill="#a8a8a8"/><rect x="220.1" y="155.6" width="9.0" height="2.8" fill="#a8a8a8"/><rect x="44.7" y="160.9" width="10.0" height="2.8" fill="#a8a8a8"/><rect x="56.6" y="160.9" width="13.0" height="2.8" fill="#a8a8a8"/><rect x="72.8" y="160.9" width="10.5" height="2.8" fill="#a8a8a8"/><rect x="85.1" y="160.9" width="8.3" height="2.8" fill="#a8a8a8"/><rect x="95.5" y="160.9" width="12.1" height="2.8" fill="#a8a8a8"/><rect x="109.2" y="160.9" width="7.5" height="2.8" fill="#a8a8a8"/><rect x="119.0" y="160.9" width="7.4" height="2.8" fill="#a8a8a8"/><rect x="128.1" y="160.9" width="13.0" height="2.8" fill="#a8a8a8"/><rect x="144.2" y="160.9" width="9.0" height="2.8" fill="#a8a8a8"/><rect x="155.2" y="160.9" width="4.6" height="2.8" fill="#a8a8a8"/><rect x="161.4" y="160.9" width="4.0" height="2.8" fill="#a8a8a8"/><rect x="167.8" y="160.9" width="10.1" height="2.8" fill="#a8a8a8"/><rect x="179.0" y="160.9" width="14.9" height="2.8" fill="#a8a8a8"/><rect x="195.5" y="160.9" width="13.8" height="2.8" fill="#a8a8a8"/><rect x="212.4" y="160.9" width="15.4" height="2.8" fill="#a8a8a8"/><rect x="229.2" y="160.9" width="1.5" height="2.8" fill="#a8a8a8"/><rect x="44.7" y="166.2" width="2.1" height="2.8" fill="#a8a8a8"/><rect x="47.8" y="166.2" width="9.9" height="2.8" fill="#a8a8a8"/><rect x="59.8" y="166.2" width="14.9" height="2.8" fill="#a8a8a8"/><rect x="77.6" y="166.2" width="9.5" height="2.8" fill="#a8a8a8"/><rect x="90.7" y="166.2" width="9.2" height="2.8" fill="#a8a8a8"/><rect x="102.1" y="166.2" width="11.6" height="2.8" fill="#a8a8a8"/><rect x="115.6" y="166.2" width="7.0" height="2.8" fill="#a8a8a8"/><rect x="125.0" y="166.2" width="6.9" height="2.8" fill="#a8a8a8"/><rect x="135.3" y="166.2" width="11.5" height="2.8" fill="#a8a8a8"/><rect x="149.0" y="166.2" width="3.4" height="2.8" fill="#a8a8a8"/><rect x="154.2" y="166.2" width="7.6" height="2.8" fill="#a8a8a8"/><rect x="164.1" y="166.2" width="10.0" height="2.8" fill="#a8a8a8"/><rect x="177.4" y="166.2" width="15.5" height="2.8" fill="#a8a8a8"/><rect x="195.0" y="166.2" width="8.2" height="2.8" fill="#a8a8a8"/><rect x="205.7" y="166.2" width="15.9" height="2.8" fill="#a8a8a8"/><rect x="223.3" y="166.2" width="7.4" height="2.8" fill="#a8a8a8"/><rect x="44.7" y="171.5" width="4.4" height="2.8" fill="#a8a8a8"/><rect x="50.8" y="171.5" width="15.7" height="2.8" fill="#a8a8a8"/><rect x="69.5" y="171.5" width="9.2" height="2.8" fill="#a8a8a8"/><rect x="79.8" y="171.5" width="14.5" height="2.8" fill="#a8a8a8"/><rect x="97.0" y="171.5" width="13.5" height="2.8" fill="#a8a8a8"/><rect x="114.0" y="171.5" width="14.4" height="2.8" fill="#a8a8a8"/><rect x="130.3" y="171.5" width="4.2" height="2.8" fill="#a8a8a8"/><rect x="136.1" y="171.5" width="9.2" height="2.8" fill="#a8a8a8"/><rect x="147.5" y="171.5" width="4.6" height="2.8" fill="#a8a8a8"/><rect x="153.4" y="171.5" width="10.8" height="2.8" fill="#a8a8a8"/><rect x="166.6" y="171.5" width="6.9" height="2.8" fill="#a8a8a8"/><rect x="177.1" y="171.5" width="10.9" height="2.8" fill="#a8a8a8"/><rect x="188.9" y="171.5" width="7.8" height="2.8" fill="#a8a8a8"/><rect x="199.6" y="171.5" width="6.3" height="2.8" fill="#a8a8a8"/><rect x="208.6" y="171.5" width="2.1" height="2.8" fill="#a8a8a8"/><rect x="212.3" y="171.5" width="13.8" height="2.8" fill="#a8a8a8"/><rect x="228.5" y="171.5" width="2.2" height="2.8" fill="#a8a8a8"/><rect x="44.7" y="176.8" width="9.0" height="2.8" fill="#a8a8a8"/><rect x="56.0" y="176.8" width="5.7" height="2.8" fill="#a8a8a8"/><rect x="64.3" y="176.8" width="9.4" height="2.8" fill="#a8a8a8"/><rect x="77.2" y="176.8" width="10.0" height="2.8" fill="#a8a8a8"/><rect x="89.2" y="176.8" width="3.7" height="2.8" fill="#a8a8a8"/><rect x="94.1" y="176.8" width="12.6" height="2.8" fill="#a8a8a8"/><rect x="107.8" y="176.8" width="3.4" height="2.8" fill="#a8a8a8"/><rect x="112.5" y="176.8" width="9.3" height="2.8" fill="#a8a8a8"/><rect x="124.8" y="176.8" width="10.6" height="2.8" fill="#a8a8a8"/><rect x="138.4" y="176.8" width="2.9" height="2.8" fill="#a8a8a8"/><rect x="142.1" y="176.8" width="12.8" height="2.8" fill="#a8a8a8"/><rect x="156.6" y="176.8" width="12.0" height="2.8" fill="#a8a8a8"/><rect x="170.4" y="176.8" width="4.4" height="2.8" fill="#a8a8a8"/><rect x="176.3" y="176.8" width="3.4" height="2.8" fill="#a8a8a8"/><rect x="182.9" y="176.8" width="10.2" height="2.8" fill="#a8a8a8"/><rect x="194.8" y="176.8" width="8.3" height="2.8" fill="#a8a8a8"/><rect x="205.0" y="176.8" width="2.8" height="2.8" fill="#a8a8a8"/><rect x="210.9" y="176.8" width="10.2" height="2.8" fill="#a8a8a8"/><rect x="224.5" y="176.8" width="6.2" height="2.8" fill="#a8a8a8"/><rect x="44.7" y="182.1" width="5.5" height="2.8" fill="#a8a8a8"/><rect x="51.1" y="182.1" width="15.0" height="2.8" fill="#a8a8a8"/><rect x="69.3" y="182.1" width="6.4" height="2.8" fill="#a8a8a8"/><rect x="78.9" y="182.1" width="13.4" height="2.8" fill="#a8a8a8"/><rect x="94.0" y="182.1" width="10.4" height="2.8" fill="#a8a8a8"/><rect x="107.8" y="182.1" width="8.9" height="2.8" fill="#a8a8a8"/><rect x="120.1" y="182.1" width="5.4" height="2.8" fill="#a8a8a8"/><rect x="127.4" y="182.1" width="12.1" height="2.8" fill="#a8a8a8"/><rect x="140.9" y="182.1" width="6.3" height="2.8" fill="#a8a8a8"/><rect x="150.4" y="182.1" width="8.8" height="2.8" fill="#a8a8a8"/><rect x="162.1" y="182.1" width="5.4" height="2.8" fill="#a8a8a8"/><rect x="168.8" y="182.1" width="7.0" height="2.8" fill="#a8a8a8"/><rect x="177.1" y="182.1" width="15.6" height="2.8" fill="#a8a8a8"/><rect x="194.3" y="182.1" width="9.9" height="2.8" fill="#a8a8a8"/><rect x="205.3" y="182.1" width="9.5" height="2.8" fill="#a8a8a8"/><rect x="216.6" y="182.1" width="7.6" height="2.8" fill="#a8a8a8"/><rect x="225.2" y="182.1" width="3.7" height="2.8" fill="#a8a8a8"/><rect x="44.7" y="187.4" width="6.9" height="2.8" fill="#a8a8a8"/><rect x="53.1" y="187.4" width="4.7" height="2.8" fill="#a8a8a8"/><rect x="59.3" y="187.4" width="5.3" height="2.8" fill="#a8a8a8"/><rect x="65.5" y="187.4" width="11.3" height="2.8" fill="#a8a8a8"/><rect x="78.6" y="187.4" width="4.2" height="2.8" fill="#a8a8a8"/><rect x="85.5" y="187.4" width="3.3" height="2.8" fill="#a8a8a8"/><rect x="90.3" y="187.4" width="13.7" height="2.8" fill="#a8a8a8"/><rect x="105.1" y="187.4" width="8.2" height="2.8" fill="#a8a8a8"/><rect x="116.4" y="187.4" width="13.3" height="2.8" fill="#a8a8a8"/><rect x="130.9" y="187.4" width="6.9" height="2.8" fill="#a8a8a8"/><rect x="140.6" y="187.4" width="7.3" height="2.8" fill="#a8a8a8"/><rect x="151.3" y="187.4" width="4.9" height="2.8" fill="#a8a8a8"/><rect x="159.6" y="187.4" width="9.1" height="2.8" fill="#a8a8a8"/><rect x="170.1" y="187.4" width="8.3" height="2.8" fill="#a8a8a8"/><rect x="179.6" y="187.4" width="11.9" height="2.8" fill="#a8a8a8"/><rect x="193.0" y="187.4" width="14.6" height="2.8" fill="#a8a8a8"/><rect x="210.0" y="187.4" width="7.2" height="2.8" fill="#a8a8a8"/><rect x="218.6" y="187.4" width="10.5" height="2.8" fill="#a8a8a8"/><rect x="44.7" y="192.7" width="14.2" height="2.8" fill="#a8a8a8"/><rect x="60.0" y="192.7" width="9.2" height="2.8" fill="#a8a8a8"/><rect x="71.5" y="192.7" width="5.8" height="2.8" fill="#a8a8a8"/><rect x="80.2" y="192.7" width="7.4" height="2.8" fill="#a8a8a8"/><rect x="90.2" y="192.7" width="9.9" height="2.8" fill="#a8a8a8"/><rect x="101.8" y="192.7" width="7.5" height="2.8" fill="#a8a8a8"/><rect x="110.3" y="192.7" width="4.5" height="2.8" fill="#a8a8a8"/><rect x="117.8" y="192.7" width="6.5" height="2.8" fill="#a8a8a8"/><rect x="126.9" y="192.7" width="3.5" height="2.8" fill="#a8a8a8"/><rect x="132.8" y="192.7" width="7.1" height="2.8" fill="#a8a8a8"/><rect x="142.0" y="192.7" width="6.2" height="2.8" fill="#a8a8a8"/><rect x="149.2" y="192.7" width="6.4" height="2.8" fill="#a8a8a8"/><rect x="156.9" y="192.7" width="3.8" height="2.8" fill="#a8a8a8"/><rect x="163.4" y="192.7" width="6.0" height="2.8" fill="#a8a8a8"/><rect x="171.3" y="192.7" width="14.7" height="2.8" fill="#a8a8a8"/><rect x="188.9" y="192.7" width="14.4" height="2.8" fill="#a8a8a8"/><rect x="206.4" y="192.7" width="3.9" height="2.8" fill="#a8a8a8"/><rect x="211.8" y="192.7" width="2.4" height="2.8" fill="#a8a8a8"/><rect x="216.9" y="192.7" width="11.3" height="2.8" fill="#a8a8a8"/><rect x="44.7" y="198.0" width="7.8" height="2.8" fill="#a8a8a8"/><rect x="55.1" y="198.0" width="11.8" height="2.8" fill="#a8a8a8"/><rect x="68.3" y="198.0" width="13.9" height="2.8" fill="#a8a8a8"/><rect x="83.9" y="198.0" width="10.8" height="2.8" fill="#a8a8a8"/><rect x="96.0" y="198.0" width="3.6" height="2.8" fill="#a8a8a8"/><rect x="102.9" y="198.0" width="12.3" height="2.8" fill="#a8a8a8"/><rect x="118.0" y="198.0" width="2.6" height="2.8" fill="#a8a8a8"/><rect x="121.4" y="198.0" width="4.3" height="2.8" fill="#a8a8a8"/><rect x="127.0" y="198.0" width="6.2" height="2.8" fill="#a8a8a8"/><rect x="135.1" y="198.0" width="2.5" height="2.8" fill="#a8a8a8"/><rect x="139.3" y="198.0" width="10.9" height="2.8" fill="#a8a8a8"/><rect x="151.5" y="198.0" width="13.8" height="2.8" fill="#a8a8a8"/><rect x="167.6" y="198.0" width="12.0" height="2.8" fill="#a8a8a8"/><rect x="181.2" y="198.0" width="8.1" height="2.8" fill="#a8a8a8"/><rect x="191.9" y="198.0" width="6.9" height="2.8" fill="#a8a8a8"/><rect x="199.6" y="198.0" width="13.7" height="2.8" fill="#a8a8a8"/><rect x="216.2" y="198.0" width="6.0" height="2.8" fill="#a8a8a8"/><rect x="223.1" y="198.0" width="7.6" height="2.8" fill="#a8a8a8"/><rect x="44.7" y="203.3" width="2.7" height="2.8" fill="#a8a8a8"/><rect x="48.8" y="203.3" width="3.6" height="2.8" fill="#a8a8a8"/><rect x="55.3" y="203.3" width="4.9" height="2.8" fill="#a8a8a8"/><rect x="63.6" y="203.3" width="12.5" height="2.8" fill="#a8a8a8"/><rect x="77.1" y="203.3" width="11.7" height="2.8" fill="#a8a8a8"/><rect x="90.7" y="203.3" width="12.5" height="2.8" fill="#a8a8a8"/><rect x="106.2" y="203.3" width="5.9" height="2.8" fill="#a8a8a8"/><rect x="113.2" y="203.3" width="15.2" height="2.8" fill="#a8a8a8"/><rect x="130.4" y="203.3" width="15.0" height="2.8" fill="#a8a8a8"/><rect x="148.1" y="203.3" width="12.3" height="2.8" fill="#a8a8a8"/><rect x="163.5" y="203.3" width="10.8" height="2.8" fill="#a8a8a8"/><rect x="176.3" y="203.3" width="2.8" height="2.8" fill="#a8a8a8"/><rect x="181.8" y="203.3" width="8.0" height="2.8" fill="#a8a8a8"/><rect x="192.0" y="203.3" width="15.0" height="2.8" fill="#a8a8a8"/><rect x="208.1" y="203.3" width="12.7" height="2.8" fill="#a8a8a8"/><rect x="221.7" y="203.3" width="9.0" height="2.8" fill="#a8a8a8"/><rect x="44.7" y="208.6" width="5.7" height="2.8" fill="#a8a8a8"/><rect x="52.6" y="208.6" width="15.6" height="2.8" fill="#a8a8a8"/><rect x="70.7" y="208.6" width="9.6" height="2.8" fill="#a8a8a8"/><rect x="81.8" y="208.6" width="2.8" height="2.8" fill="#a8a8a8"/><rect x="86.4" y="208.6" width="2.9" height="2.8" fill="#a8a8a8"/><rect x="49.7" y="247.5" width="6.3" height="2.2" fill="#9a9a9a"/><rect x="57.2" y="247.5" width="11.9" height="2.2" fill="#9a9a9a"/><rect x="71.7" y="247.5" width="5.3" height="2.2" fill="#9a9a9a"/><rect x="78.5" y="247.5" width="9.2" height="2.2" fill="#9a9a9a"/><rect x="89.8" y="247.5" width="15.1" height="2.2" fill="#9a9a9a"/><rect x="106.6" y="247.5" width="1.1" height="2.2" fill="#9a9a9a"/><rect x="49.7" y="254.0" width="4.0" height="2.2" fill="#9a9a9a"/><rect x="56.0" y="254.0" width="6.7" height="2.2" fill="#9a9a9a"/><rect x="65.7" y="254.0" width="9.7" height="2.2" fill="#9a9a9a"/><rect x="78.3" y="254.0" width="4.4" height="2.2" fill="#9a9a9a"/><rect x="85.2" y="254.0" width="10.4" height="2.2" fill="#9a9a9a"/><rect x="97.7" y="254.0" width="12.7" height="2.2" fill="#9a9a9a"/><rect x="113.5" y="254.0" width="3.6" height="2.2" fill="#9a9a9a"/><rect x="118.6" y="254.0" width="7.0" height="2.2" fill="#9a9a9a"/><rect x="127.1" y="254.0" width="2.8" height="2.2" fill="#9a9a9a"/><rect x="131.5" y="254.0" width="4.8" height="2.2" fill="#9a9a9a"/><rect x="138.9" y="254.0" width="8.3" height="2.2" fill="#9a9a9a"/><rect x="148.3" y="254.0" width="6.5" height="2.2" fill="#9a9a9a"/><rect x="156.9" y="254.0" width="1.8" height="2.2" fill="#9a9a9a"/><rect x="49.7" y="260.0" width="3.0" height="2.2" fill="#9a9a9a"/><rect x="53.5" y="260.0" width="15.9" height="2.2" fill="#9a9a9a"/><rect x="72.3" y="260.0" width="3.2" height="2.2" fill="#9a9a9a"/><rect x="78.2" y="260.0" width="14.5" height="2.2" fill="#9a9a9a"/><rect x="48.7" y="267.5" width="3.5" height="2.2" fill="#9a9a9a"/><rect x="54.4" y="267.5" width="8.1" height="2.2" fill="#9a9a9a"/><rect x="63.7" y="267.5" width="9.6" height="2.2" fill="#9a9a9a"/><rect x="74.2" y="267.5" width="14.9" height="2.2" fill="#9a9a9a"/><rect x="91.6" y="267.5" width="10.8" height="2.2" fill="#9a9a9a"/><rect x="105.7" y="267.5" width="11.1" height="2.2" fill="#9a9a9a"/><rect x="118.4" y="267.5" width="5.4" height="2.2" fill="#9a9a9a"/><rect x="125.0" y="267.5" width="2.4" height="2.2" fill="#9a9a9a"/><rect x="130.3" y="267.5" width="13.8" height="2.2" fill="#9a9a9a"/><rect x="145.6" y="267.5" width="4.6" height="2.2" fill="#9a9a9a"/><rect x="152.8" y="267.5" width="13.8" height="2.2" fill="#9a9a9a"/><rect x="169.9" y="267.5" width="4.4" height="2.2" fill="#9a9a9a"/><rect x="177.2" y="267.5" width="13.6" height="2.2" fill="#9a9a9a"/><rect x="193.7" y="267.5" width="6.6" height="2.2" fill="#9a9a9a"/><rect x="201.5" y="267.5" width="13.6" height="2.2" fill="#9a9a9a"/><rect x="216.8" y="267.5" width="7.2" height="2.2" fill="#9a9a9a"/><rect x="226.2" y="267.5" width="4.5" height="2.2" fill="#9a9a9a"/><rect x="44.7" y="273.0" width="5.4" height="2.2" fill="#9a9a9a"/><rect x="51.0" y="273.0" width="9.9" height="2.2" fill="#9a9a9a"/><rect x="63.4" y="273.0" width="13.5" height="2.2" fill="#9a9a9a"/><rect x="79.6" y="273.0" width="14.7" height="2.2" fill="#9a9a9a"/><rect x="97.6" y="273.0" width="8.9" height="2.2" fill="#9a9a9a"/><rect x="108.7" y="273.0" width="4.2" height="2.2" fill="#9a9a9a"/><rect x="114.5" y="273.0" width="10.1" height="2.2" fill="#9a9a9a"/><rect x="49.7" y="280.5" width="11.6" height="2.2" fill="#9a9a9a"/><rect x="62.6" y="280.5" width="8.2" height="2.2" fill="#9a9a9a"/><rect x="74.2" y="280.5" width="3.3" height="2.2" fill="#9a9a9a"/><rect x="78.4" y="280.5" width="8.2" height="2.2" fill="#9a9a9a"/><rect x="87.9" y="280.5" width="12.1" height="2.2" fill="#9a9a9a"/><rect x="100.8" y="280.5" width="13.8" height="2.2" fill="#9a9a9a"/><rect x="117.7" y="280.5" width="5.0" height="2.2" fill="#9a9a9a"/><rect x="49.7" y="286.5" width="6.0" height="2.2" fill="#9a9a9a"/><rect x="58.3" y="286.5" width="9.2" height="2.2" fill="#9a9a9a"/><rect x="69.4" y="286.5" width="6.7" height="2.2" fill="#9a9a9a"/><rect x="78.2" y="286.5" width="11.3" height="2.2" fill="#9a9a9a"/><rect x="48.7" y="295.0" width="14.7" height="2.2" fill="#9a9a9a"/><rect x="64.6" y="295.0" width="6.1" height="2.2" fill="#9a9a9a"/><rect x="72.7" y="295.0" width="9.9" height="2.2" fill="#9a9a9a"/><rect x="84.4" y="295.0" width="4.7" height="2.2" fill="#9a9a9a"/><rect x="90.2" y="295.0" width="6.5" height="2.2" fill="#9a9a9a"/><rect x="98.7" y="295.0" width="15.6" height="2.2" fill="#9a9a9a"/><rect x="117.6" y="295.0" width="14.1" height="2.2" fill="#9a9a9a"/><rect x="135.2" y="295.0" width="15.5" height="2.2" fill="#9a9a9a"/><rect x="153.1" y="295.0" width="13.4" height="2.2" fill="#9a9a9a"/><rect x="167.4" y="295.0" width="11.5" height="2.2" fill="#9a9a9a"/><rect x="181.4" y="295.0" width="6.2" height="2.2" fill="#9a9a9a"/><rect x="189.9" y="295.0" width="15.3" height="2.2" fill="#9a9a9a"/><rect x="207.3" y="295.0" width="11.1" height="2.2" fill="#9a9a9a"/><rect x="220.0" y="295.0" width="6.8" height="2.2" fill="#9a9a9a"/><rect x="44.7" y="300.5" width="2.4" height="2.2" fill="#9a9a9a"/><rect x="48.4" y="300.5" width="11.5" height="2.2" fill="#9a9a9a"/><rect x="61.9" y="300.5" width="3.2" height="2.2" fill="#9a9a9a"/><rect x="67.7" y="300.5" width="7.2" height="2.2" fill="#9a9a9a"/><rect x="77.3" y="300.5" width="7.8" height="2.2" fill="#9a9a9a"/><rect x="87.4" y="300.5" width="9.9" height="2.2" fill="#9a9a9a"/><rect x="99.2" y="300.5" width="3.6" height="2.2" fill="#9a9a9a"/><rect x="104.0" y="300.5" width="14.5" height="2.2" fill="#9a9a9a"/><rect x="120.8" y="300.5" width="3.6" height="2.2" fill="#9a9a9a"/><rect x="127.5" y="300.5" width="2.2" height="2.2" fill="#9a9a9a"/><rect x="49.7" y="310.0" width="9.4" height="2.2" fill="#9a9a9a"/><rect x="60.6" y="310.0" width="8.8" height="2.2" fill="#9a9a9a"/><rect x="49.7" y="315.5" width="5.2" height="2.2" fill="#9a9a9a"/><rect x="57.2" y="315.5" width="3.6" height="2.2" fill="#9a9a9a"/><rect x="63.0" y="315.5" width="10.2" height="2.2" fill="#9a9a9a"/><rect x="48.7" y="323.0" width="7.7" height="2.2" fill="#9a9a9a"/><rect x="57.4" y="323.0" width="8.2" height="2.2" fill="#9a9a9a"/><rect x="68.7" y="323.0" width="9.7" height="2.2" fill="#9a9a9a"/><rect x="81.2" y="323.0" width="12.6" height="2.2" fill="#9a9a9a"/><rect x="94.9" y="323.0" width="15.9" height="2.2" fill="#9a9a9a"/><rect x="113.5" y="323.0" width="3.4" height="2.2" fill="#9a9a9a"/><rect x="120.0" y="323.0" width="7.5" height="2.2" fill="#9a9a9a"/><rect x="128.7" y="323.0" width="15.4" height="2.2" fill="#9a9a9a"/><rect x="146.5" y="323.0" width="12.8" height="2.2" fill="#9a9a9a"/><rect x="160.5" y="323.0" width="12.9" height="2.2" fill="#9a9a9a"/><rect x="174.4" y="323.0" width="5.3" height="2.2" fill="#9a9a9a"/><rect x="181.5" y="323.0" width="2.2" height="2.2" fill="#9a9a9a"/><rect x="186.1" y="323.0" width="5.0" height="2.2" fill="#9a9a9a"/><rect x="192.7" y="323.0" width="11.9" height="2.2" fill="#9a9a9a"/><rect x="206.6" y="323.0" width="14.4" height="2.2" fill="#9a9a9a"/><rect x="223.5" y="323.0" width="7.2" height="2.2" fill="#9a9a9a"/><rect x="48.7" y="328.5" width="14.8" height="2.2" fill="#9a9a9a"/><rect x="66.7" y="328.5" width="4.4" height="2.2" fill="#9a9a9a"/><rect x="73.9" y="328.5" width="6.8" height="2.2" fill="#9a9a9a"/><rect x="83.5" y="328.5" width="11.5" height="2.2" fill="#9a9a9a"/><rect x="98.1" y="328.5" width="3.7" height="2.2" fill="#9a9a9a"/><rect x="103.7" y="328.5" width="12.3" height="2.2" fill="#9a9a9a"/><rect x="119.4" y="328.5" width="12.1" height="2.2" fill="#9a9a9a"/><rect x="132.4" y="328.5" width="10.5" height="2.2" fill="#9a9a9a"/><rect x="143.9" y="328.5" width="9.7" height="2.2" fill="#9a9a9a"/><rect x="156.6" y="328.5" width="3.6" height="2.2" fill="#9a9a9a"/><rect x="163.5" y="328.5" width="11.5" height="2.2" fill="#9a9a9a"/><rect x="176.4" y="328.5" width="4.7" height="2.2" fill="#9a9a9a"/><rect x="183.1" y="328.5" width="13.7" height="2.2" fill="#9a9a9a"/><rect x="199.2" y="328.5" width="3.6" height="2.2" fill="#9a9a9a"/><rect x="203.7" y="328.5" width="3.5" height="2.2" fill="#9a9a9a"/><rect x="210.2" y="328.5" width="4.6" height="2.2" fill="#9a9a9a"/><rect x="217.1" y="328.5" width="6.1" height="2.2" fill="#9a9a9a"/><rect x="225.9" y="328.5" width="4.8" height="2.2" fill="#9a9a9a"/><rect x="48.7" y="334.0" width="14.3" height="2.2" fill="#9a9a9a"/><rect x="65.2" y="334.0" width="11.7" height="2.2" fill="#9a9a9a"/><rect x="79.9" y="334.0" width="15.3" height="2.2" fill="#9a9a9a"/><rect x="96.0" y="334.0" width="6.8" height="2.2" fill="#9a9a9a"/><rect x="104.0" y="334.0" width="9.0" height="2.2" fill="#9a9a9a"/><rect x="116.2" y="334.0" width="13.2" height="2.2" fill="#9a9a9a"/><rect x="130.3" y="334.0" width="4.6" height="2.2" fill="#9a9a9a"/><rect x="137.9" y="334.0" width="11.5" height="2.2" fill="#9a9a9a"/><rect x="151.3" y="334.0" width="8.7" height="2.2" fill="#9a9a9a"/><rect x="161.1" y="334.0" width="13.8" height="2.2" fill="#9a9a9a"/><rect x="176.8" y="334.0" width="14.2" height="2.2" fill="#9a9a9a"/><rect x="193.5" y="334.0" width="3.1" height="2.2" fill="#9a9a9a"/><rect x="198.3" y="334.0" width="5.0" height="2.2" fill="#9a9a9a"/><rect x="206.6" y="334.0" width="10.2" height="2.2" fill="#9a9a9a"/><rect x="217.7" y="334.0" width="4.4" height="2.2" fill="#9a9a9a"/><rect x="223.9" y="334.0" width="6.8" height="2.2" fill="#9a9a9a"/><rect x="44.7" y="339.5" width="7.4" height="2.2" fill="#9a9a9a"/><rect x="53.9" y="339.5" width="2.1" height="2.2" fill="#9a9a9a"/><rect x="58.4" y="339.5" width="6.7" height="2.2" fill="#9a9a9a"/><rect x="65.9" y="339.5" width="8.4" height="2.2" fill="#9a9a9a"/><rect x="77.8" y="339.5" width="2.6" height="2.2" fill="#9a9a9a"/><rect x="81.6" y="339.5" width="11.4" height="2.2" fill="#9a9a9a"/><rect x="94.6" y="339.5" width="5.8" height="2.2" fill="#9a9a9a"/><rect x="102.5" y="339.5" width="2.2" height="2.2" fill="#9a9a9a"/><rect x="49.7" y="351.0" width="9.4" height="2.2" fill="#9a9a9a"/><rect x="62.5" y="351.0" width="2.2" height="2.2" fill="#9a9a9a"/><rect x="49.7" y="358.0" width="9.8" height="2.2" fill="#9a9a9a"/><rect x="62.4" y="358.0" width="14.2" height="2.2" fill="#9a9a9a"/><rect x="79.6" y="358.0" width="10.9" height="2.2" fill="#9a9a9a"/><rect x="93.0" y="358.0" width="7.1" height="2.2" fill="#9a9a9a"/><rect x="101.6" y="358.0" width="13.1" height="2.2" fill="#9a9a9a"/><rect x="117.9" y="358.0" width="15.1" height="2.2" fill="#9a9a9a"/></svg>
<div class="a" style="left:113.8px;top:133.6px;width:186.5px;height:1px;background:#c2c2c2"></div>
<div class="a" style="left:113.8px;top:351px;width:186.5px;height:1px;background:#efefef;filter:blur(0.6px)"></div>
<div class="a" style="left:390.7px;top:344.2px;width:186.5px;height:1px;background:#f1f1f1;filter:blur(0.6px)"></div>
<div class="a" style="left:390.7px;top:133.6px;width:186.5px;height:1px;background:#c2c2c2"></div>
<div class="a" style="left:654px;top:92.3px;width:9.5px;height:403.5px;background:#4a4a4a"></div>
<svg class="a" style="left:654.8px;top:94.5px;" width="8" height="6" viewBox="0 0 8 6"><path d="M1.7999999999999998 4.1 L4 1.9 L6.2 4.1" fill="none" stroke="#9a9a9a" stroke-width="0.8"/></svg>
<div class="a" style="left:655.5px;top:414.8px;width:7.5px;height:15.8px;background:#6a6a6a;border-radius:4px"></div>
<svg class="a" style="left:654.8px;top:488px;" width="8" height="6" viewBox="0 0 8 6"><path d="M1.7999999999999998 1.9 L4 4.1 L6.2 1.9" fill="none" stroke="#9a9a9a" stroke-width="0.8"/></svg>
<div class="a" style="left:663.5px;top:74.5px;width:1.8px;height:433px;background:#3a3a3a"></div>
<div class="a" style="left:27px;top:495.8px;width:636.5px;height:11.2px;background:#4d4d4d"></div>
<svg class="a" style="left:33.8px;top:498.5px;" width="7" height="7" viewBox="0 0 7 7"><rect x="0.5" y="0.5" width="1" height="6" fill="#b8b8b8"/><path d="M6.2 0.5v6L2 3.5z" fill="#b8b8b8"/></svg>
<svg class="a" style="left:47.5px;top:498.5px;" width="5" height="7" viewBox="0 0 5 7"><path d="M4.2 0.5v6L0.5 3.5z" fill="#b8b8b8"/></svg>
<div class="a" style="left:61.2px;top:496.8px;width:54.8px;height:10.2px;background:#3c3c3c"></div>
<div class="a" style="left:104px;top:496.8px;width:12px;height:10.2px;background:#474747;border:1px solid #575757"></div>
<div class="a t" style="left:62.5px;top:496px;font-size:7.2px;color:#e0e0e0">236</div>
<svg class="a" style="left:106.5px;top:498.6px;" width="8" height="6" viewBox="0 0 8 6"><path d="M1.7999999999999998 1.9 L4 4.1 L6.2 1.9" fill="none" stroke="#c8c8c8" stroke-width="0.8"/></svg>
<svg class="a" style="left:124px;top:498.5px;" width="5" height="7" viewBox="0 0 5 7"><path d="M0.5 0.5v6L4.2 3.5z" fill="#b8b8b8"/></svg>
<svg class="a" style="left:135.5px;top:498.5px;" width="7" height="7" viewBox="0 0 7 7"><path d="M0.5 0.5v6L4.5 3.5z" fill="#b8b8b8"/><rect x="5.5" y="0.5" width="1" height="6" fill="#b8b8b8"/></svg>
<svg class="a" style="left:152.5px;top:497px;" width="11" height="10" viewBox="0 0 11 10"><path d="M1.5 8.2A4.2 4.2 0 1 1 8.5 8.2" fill="none" stroke="#b8b8b8" stroke-width="1.1"/><path d="M5 1v3.5" stroke="#b8b8b8" stroke-width="0.9"/><path d="M4.2 4.5h2.5" stroke="#b8b8b8" stroke-width="0.9"/><rect x="9.6" y="8.6" width="1" height="1" fill="#b8b8b8"/></svg>
<div class="a t" style="left:172.5px;top:496px;font-size:6.85px;color:#d8d8d8">[Basic] (working)</div>
<svg class="a" style="left:235.8px;top:498.6px;" width="8" height="6" viewBox="0 0 8 6"><path d="M1.7999999999999998 1.9 L4 4.1 L6.2 1.9" fill="none" stroke="#c8c8c8" stroke-width="0.8"/></svg>
<div class="a" style="left:252.1px;top:498.3px;width:6.6px;height:6.6px;background:#3ec23e;border-radius:50%"></div>
<div class="a t" style="left:261.7px;top:496px;font-size:6.9px;color:#d8d8d8">No errors</div>
<svg class="a" style="left:300.4px;top:498.6px;" width="8" height="6" viewBox="0 0 8 6"><path d="M1.7999999999999998 1.9 L4 4.1 L6.2 1.9" fill="none" stroke="#c8c8c8" stroke-width="0.8"/></svg>
<div class="a" style="left:310px;top:495.8px;width:1px;height:11.2px;background:#3e3e3e"></div>
<svg class="a" style="left:313.5px;top:498.5px;" width="4" height="6" viewBox="0 0 4 6"><path d="M3.2 0.6L1 2.9 3.2 5.2" fill="none" stroke="#a8a8a8" stroke-width="0.8"/></svg>
<div class="a" style="left:320px;top:496.5px;width:333px;height:10px;background:#474747"></div>
<div class="a" style="left:383.3px;top:497px;width:183px;height:9px;background:#5f5f5f;border-radius:4.5px"></div>
<svg class="a" style="left:633px;top:498.5px;" width="4" height="6" viewBox="0 0 4 6"><path d="M0.8 0.6L3 2.9 0.8 5.2" fill="none" stroke="#a8a8a8" stroke-width="0.8"/></svg>
<svg class="a" style="left:643px;top:497.5px;" width="10" height="8.5" viewBox="0 0 10 8.5"><rect x="0.5" y="0.5" width="9" height="7.5" fill="none" stroke="#cfcfcf" stroke-width="0.9"/><path d="M5 0.5v7.5" stroke="#cfcfcf" stroke-width="0.9"/></svg>
<div class="a" style="left:654.5px;top:496px;width:9px;height:11px;background:#4e4e4e"></div>
<div class="a" style="left:665.3px;top:74.5px;width:102.7px;height:432.5px;background:#535353"></div>
<div class="a" style="left:665.3px;top:74.5px;width:102.7px;height:7.6px;background:#3d3d3d"></div>
<svg class="a" style="left:755.5px;top:76px;" width="7" height="5" viewBox="0 0 7 5"><path d="M3 0.6L1.2 2.4 3 4.2M5.8 0.6L4 2.4 5.8 4.2" fill="none" stroke="#bdbdbd" stroke-width="0.7"/></svg>
<div class="a" style="left:709px;top:84.8px;width:1px;height:1px;background:#3a3a3a"></div>
<div class="a" style="left:711px;top:84.8px;width:1px;height:1px;background:#3a3a3a"></div>
<div class="a" style="left:713px;top:84.8px;width:1px;height:1px;background:#3a3a3a"></div>
<div class="a" style="left:715px;top:84.8px;width:1px;height:1px;background:#3a3a3a"></div>
<div class="a" style="left:717px;top:84.8px;width:1px;height:1px;background:#3a3a3a"></div>
<div class="a" style="left:719px;top:84.8px;width:1px;height:1px;background:#3a3a3a"></div>
<div class="a" style="left:721px;top:84.8px;width:1px;height:1px;background:#3a3a3a"></div>
<svg class="a" style="left:672px;top:91px;" width="11.5" height="12" viewBox="0 0 11.5 12"><path d="M0.5 3.2L4.8 1.6V11H0.5z" fill="#d8d8d8"/><path d="M6.6 1.6L10.9 3.2V11H6.6z" fill="#d8d8d8"/><path d="M5.7 0v12" stroke="#d8d8d8" stroke-width="0.7"/><path d="M2.2 2.6v1.6M9.2 2.6v1.6" stroke="#8a8a8a" stroke-width="0.5"/></svg>
<div class="a t" style="left:688.8px;top:91px;font-size:7.25px;font-weight:bold;color:#e8e8e8">Pages</div>
<svg class="a" style="left:672px;top:108px;" width="11.5" height="11" viewBox="0 0 11.5 11"><path d="M5.6 0.3l5.2 3-5.2 3-5.2-3z" fill="#d8d8d8"/><path d="M0.8 6.4l4.8 2.8 4.8-2.8" fill="none" stroke="#d8d8d8" stroke-width="1.6"/></svg>
<div class="a t" style="left:688.8px;top:108.6px;font-size:7.25px;font-weight:bold;color:#e8e8e8">Layers</div>
<svg class="a" style="left:671.5px;top:129.3px;" width="12" height="6" viewBox="0 0 12 6"><rect x="0.7" y="0.7" width="6.4" height="4.2" rx="2.1" fill="none" stroke="#d8d8d8" stroke-width="1.1"/><rect x="5" y="0.7" width="6.4" height="4.2" rx="2.1" fill="none" stroke="#d8d8d8" stroke-width="1.1"/></svg>
<div class="a t" style="left:688.8px;top:126.19999999999999px;font-size:7.25px;font-weight:bold;color:#e8e8e8">Links</div>
<svg class="a" style="left:672px;top:153.5px;" width="11" height="9" viewBox="0 0 11 9"><rect x="0" y="0" width="11" height="1.2" fill="#d8d8d8"/><rect x="0" y="3" width="11" height="1.6" fill="#d8d8d8"/><rect x="0" y="6.4" width="11" height="2" fill="#d8d8d8"/></svg>
<div class="a t" style="left:688.8px;top:151.9px;font-size:7.25px;font-weight:bold;color:#e8e8e8">Stroke</div>
<svg class="a" style="left:672px;top:171.3px;" width="11" height="8" viewBox="0 0 11 8"><rect x="0" y="0" width="11" height="7.5" fill="#cfcfcf"/><g fill="#9a9a9a"><rect x="1" y="1" width="2.6" height="2.3"/><rect x="4.4" y="1" width="2.6" height="2.3"/><rect x="7.8" y="1" width="2.4" height="2.3"/><rect x="1" y="4.2" width="2.6" height="2.3"/><rect x="4.4" y="4.2" width="2.6" height="2.3"/><rect x="7.8" y="4.2" width="2.4" height="2.3"/></g><rect x="1" y="1" width="2.6" height="2.3" fill="#e6e6e6"/><rect x="7.8" y="4.2" width="2.4" height="2.3" fill="#e6e6e6"/></svg>
<div class="a t" style="left:688.8px;top:169.5px;font-size:7.25px;font-weight:bold;color:#e8e8e8">Swatches</div>
<svg class="a" style="left:672px;top:188.8px;" width="11" height="8.5" viewBox="0 0 11 8.5"><defs><linearGradient id="g3" x1="0" x2="1"><stop offset="0" stop-color="#5a5a5a"/><stop offset="1" stop-color="#d4d4d4"/></linearGradient></defs><rect x="0.5" y="0.5" width="10" height="7.5" fill="url(#g3)" stroke="#cfcfcf" stroke-width="0.9"/></svg>
<div class="a t" style="left:688.8px;top:187px;font-size:7.25px;font-weight:bold;color:#e8e8e8">Gradient</div>
<svg class="a" style="left:671.2px;top:206.2px;" width="13" height="10" viewBox="0 0 13 10"><ellipse cx="6.3" cy="4.8" rx="5.8" ry="4.3" fill="none" stroke="#cfcfcf" stroke-width="1"/><path d="M3.2 6.8c-.9 0-1.5-.6-1.5-1.4s.6-1.4 1.5-1.4c.4-1.2 1.5-1.9 2.7-1.9 1.4 0 2.4.9 2.7 2.1 1 0 1.8.7 1.8 1.3s-.6 1.3-1.5 1.3H6.5L4.8 4.9" fill="none" stroke="#cfcfcf" stroke-width="0.9"/></svg>
<div class="a t" style="left:688.8px;top:205px;font-size:7.25px;font-weight:bold;color:#e8e8e8">CC Libraries</div>
<svg class="a" style="left:672px;top:231.2px;" width="12" height="12" viewBox="0 0 12 12"><path d="M3.2 5V0.6h7.8v8H6.5" fill="none" stroke="#d0d0d0" stroke-width="0.9"/><rect x="0.5" y="5.6" width="3.6" height="3.6" fill="#535353" stroke="#d0d0d0" stroke-width="0.8"/><rect x="2.2" y="7.2" width="3.6" height="3.6" fill="#535353" stroke="#d0d0d0" stroke-width="0.8"/></svg>
<div class="a t" style="left:688.8px;top:231px;font-size:7.25px;font-weight:bold;color:#e8e8e8">Object Styles</div>
<svg class="a" style="left:672px;top:256.8px;" width="12" height="12" viewBox="0 0 12 12"><path d="M6.8 0.6h4.4v8.2h-1.3V1.7h-.7v7.1H8V4.6H6.8a2 2 0 0 1 0-4z" fill="#d0d0d0"/><rect x="0.5" y="5.6" width="3.6" height="3.6" fill="#535353" stroke="#d0d0d0" stroke-width="0.8"/><rect x="2.2" y="7.2" width="3.6" height="3.6" fill="#535353" stroke="#d0d0d0" stroke-width="0.8"/></svg>
<div class="a t" style="left:688.8px;top:256.6px;font-size:7.25px;font-weight:bold;color:#e8e8e8">Paragraph Styles</div>
<svg class="a" style="left:672px;top:282px;" width="12" height="12" viewBox="0 0 12 12"><path d="M5.4 8.4L8.4 0.6 11.4 8.4M6.5 5.8h3.8" fill="none" stroke="#d8d8d8" stroke-width="0.9"/><rect x="0.5" y="5.6" width="3.6" height="3.6" fill="#535353" stroke="#d0d0d0" stroke-width="0.8"/><rect x="2.2" y="7.2" width="3.6" height="3.6" fill="#535353" stroke="#d0d0d0" stroke-width="0.8"/></svg>
<div class="a t" style="left:688.8px;top:282px;font-size:7.25px;font-weight:bold;color:#e8e8e8">Character Styles</div>
<div class="a" style="left:665.3px;top:142.6px;width:102.7px;height:1px;background:#3b3b3b"></div>
<div class="a" style="left:709px;top:145.5px;width:1px;height:1px;background:#3a3a3a"></div>
<div class="a" style="left:711px;top:145.5px;width:1px;height:1px;background:#3a3a3a"></div>
<div class="a" style="left:713px;top:145.5px;width:1px;height:1px;background:#3a3a3a"></div>
<div class="a" style="left:715px;top:145.5px;width:1px;height:1px;background:#3a3a3a"></div>
<div class="a" style="left:717px;top:145.5px;width:1px;height:1px;background:#3a3a3a"></div>
<div class="a" style="left:719px;top:145.5px;width:1px;height:1px;background:#3a3a3a"></div>
<div class="a" style="left:721px;top:145.5px;width:1px;height:1px;background:#3a3a3a"></div>
<div class="a" style="left:665.3px;top:221.5px;width:102.7px;height:1px;background:#3b3b3b"></div>
<div class="a" style="left:709px;top:224.5px;width:1px;height:1px;background:#3a3a3a"></div>
<div class="a" style="left:711px;top:224.5px;width:1px;height:1px;background:#3a3a3a"></div>
<div class="a" style="left:713px;top:224.5px;width:1px;height:1px;background:#3a3a3a"></div>
<div class="a" style="left:715px;top:224.5px;width:1px;height:1px;background:#3a3a3a"></div>
<div class="a" style="left:717px;top:224.5px;width:1px;height:1px;background:#3a3a3a"></div>
<div class="a" style="left:719px;top:224.5px;width:1px;height:1px;background:#3a3a3a"></div>
<div class="a" style="left:721px;top:224.5px;width:1px;height:1px;background:#3a3a3a"></div>
<div class="a" style="left:665.3px;top:247.6px;width:102.7px;height:1px;background:#3b3b3b"></div>
<div class="a" style="left:709px;top:250.5px;width:1px;height:1px;background:#3a3a3a"></div>
<div class="a" style="left:711px;top:250.5px;width:1px;height:1px;background:#3a3a3a"></div>
<div class="a" style="left:713px;top:250.5px;width:1px;height:1px;background:#3a3a3a"></div>
<div class="a" style="left:715px;top:250.5px;width:1px;height:1px;background:#3a3a3a"></div>
<div class="a" style="left:717px;top:250.5px;width:1px;height:1px;background:#3a3a3a"></div>
<div class="a" style="left:719px;top:250.5px;width:1px;height:1px;background:#3a3a3a"></div>
<div class="a" style="left:721px;top:250.5px;width:1px;height:1px;background:#3a3a3a"></div>
<div class="a" style="left:665.3px;top:273.2px;width:102.7px;height:1px;background:#3b3b3b"></div>
<div class="a" style="left:709px;top:276px;width:1px;height:1px;background:#3a3a3a"></div>
<div class="a" style="left:711px;top:276px;width:1px;height:1px;background:#3a3a3a"></div>
<div class="a" style="left:713px;top:276px;width:1px;height:1px;background:#3a3a3a"></div>
<div class="a" style="left:715px;top:276px;width:1px;height:1px;background:#3a3a3a"></div>
<div class="a" style="left:717px;top:276px;width:1px;height:1px;background:#3a3a3a"></div>
<div class="a" style="left:719px;top:276px;width:1px;height:1px;background:#3a3a3a"></div>
<div class="a" style="left:721px;top:276px;width:1px;height:1px;background:#3a3a3a"></div>
<div class="a" style="left:665.3px;top:298.2px;width:102.7px;height:1px;background:#3b3b3b"></div>
<div class="a" style="left:538px;top:206.2px;width:103px;height:34.2px;background:#535353;border-radius:0 2px 2px 2px;box-shadow:0 1px 8px 2px rgba(0,0,0,.5)"></div>
<div class="a" style="left:538px;top:206.2px;width:103px;height:8.6px;background:#3b3b3b;border-radius:0 2px 0 0"></div>
<svg class="a" style="left:540px;top:208.3px;" width="5" height="5" viewBox="0 0 5 5"><path d="M0.4 0.4l4.2 4.2M4.6 0.4L0.4 4.6" stroke="#9c9c9c" stroke-width="0.9"/></svg>
<svg class="a" style="left:631.8px;top:208.8px;" width="7" height="5" viewBox="0 0 7 5"><path d="M1.2 0.6L3 2.4 1.2 4.2M4 0.6L5.8 2.4 4 4.2" fill="none" stroke="#bdbdbd" stroke-width="0.7"/></svg>
<div class="a" style="left:578px;top:217.5px;width:1px;height:1px;background:#3a3a3a"></div>
<div class="a" style="left:580px;top:217.5px;width:1px;height:1px;background:#3a3a3a"></div>
<div class="a" style="left:582px;top:217.5px;width:1px;height:1px;background:#3a3a3a"></div>
<div class="a" style="left:584px;top:217.5px;width:1px;height:1px;background:#3a3a3a"></div>
<div class="a" style="left:586px;top:217.5px;width:1px;height:1px;background:#3a3a3a"></div>
<div class="a" style="left:588px;top:217.5px;width:1px;height:1px;background:#3a3a3a"></div>
<div class="a" style="left:590px;top:217.5px;width:1px;height:1px;background:#3a3a3a"></div>
<div class="a" style="left:544.5px;top:222.5px;font-family:Liberation Serif;font-style:italic;font-size:12px;line-height:12px;color:#cfcfcf">fx</div>
<div class="a t" style="left:560.8px;top:223.8px;font-size:7.1px;font-weight:bold;color:#f0f0f0">Effects</div>
<div class="a" style="left:532.9px;top:200.3px;width:18.4px;height:20.8px;border:2.8px solid #e66e4c"></div>
<div class="a" style="left:0px;top:505.8px;width:768px;height:1.2px;background:#3a3a3a"></div>
</body></html>
